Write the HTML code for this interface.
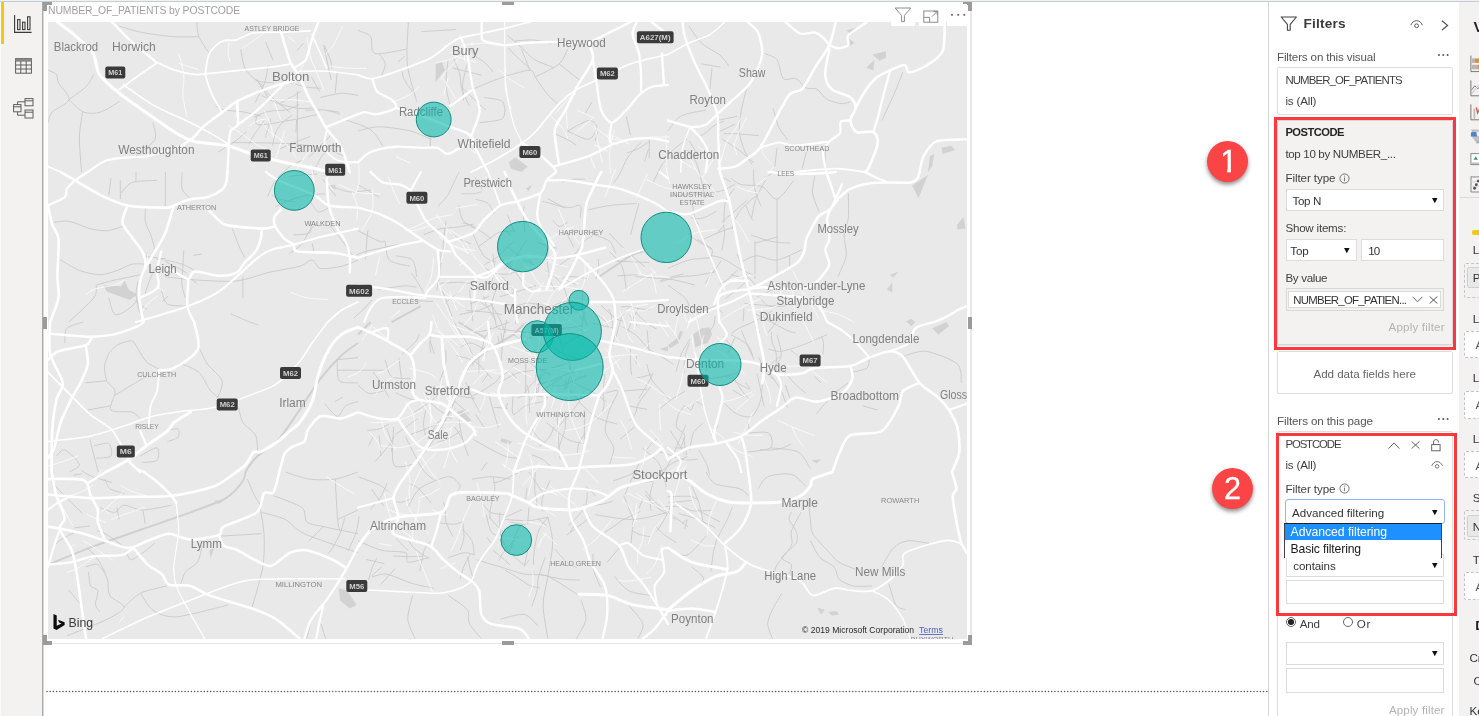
<!DOCTYPE html>
<html lang="en"><head><meta charset="utf-8"><title>Power BI - Filters</title>
<style>
html,body{margin:0;padding:0;background:#fff}
body{width:1479px;height:716px;overflow:hidden;position:relative;font-family:"Liberation Sans",sans-serif}
#app{position:absolute;left:0;top:0;width:1479px;height:716px;will-change:transform}
.b{position:absolute}
.t{position:absolute;white-space:nowrap;line-height:normal}
.ic{position:absolute;overflow:visible}
.map{position:absolute;display:block;font-family:"Liberation Sans",sans-serif}
.lb{fill:#808080;stroke:#ececec;stroke-width:1.4px;stroke-opacity:.4;paint-order:stroke}
.ls{fill:#868686;stroke:#ececec;stroke-width:1.2px;stroke-opacity:.4;paint-order:stroke}
.sh{fill:#d2d2d2;font-weight:700}
.bub{fill:#01b8aa;fill-opacity:.58;stroke:#0f8f84;stroke-width:1}
</style></head>
<body>
<div id="app">
<div class="b" style="left:0.0px;top:0.0px;width:1479.0px;height:1.0px;background:#eff2f4"></div>
<div class="b" style="left:0.0px;top:1.0px;width:1479.0px;height:1.0px;background:#c9cccf"></div>
<div class="b" style="left:0.0px;top:2.0px;width:42.0px;height:714.0px;background:#f3f2f1"></div>
<div class="b" style="left:0.0px;top:2.0px;width:1.2px;height:714.0px;background:#fbfbfb"></div>
<div class="b" style="left:1.0px;top:2.0px;width:3.0px;height:41.5px;background:#f2c811"></div>
<div class="b" style="left:42.0px;top:2.0px;width:1.0px;height:714.0px;background:#a9a9a9"></div>
<div class="b" style="left:43.0px;top:2.0px;width:0.6px;height:714.0px;background:#d9d9d9"></div>
<svg class="ic" style="left:13px;top:14px" width="20" height="20" viewBox="0 0 20 20" fill="none" stroke="#3b3a39" stroke-width="1.1"><path d="M1.6 1 V18.4 H18.6"/><rect x="4.6" y="5.6" width="2.4" height="10"/><rect x="9.6" y="8.2" width="2.4" height="7.4"/><rect x="14.6" y="2.8" width="2.4" height="12.8"/></svg>
<svg class="ic" style="left:14.5px;top:57.5px" width="17" height="16" viewBox="0 0 17 16" fill="none" stroke="#605e5c" stroke-width="1"><rect x="0.6" y="0.6" width="15.8" height="14.6"/><path d="M0.6 3 H16.4 M0.6 7 H16.4 M0.6 11 H16.4 M5.8 3 V15.2 M11.2 3 V15.2" /><rect x="0.6" y="0.6" width="15.8" height="2.4" fill="#8a8886" stroke="none"/></svg>
<svg class="ic" style="left:12.5px;top:97.5px" width="21" height="21" viewBox="0 0 21 21" fill="none" stroke="#605e5c" stroke-width="1"><rect x="12" y="0.6" width="8" height="7.2"/><path d="M12 2.8 H20"/><rect x="0.6" y="6.6" width="7.4" height="7.2"/><path d="M0.6 8.8 H8"/><rect x="12" y="12" width="8" height="8"/><path d="M12 14.2 H20"/><path d="M4.6 6.6 V3.8 H12 M4.6 13.8 V17.2 H12"/></svg>
<div class="b" style="left:970.2px;top:4.0px;width:1.6px;height:640.0px;background:#e7e7e7"></div>
<div class="b" style="left:47.0px;top:643.0px;width:924.8px;height:1.4px;background:#e7e7e7"></div>
<div class="b" style="left:42.6px;top:2.0px;width:9.4px;height:2.8px;background:#9b9b9b"></div>
<div class="b" style="left:42.6px;top:2.0px;width:4.0px;height:8.8px;background:#9b9b9b"></div>
<div class="b" style="left:962.7px;top:2.0px;width:9.4px;height:2.8px;background:#9b9b9b"></div>
<div class="b" style="left:968.1px;top:2.0px;width:4.0px;height:8.8px;background:#9b9b9b"></div>
<div class="b" style="left:43.2px;top:641.0px;width:8.8px;height:4.0px;background:#9b9b9b"></div>
<div class="b" style="left:43.2px;top:635.0px;width:3.8px;height:10.0px;background:#9b9b9b"></div>
<div class="b" style="left:963.0px;top:641.0px;width:9.1px;height:4.0px;background:#9b9b9b"></div>
<div class="b" style="left:968.3px;top:634.7px;width:3.8px;height:10.3px;background:#9b9b9b"></div>
<div class="b" style="left:42.6px;top:317.0px;width:4.0px;height:11.7px;background:#9b9b9b"></div>
<div class="b" style="left:968.3px;top:317.0px;width:3.8px;height:11.7px;background:#9b9b9b"></div>
<div class="b" style="left:501.5px;top:2.0px;width:12.0px;height:2.8px;background:#9b9b9b"></div>
<div class="b" style="left:501.5px;top:641.0px;width:12.0px;height:4.0px;background:#9b9b9b"></div>
<span class="t" style="left:48.1px;top:5.00px;font-size:10.4px;color:#a0a0a0;letter-spacing:-0.114px;">NUMBER_OF_PATIENTS by POSTCODE</span>
<svg class="map" style="left:48px;top:22px" width="919" height="617" viewBox="0 0 919 617">
<rect width="919" height="617" fill="#e9e9e9"/>
<path d="M387.6 41.9 393.8 39.8 397.0 48.2 387.6 59.7ZM460.9 140.4 467.2 135.2 479.8 144.6 473.5 150.1 463.0 146.7ZM798.2 8.4 809.7 5.2 804.4 12.6ZM801.3 16.8 806.5 21.0 801.3 24.1ZM824.4 32.5 838.0 29.3 838.0 35.6 831.7 38.8ZM818.1 46.1 826.5 37.7 825.4 48.2ZM893.5 125.8 903.0 123.7 907.2 127.9 894.6 132.0ZM882.0 134.1 886.2 132.0 884.1 144.6 879.9 150.1ZM55.5 263.2 73.4 264.2 76.5 257.9 80.7 267.4 89.1 272.6 81.7 277.9 58.7 269.5ZM280.9 163.6 287.2 162.6 287.2 167.8ZM477.7 166.8 484.0 162.6 480.8 168.9ZM864.2 163.6 879.9 153.1 870.5 176.2ZM909.2 202.4 915.5 195.1 917.6 206.6 909.2 207.6ZM842.2 252.7 850.6 249.6 845.3 255.8ZM839.0 267.4 844.3 260.0 844.3 270.5ZM856.8 300.1 863.1 296.7 867.3 300.1ZM408.5 390.1 414.8 388.0 423.2 398.5 419.0 400.6ZM453.6 416.3 464.1 419.5 460.9 422.6 452.5 419.5ZM611.8 327.2 620.0 324.1 620.0 329.3ZM645.2 312.6 653.5 306.3 661.9 305.2 664.0 312.6 659.8 321.0 647.2 325.2ZM620.0 323.1 628.4 316.8 632.6 308.4 634.7 310.5 630.5 321.0 622.1 326.2ZM858.9 300.0 867.3 300.0 863.1 304.2ZM884.1 306.3 898.8 300.0 900.9 304.2 890.4 312.6ZM763.6 438.3 773.0 437.3 768.8 441.5ZM161.4 528.3 166.2 526.0 162.6 536.6ZM290.8 566.3 299.1 568.7 308.6 582.9 301.5 586.5 292.0 578.2ZM166.2 478.5 175.7 478.5 170.9 482.0ZM769.5 585.8 776.7 587.7 773.1 592.4ZM780.2 590.0 788.5 588.9 790.9 592.4 783.8 593.6Z" fill="#d2d2d2"/>
<path d="M343.5 300.1 372.9 284.1M551.0 254.8C555.5 251.8 576.2 237.4 582.5 233.8C588.8 230.2 593.3 230.2 595.1 229.6M310.0 321.0C307.6 322.8 298.8 328.4 293.4 333.5C288.1 338.6 278.5 348.8 272.5 356.6C266.5 364.4 257.5 379.3 251.5 388.0C245.5 396.7 236.5 410.8 230.6 417.4C224.6 423.9 214.2 430.0 210.0 433.7C205.8 437.5 203.0 441.5 201.2 443.8C199.4 446.1 198.0 449.2 197.4 450.1M310.0 312.6C311.2 311.4 316.6 306.0 318.4 304.2C320.2 302.4 322.0 300.6 322.6 300.0M410.6 300.0C413.0 301.5 423.8 308.4 427.4 310.5C431.0 312.6 434.6 314.1 435.8 314.7M360.3 450.1C363.9 445.4 379.2 426.8 385.5 417.4C391.7 407.9 400.7 391.6 404.3 383.8C407.9 376.1 407.9 368.9 410.6 362.9C413.3 356.9 418.4 347.3 423.2 341.9C428.0 336.5 438.2 329.3 444.1 325.2C450.1 321.0 460.3 316.2 465.1 312.6C469.9 309.0 475.9 301.8 477.7 300.0M0.0 542.6C6.8 539.9 33.9 528.7 47.5 523.6C61.0 518.5 81.4 511.7 94.9 507.0C108.5 502.2 130.6 494.8 142.4 490.4C154.3 485.9 170.6 480.5 178.0 476.1C185.5 471.7 191.9 463.2 194.6 459.5C197.4 455.8 197.1 451.4 197.5 450.0" fill="none" stroke="#d0d0d0" stroke-width="2"/>
<path d="M0.0 48.2C1.2 48.8 6.9 50.6 8.4 52.4C9.9 54.2 8.7 57.2 10.5 60.8C12.3 64.4 21.9 73.4 21.0 77.6C20.1 81.7 7.2 86.8 4.2 90.1C1.2 93.4 0.6 99.1 0.0 100.6M21.0 77.6C23.1 79.3 31.1 88.3 35.6 90.1C40.1 91.9 47.3 91.6 52.4 90.1C57.5 88.6 68.6 81.1 71.3 79.6M46.1 52.4C44.9 54.2 41.3 61.4 37.7 65.0C34.1 68.6 23.4 75.8 21.0 77.6M34.6 90.1C34.1 93.7 31.6 106.7 31.4 115.3C31.3 123.8 33.2 145.1 33.5 150.1M104.8 100.6C105.1 103.0 109.3 112.6 106.9 117.4C104.5 122.2 90.7 131.7 88.0 134.1M148.8 0.0C149.1 2.1 149.1 10.2 150.9 14.7C152.7 19.2 159.9 29.0 161.4 31.4M71.3 4.2C74.6 5.1 86.5 9.0 94.3 10.5C102.1 12.0 117.7 14.1 125.8 14.7C133.8 15.3 147.3 14.7 150.9 14.7M209.6 92.2C209.6 93.7 205.1 101.8 209.6 102.7C214.1 103.6 232.4 100.0 241.0 98.5C249.7 97.0 266.2 93.1 270.4 92.2M249.4 69.2 249.4 125.8M184.4 120.5C192.5 120.7 227.6 120.8 241.0 121.6C254.5 122.3 273.4 125.2 278.8 125.8M192.8 27.2C193.4 29.9 194.6 41.6 197.0 46.1C199.4 50.6 205.4 56.6 209.6 58.7C213.8 60.8 224.0 60.5 226.4 60.8M272.5 75.5C275.5 74.9 288.1 71.6 293.4 71.3C298.8 71.0 307.6 73.1 310.0 73.4M289.2 50.3 287.2 71.3M360.3 0.0C360.2 6.0 358.1 30.5 359.3 41.9C360.5 53.3 367.3 74.3 368.7 79.6M310.0 8.4C311.8 9.3 320.2 11.4 322.6 14.7C325.0 18.0 321.7 29.6 326.8 31.4C331.9 33.2 353.7 27.8 358.2 27.2M331.0 31.4C331.9 32.9 336.9 38.6 337.2 41.9C337.5 45.2 333.7 52.7 333.1 54.5M400.1 37.7C399.8 41.3 397.7 56.3 398.0 62.9C398.3 69.5 401.6 80.8 402.2 83.8M456.7 54.5C460.3 53.6 477.4 47.9 481.9 48.2C486.4 48.5 485.8 53.3 488.2 56.6C490.6 59.9 495.6 67.7 498.6 71.3C501.6 74.9 507.6 80.2 509.1 81.7M473.5 27.2 481.9 48.2M519.6 27.2C518.4 29.3 515.7 38.0 511.2 41.9C506.7 45.8 491.5 52.7 488.2 54.5M511.2 41.9 532.2 58.7M435.8 75.5C438.5 76.1 451.9 76.7 454.6 79.6C457.3 82.6 457.9 93.4 454.6 96.4C451.3 99.4 434.9 100.0 431.6 100.6M425.3 67.1C427.4 66.2 435.5 62.6 440.0 60.8C444.4 59.0 454.3 55.4 456.7 54.5M310.0 109.0C313.0 108.4 323.5 104.8 331.0 104.8C338.4 104.8 354.9 107.2 362.4 109.0C369.9 110.8 380.4 116.2 383.4 117.4M382.3 113.2 382.3 125.8M519.6 109.0C522.6 107.5 536.4 99.1 540.6 98.5C544.8 97.9 548.9 102.1 548.9 104.8C548.9 107.5 544.8 116.8 540.6 117.4C536.4 118.0 522.6 110.2 519.6 109.0M578.3 94.3 582.5 113.2M601.3 117.4 601.3 136.2M641.0 4.2C642.8 6.6 649.0 16.8 653.5 21.0C658.0 25.2 668.5 30.2 672.4 33.5C676.3 36.8 679.6 42.5 680.8 44.0M653.5 41.9 672.4 45.1M664.0 46.1 661.9 67.1M716.4 31.4C718.2 32.3 726.3 34.1 729.0 37.7C731.7 41.3 732.6 53.9 735.3 56.6C738.0 59.3 744.6 55.2 747.9 56.6C751.2 57.9 755.3 64.5 758.3 66.0C761.3 67.5 765.8 65.4 768.8 67.1C771.8 68.7 775.7 75.5 779.3 77.6C782.9 79.6 790.7 81.4 794.0 81.7C797.3 82.0 801.2 79.9 802.4 79.6M699.6 62.9C698.8 66.5 694.6 81.4 693.4 88.0C692.2 94.6 691.0 103.6 691.3 109.0C691.6 114.4 693.7 121.0 695.5 125.8C697.3 130.6 702.6 140.1 703.8 142.5M669.3 98.5 689.2 94.3M620.0 109.0C621.8 106.9 627.2 97.3 632.6 94.3C638.0 91.3 654.1 88.9 657.7 88.0M854.8 50.3C853.6 53.3 849.4 64.4 846.4 71.3C843.4 78.2 835.6 94.6 833.8 98.5M729.0 125.8 726.9 144.6M758.3 130.0 754.1 146.7M777.2 125.8 777.2 146.7M6.3 200.3C8.4 200.2 15.9 198.4 21.0 199.3C26.1 200.2 36.5 205.2 41.9 206.6C47.3 207.9 54.0 209.0 58.7 208.7C63.3 208.4 72.2 205.1 74.4 204.5M62.9 156.3 60.8 173.1M72.3 158.4 72.3 177.2M73.4 171.0C74.9 169.5 78.8 162.3 83.8 160.5C88.9 158.7 105.4 158.7 109.0 158.4M88.0 150.0 88.0 160.5M117.4 150.0 117.4 185.6M134.1 150.0C134.1 152.4 132.9 162.9 134.1 166.8C135.3 170.7 141.3 175.8 142.5 177.2M97.5 185.6C97.5 187.7 96.7 196.4 97.5 200.3C98.2 204.2 101.4 209.0 102.7 212.9C104.1 216.8 106.3 225.5 106.9 227.6M184.4 206.6C185.3 209.0 188.9 219.2 190.7 223.4C192.5 227.6 196.1 234.1 197.0 235.9M12.6 238.0C15.3 239.5 25.8 246.4 31.4 248.5C37.1 250.6 47.0 252.7 52.4 252.7C57.8 252.7 64.7 250.0 69.2 248.5C73.7 247.0 79.8 243.1 83.8 242.2C87.9 241.3 95.5 242.2 97.5 242.2M48.2 263.2C48.1 264.7 49.0 270.4 47.2 273.7C45.4 277.0 39.4 282.5 35.6 286.2C31.9 290.0 23.1 298.1 21.0 300.1M48.2 263.2C50.3 262.6 56.6 260.5 62.9 259.0C69.2 257.5 88.0 253.6 92.2 252.7M60.8 275.8C61.7 278.2 64.1 291.0 67.1 292.5C70.1 294.0 78.3 288.6 81.7 286.2C85.2 283.8 89.8 277.3 91.2 275.8M117.4 238.0C119.8 238.6 130.0 240.7 134.1 242.2C138.3 243.7 144.9 247.6 146.7 248.5M117.4 254.8C121.6 255.2 136.5 257.3 146.7 257.9C156.9 258.5 178.2 260.0 188.6 259.0C199.1 257.9 211.1 252.7 220.1 250.6C229.1 248.5 245.2 246.1 251.5 244.3C257.8 242.5 261.1 237.7 264.1 238.0C267.1 238.3 268.3 245.5 272.5 246.4C276.7 247.3 288.1 245.5 293.4 244.3C298.8 243.1 307.6 238.9 310.0 238.0M194.9 254.8 194.9 275.8M113.2 267.4C114.1 269.5 115.7 279.7 119.5 282.0C123.2 284.4 136.5 283.8 139.4 284.1M245.2 212.9C247.6 212.6 259.6 212.9 262.0 210.8C264.4 208.7 262.0 200.0 262.0 198.2M262.0 179.3C263.2 180.8 267.7 188.9 270.4 189.8C273.1 190.7 279.4 186.2 280.9 185.6M264.1 221.3 266.2 230.7M410.6 183.5C411.2 185.6 412.4 194.9 414.8 198.2C417.2 201.5 425.6 205.4 427.4 206.6M425.3 212.9C426.8 215.9 432.5 229.9 435.8 233.8C439.1 237.7 446.5 239.2 448.3 240.1M337.2 219.2C337.8 221.9 337.8 234.4 341.4 238.0C345.0 241.6 359.4 243.4 362.4 244.3M494.4 179.3C498.0 180.2 514.2 185.0 519.6 185.6C525.0 186.2 530.4 182.0 532.2 183.5C534.0 185.0 532.2 194.3 532.2 196.1M504.9 198.2C505.8 199.1 509.1 204.2 511.2 204.5C513.3 204.8 518.4 200.9 519.6 200.3M540.6 187.7C543.6 187.1 554.6 184.4 561.5 183.5C568.4 182.6 584.9 181.7 588.8 181.4M561.5 229.6C563.3 231.7 571.7 238.9 574.1 244.3C576.5 249.7 577.7 264.1 578.3 267.4M590.9 181.4 582.5 212.9M310.0 208.7C313.0 210.2 327.1 217.7 331.0 219.2C334.9 220.7 336.3 219.2 337.2 219.2M347.7 233.8C350.1 234.4 361.5 235.0 364.5 238.0C367.5 241.0 368.1 252.4 368.7 254.8M393.8 267.4 404.3 294.6M310.0 162.6 331.0 175.2M427.4 177.2C429.2 177.8 437.3 179.3 440.0 181.4C442.6 183.5 445.3 190.4 446.2 191.9M519.6 212.9 525.9 225.5M546.8 212.9C548.9 213.8 558.5 216.5 561.5 219.2C564.5 221.9 566.9 229.9 567.8 231.7M729.0 177.2 729.0 254.8M707.0 219.2 707.0 256.9M682.9 156.3C684.4 157.2 688.9 161.4 693.4 162.6C697.9 163.8 709.2 162.6 714.3 164.7C719.4 166.8 724.5 178.1 729.0 177.2C733.5 176.3 743.4 161.1 745.8 158.4M766.7 154.2C766.4 156.6 764.0 165.9 764.6 171.0C765.2 176.1 770.0 187.1 770.9 189.8M800.3 171.0C800.3 174.6 800.9 190.1 800.3 196.1C799.7 202.1 796.4 207.5 796.1 212.9C795.8 218.3 799.1 227.9 798.2 233.8C797.3 239.8 791.0 251.8 789.8 254.8M741.6 233.8 741.6 244.3M707.0 221.3 729.0 215.0M693.4 240.1C695.5 239.2 702.9 234.1 708.0 233.8C713.1 233.5 722.4 238.9 729.0 238.0C735.6 237.1 750.6 229.0 754.1 227.6M649.3 217.1C651.4 218.6 662.2 224.9 664.0 227.6C665.8 230.2 662.2 234.7 661.9 235.9M620.0 246.4C623.0 245.2 635.0 239.5 641.0 238.0C646.9 236.5 658.9 236.2 661.9 235.9M620.0 263.2C622.4 265.0 633.8 272.8 636.8 275.8C639.8 278.8 640.4 282.9 641.0 284.1M682.9 252.7 691.3 254.8M712.2 275.8C713.4 277.0 717.0 282.9 720.6 284.1C724.2 285.3 735.0 284.1 737.4 284.1M60.8 331.4C62.0 330.2 65.9 324.9 69.2 323.1C72.5 321.3 80.8 318.3 83.8 318.9C86.8 319.5 88.0 324.3 90.1 327.2C92.2 330.2 95.5 337.0 98.5 339.8C101.5 342.7 109.3 346.1 111.1 347.2M60.8 331.4C60.2 333.2 56.9 340.1 56.6 344.0C56.3 347.9 57.2 355.1 58.7 358.7C60.2 362.3 66.5 365.0 67.1 369.2C67.7 373.4 60.5 385.0 62.9 388.0C65.3 391.0 79.6 388.9 83.8 390.1C88.0 391.3 91.0 395.5 92.2 396.4M67.1 373.4C69.5 371.9 79.3 365.6 83.8 362.9C88.3 360.2 96.4 355.7 98.5 354.5M37.7 360.8 58.7 358.7M39.8 388.0 62.9 383.8M16.8 321.0C17.1 318.9 16.2 309.3 18.9 306.3C21.6 303.3 33.2 300.9 35.6 300.0M134.1 341.9C136.5 343.1 147.0 346.7 150.9 350.3C154.8 353.9 158.7 363.5 161.4 367.1C164.1 370.7 168.6 374.3 169.8 375.5M150.9 325.2C152.1 327.5 156.0 337.1 159.3 341.9C162.6 346.7 172.5 353.9 174.0 358.7C175.5 363.5 170.4 373.1 169.8 375.5M190.7 385.9C191.3 388.0 192.5 396.7 194.9 400.6C197.3 404.5 205.4 409.0 207.5 413.2C209.6 417.4 209.3 427.6 209.6 430.0M289.2 337.7 310.0 335.6M289.2 348.2 310.0 348.2M289.2 337.7C289.5 340.7 288.4 355.4 291.3 358.7C294.3 362.0 307.3 360.5 310.0 360.8M276.7 381.7C278.5 383.5 286.3 394.0 289.2 394.3C292.2 394.6 294.7 385.9 297.6 383.8C300.6 381.7 308.2 380.2 310.0 379.6M41.9 417.4C42.5 419.8 44.9 429.5 46.1 434.1C47.3 438.8 49.7 447.8 50.3 450.1M46.1 423.7C48.2 423.4 58.4 420.1 60.8 421.6C63.2 423.1 64.7 432.0 62.9 434.1C61.1 436.2 50.3 435.9 48.2 436.2M8.4 434.1C9.6 433.2 13.5 426.7 16.8 427.9C20.1 429.1 30.8 439.4 31.4 442.5C32.0 445.7 22.5 449.0 21.0 450.1M92.2 434.1C94.6 432.9 106.6 425.2 109.0 425.8C111.4 426.4 111.1 436.2 109.0 438.3C106.9 440.4 96.4 440.1 94.3 440.4M117.4 409.0C119.2 408.7 128.2 406.0 130.0 406.9C131.7 407.8 131.4 413.5 130.0 415.3C128.5 417.1 121.0 418.9 119.5 419.5M337.2 337.7C338.1 340.1 339.9 351.8 343.5 354.5C347.1 357.2 359.7 356.3 362.4 356.6M310.0 348.2 337.2 348.2M412.7 325.2C414.2 324.6 419.9 320.7 423.2 321.0C426.5 321.3 434.0 326.3 435.8 327.2M408.5 333.5C411.2 334.4 422.3 336.5 427.4 339.8C432.5 343.1 441.7 354.2 444.1 356.6M456.7 352.4C458.5 350.9 466.3 343.7 469.3 341.9C472.3 340.1 476.5 340.1 477.7 339.8M477.7 339.8 477.7 372.3M465.1 373.4C465.1 376.1 463.3 390.7 465.1 392.2C466.9 393.7 473.5 385.6 477.7 383.8C481.9 382.0 492.1 380.2 494.4 379.6M509.1 392.2 511.2 430.0M498.6 400.6C501.6 403.0 514.2 414.4 519.6 417.4C525.0 420.4 534.0 421.0 536.4 421.6M536.4 388.0 536.4 417.4M557.3 371.3C559.1 371.0 569.3 366.8 569.9 369.2C570.5 371.6 563.3 382.3 561.5 388.0C559.7 393.7 556.7 403.6 557.3 409.0C557.9 414.4 565.1 421.0 565.7 425.8C566.3 430.6 562.1 440.1 561.5 442.5M582.5 327.2C582.8 331.1 581.6 350.9 584.6 354.5C587.6 358.1 600.7 352.7 603.4 352.4M599.2 308.4 601.3 331.4M574.1 369.2 599.2 367.1M425.3 417.4C427.4 418.6 435.5 423.4 440.0 425.8C444.4 428.2 452.5 432.6 456.7 434.1C460.9 435.6 467.5 435.9 469.3 436.2M345.6 404.8C345.6 410.2 342.9 437.1 345.6 442.5C348.3 447.9 361.8 442.5 364.5 442.5M331.0 413.2 333.1 434.1M406.4 404.8 414.8 417.4M427.4 392.2 435.8 404.8M310.0 362.9C311.5 364.1 316.9 370.4 320.5 371.3C324.1 372.2 333.1 369.5 335.2 369.2M586.7 404.8 572.0 417.4M693.4 308.4 703.8 333.5M682.9 312.6C685.3 314.1 696.4 319.5 699.6 323.1C702.9 326.6 705.0 335.6 705.9 337.7M729.0 312.6C729.6 315.6 733.8 328.4 733.2 333.5C732.6 338.6 726.0 346.1 724.8 348.2M720.6 327.2C722.4 327.5 728.4 329.9 733.2 329.3C738.0 328.7 747.6 325.5 754.1 323.1C760.7 320.7 775.7 314.1 779.3 312.6M804.4 350.3C806.5 349.7 816.7 347.9 819.1 346.1C821.5 344.3 820.9 338.9 821.2 337.7M854.8 334.6C858.0 333.8 870.0 328.3 877.8 329.3C885.6 330.4 904.2 337.4 909.2 341.9C914.3 346.4 912.8 358.1 913.4 360.8M697.6 360.8C698.2 361.7 702.9 367.1 701.7 367.1C700.5 367.1 692.2 362.6 689.2 360.8C686.2 359.0 682.0 355.4 680.8 354.5M676.6 381.7C678.4 383.2 685.3 390.4 689.2 392.2C693.1 394.0 700.5 396.1 703.8 394.3C707.1 392.5 710.7 384.1 712.2 379.6C713.7 375.2 714.0 365.3 714.3 362.9M699.6 400.6 701.7 409.0M699.6 411.1C702.6 411.1 717.3 409.0 720.6 411.1C723.9 413.2 725.7 423.1 722.7 425.8C719.7 428.5 702.9 429.4 699.6 430.0M722.7 425.8C726.6 426.4 744.3 427.0 750.0 430.0C755.6 432.9 760.7 444.3 762.5 446.7M630.5 392.2C631.4 391.0 635.0 384.4 636.8 383.8C638.6 383.2 641.6 388.6 643.1 388.0C644.6 387.4 645.5 380.2 647.2 379.6C649.0 379.0 654.4 383.2 655.6 383.8M630.5 392.2C630.2 394.0 627.5 401.8 628.4 404.8C629.3 407.8 636.2 410.2 636.8 413.2C637.4 416.2 633.2 424.0 632.6 425.8M737.4 362.9 741.6 375.5M814.9 383.8 829.6 388.0M766.7 354.5 773.0 360.8M850.6 383.8 852.7 369.2M57.0 457.1C57.6 458.5 59.0 464.6 61.7 466.6C64.4 468.7 73.9 470.7 76.0 471.4M52.2 485.6C54.3 486.3 63.1 490.7 66.5 490.4C69.9 490.0 71.9 483.6 76.0 483.2C80.0 482.9 88.2 488.0 94.9 488.0C101.7 488.0 119.4 483.9 123.4 483.2M94.9 488.0 97.3 502.2M68.8 485.6 71.2 497.5M199.4 457.1C200.4 459.5 204.8 470.3 206.5 473.7C208.2 477.1 210.6 479.8 211.3 480.9M211.3 480.9C211.9 485.3 215.5 502.6 216.0 511.7C216.5 520.9 216.5 534.4 214.8 544.9C213.1 555.5 205.7 579.5 204.1 585.3M287.2 457.1C287.6 462.9 288.9 490.0 289.6 497.5C290.3 504.9 291.6 507.6 292.0 509.3M237.4 450.0C240.8 451.0 254.0 456.1 261.1 457.1C268.2 458.1 280.2 458.1 287.2 457.1C294.2 456.1 306.7 451.0 310.0 450.0M225.5 473.7C229.6 475.4 249.2 481.9 254.0 485.6C258.7 489.3 255.7 497.1 258.7 499.8C261.8 502.6 268.0 502.9 275.3 504.6C282.7 506.3 305.0 510.7 310.0 511.7M275.3 504.6 261.1 518.8M310.0 488.0 289.6 497.5M213.6 490.4C217.0 491.4 231.3 494.4 237.4 497.5C243.5 500.5 246.0 507.0 256.4 511.7C266.7 516.5 302.3 528.0 310.0 530.7M154.3 523.6C153.6 526.0 151.9 536.5 149.5 540.2C147.2 543.9 140.0 546.6 137.7 549.7C135.3 552.7 133.6 559.9 132.9 561.6M38.0 544.9C39.7 544.6 46.8 540.9 49.8 542.6C52.9 544.3 57.6 552.4 59.3 556.8C61.0 561.2 59.3 569.4 61.7 573.4C64.1 577.5 76.3 581.9 76.0 585.3C75.6 588.7 67.5 593.1 59.3 597.2C51.2 601.2 24.8 611.4 19.0 613.8M40.4 549.7C40.7 551.7 41.4 561.2 42.7 563.9C44.1 566.6 49.2 566.0 49.8 568.7C50.5 571.4 47.1 579.9 47.5 582.9C47.8 586.0 51.5 589.0 52.2 590.0M92.6 571.1C94.3 573.4 99.4 584.3 104.4 587.7C109.5 591.1 117.3 595.5 128.2 594.8C139.0 594.1 172.9 584.6 180.4 582.9M76.0 585.3C78.3 583.3 86.5 574.1 92.6 571.1C98.7 568.0 115.0 565.0 118.7 563.9M78.3 530.7C79.0 531.7 80.7 537.8 83.1 537.8C85.5 537.8 91.6 533.1 94.9 530.7C98.3 528.3 105.1 522.6 106.8 521.2M263.5 597.2 258.7 616.6M273.0 601.9 277.7 616.6M173.3 514.1 213.6 511.7M310.0 454.7C313.4 456.1 328.7 461.2 333.7 464.2C338.8 467.3 343.9 474.4 345.6 476.1M359.8 485.6C361.5 482.9 366.0 471.0 371.7 466.6C377.5 462.2 394.4 455.1 400.2 454.7C406.0 454.4 411.4 461.5 412.1 464.2C412.7 467.0 406.0 472.4 404.9 473.7M423.9 457.1C426.6 456.8 437.5 454.7 442.9 454.7C448.4 454.7 459.2 456.8 461.9 457.1M480.9 450.0C482.3 452.0 488.4 461.2 490.4 464.2C492.4 467.3 494.5 470.3 495.1 471.4M433.4 480.9C434.8 482.2 439.5 488.7 442.9 490.4C446.3 492.0 455.1 492.4 457.2 492.7M438.2 492.7C438.9 495.1 441.2 506.3 442.9 509.3C444.6 512.4 449.0 513.4 450.0 514.1M480.9 485.6 479.7 502.2M457.2 497.5C460.6 497.6 474.8 499.0 480.9 498.7C487.0 498.3 497.2 495.6 499.9 495.1M499.9 495.1C498.5 497.1 492.4 503.9 490.4 509.3C488.4 514.8 486.3 527.0 485.7 533.1C485.0 539.2 485.7 549.4 485.7 552.1M499.9 495.1C500.6 498.8 504.6 512.7 504.6 521.2C504.6 529.7 501.2 545.6 499.9 554.4C498.5 563.3 495.1 574.0 495.1 582.9C495.1 591.8 499.2 611.8 499.9 616.6M428.7 537.8C432.1 538.8 445.6 542.9 452.4 544.9C459.2 547.0 469.4 550.7 476.2 552.1C482.9 553.4 492.1 551.4 499.9 554.4C507.7 557.5 526.3 570.7 530.8 573.4M445.3 528.3 461.9 542.6M464.3 533.1C466.0 534.4 473.8 541.9 476.2 542.6C478.5 543.3 480.2 538.5 480.9 537.8M400.2 535.5C402.6 534.8 413.1 531.0 416.8 530.7C420.5 530.4 425.0 532.7 426.3 533.1M414.4 507.0C415.8 508.7 422.2 515.1 423.9 518.8C425.6 522.6 426.0 531.0 426.3 533.1M310.0 518.8C313.4 520.2 327.0 526.6 333.7 528.3C340.5 530.0 353.7 529.0 357.5 530.7C361.2 532.4 356.5 539.5 359.8 540.2C363.2 540.9 378.2 536.1 381.2 535.5M333.7 544.9C332.4 546.3 323.6 553.4 324.2 554.4C324.9 555.5 332.7 551.1 338.5 552.1C344.2 553.1 357.8 559.5 364.6 561.6C371.4 563.6 382.9 565.6 386.0 566.3M364.6 573.4C363.9 576.8 359.5 591.0 359.8 597.2C360.2 603.3 366.0 613.9 367.0 616.6M400.2 573.4C402.9 575.5 416.1 583.6 419.2 587.7C422.2 591.7 419.5 597.8 421.6 601.9C423.6 606.1 431.7 614.5 433.4 616.6M452.4 597.2C455.8 596.5 470.7 591.4 476.2 592.4C481.6 593.4 488.4 602.6 490.4 604.3M533.1 578.2C533.8 580.9 538.5 591.7 537.9 597.2C537.2 602.7 529.7 613.9 528.4 616.6M585.3 497.5 583.0 521.2M547.4 492.7C552.8 493.4 575.0 497.8 585.3 497.5C595.7 497.1 615.0 491.4 620.0 490.4M566.4 554.4C568.4 556.5 575.5 566.0 580.6 568.7C585.7 571.4 598.9 572.8 602.0 573.4M559.2 540.2 571.1 526.0M537.9 464.2 547.4 473.7M580.6 582.9C582.6 585.6 593.5 597.1 594.8 601.9C596.2 606.7 590.8 614.5 590.1 616.6M575.8 473.7 585.3 497.5M348.0 516.5 359.8 528.3M658.0 450.0C659.3 451.7 662.7 459.5 667.5 461.9C672.2 464.2 686.5 464.9 691.2 466.6C696.0 468.3 699.3 472.7 700.7 473.7M710.2 466.6C711.6 464.9 714.9 456.8 719.7 454.7C724.4 452.7 738.0 451.0 743.4 452.4C748.9 453.7 755.6 462.5 757.7 464.2M643.7 464.2C644.8 466.6 649.2 475.4 650.9 480.9C652.6 486.3 654.9 499.2 655.6 502.2M620.0 480.9 643.7 478.5M634.2 502.2C634.9 501.5 638.7 496.8 639.0 497.5C639.3 498.2 637.0 505.6 636.6 507.0M684.1 485.6C683.4 487.3 681.7 492.4 679.3 497.5C677.0 502.6 669.8 513.7 667.5 521.2C665.1 528.7 663.4 545.6 662.7 549.7M743.4 490.4C743.1 491.4 740.4 494.8 741.1 497.5C741.7 500.2 747.2 506.0 748.2 509.3C749.2 512.7 750.2 517.5 748.2 521.2C746.1 524.9 734.6 532.4 733.9 535.5C733.3 538.5 742.4 540.2 743.4 542.6C744.4 544.9 741.4 550.7 741.1 552.1M752.9 490.4C751.6 493.1 744.8 504.6 743.4 509.3C742.1 514.1 745.5 518.8 743.4 523.6C741.4 528.3 731.6 538.8 729.2 542.6C726.8 546.3 727.2 548.7 726.8 549.7M760.0 476.1C760.4 479.2 761.7 492.4 762.4 497.5C763.1 502.6 762.1 507.0 764.8 511.7C767.5 516.5 777.7 526.6 781.4 530.7C785.1 534.8 787.2 537.8 790.9 540.2C794.6 542.6 805.1 546.3 807.5 547.3M762.4 518.8C763.8 521.2 768.5 531.7 771.9 535.5C775.3 539.2 783.4 541.9 786.2 544.9C788.9 548.0 788.2 554.1 790.9 556.8C793.6 559.5 800.4 562.9 805.1 563.9C809.9 565.0 821.4 563.9 824.1 563.9M733.9 571.1C732.6 573.4 726.5 583.3 724.4 587.7C722.4 592.1 719.7 597.8 719.7 601.9C719.7 606.1 723.8 614.5 724.4 616.6M833.6 544.9C835.3 542.2 841.8 529.7 845.5 526.0C849.2 522.2 854.7 519.5 859.7 518.8C864.8 518.2 878.1 520.9 881.1 521.2M840.8 561.6C841.8 564.6 845.5 579.2 847.9 582.9C850.2 586.7 856.0 587.0 857.4 587.7M620.0 528.3C622.7 529.0 633.6 535.1 639.0 533.1C644.4 531.0 655.3 516.8 658.0 514.1M643.7 544.9C645.4 546.6 655.6 553.4 655.6 556.8C655.6 560.2 645.4 567.0 643.7 568.7M492.7 351.4 489.8 370.5M572.7 285.0C573.8 284.9 577.7 284.2 580.7 284.5C583.8 284.8 590.7 286.9 593.8 287.2C597.0 287.6 601.4 287.1 602.7 287.1M459.5 381.1 457.1 389.6M580.6 383.9 598.8 387.3M454.2 281.9C456.3 282.1 465.3 283.5 469.1 283.4C472.9 283.3 476.2 281.0 480.6 281.1C485.1 281.2 497.5 283.8 500.3 284.3M496.9 351.7C495.3 352.9 488.5 357.3 485.5 360.1C482.5 362.9 477.3 369.8 476.0 371.4M459.9 386.4 445.7 385.3M637.3 369.0C635.6 370.0 629.0 373.6 625.2 376.3C621.3 379.0 612.5 386.4 610.4 388.1M640.1 211.8C641.2 212.7 644.7 215.8 648.1 218.1C651.5 220.3 661.8 226.0 664.1 227.3M481.7 287.2C484.4 286.8 495.6 285.9 500.4 284.9C505.1 283.9 511.3 280.9 515.0 280.0C518.7 279.1 524.5 279.0 526.1 278.8M368.4 265.1C366.7 264.9 360.6 263.7 356.6 263.8C352.6 264.0 344.5 265.5 340.7 266.0C336.8 266.6 331.2 267.3 329.6 267.5M452.4 353.9C451.7 354.8 450.3 357.9 447.4 360.2C444.4 362.6 435.2 368.5 431.7 370.5C428.2 372.5 424.4 373.7 423.1 374.2M639.5 434.5C637.2 435.6 627.6 439.1 623.0 442.0C618.4 445.0 609.6 453.2 607.4 455.0M545.4 291.0C546.7 291.8 552.2 294.5 554.8 296.8C557.3 299.1 562.0 305.7 563.2 307.2M514.1 355.6C512.0 357.0 502.6 363.4 499.5 365.2C496.3 367.1 494.7 366.7 492.3 368.5C489.9 370.3 484.1 376.5 482.7 377.9M403.5 212.1C404.5 212.7 407.6 214.9 410.4 216.3C413.1 217.7 421.1 221.2 422.9 222.0M584.2 286.7C586.3 288.8 595.7 298.6 599.2 301.5C602.6 304.4 607.3 306.2 608.6 307.0M436.3 246.2C438.2 247.0 446.0 251.0 449.7 251.7C453.3 252.5 458.7 252.4 461.9 251.8C465.0 251.2 470.4 248.3 471.9 247.8M458.6 297.7C458.4 298.9 457.6 303.0 457.1 306.1C456.5 309.2 455.3 314.7 454.8 319.4C454.2 324.1 453.3 336.1 453.1 338.9M512.8 255.5 528.3 262.4M435.7 274.1C436.0 275.2 436.1 278.5 437.9 282.0C439.6 285.6 446.6 296.6 448.0 299.0M544.2 214.2C543.1 215.0 538.9 216.6 536.3 219.2C533.8 221.8 530.1 229.0 526.3 232.5C522.6 236.0 512.6 242.1 510.4 243.7M499.4 176.5 516.4 185.9M457.2 207.8 462.4 213.4M686.8 315.8 679.7 331.1M503.3 308.1C506.4 307.7 520.2 305.9 524.7 305.3C529.2 304.7 533.4 304.1 534.9 303.9M210.2 302.9C208.9 302.4 203.3 300.6 200.6 299.6C197.9 298.5 193.8 296.7 191.3 295.6C188.8 294.5 184.2 292.4 183.0 291.8M635.4 415.8 638.6 433.1M417.8 360.1C418.7 362.5 422.6 372.6 424.7 377.0C426.7 381.4 431.1 388.7 432.2 390.7M294.8 375.1 287.1 379.6M600.4 127.3 596.5 139.6M673.5 154.7 682.6 159.7M654.5 401.6C653.7 402.3 649.7 405.4 648.3 407.0C646.9 408.6 645.6 409.9 644.6 413.0C643.7 416.0 642.2 426.1 641.8 428.3M400.0 370.2C402.0 370.8 409.9 373.8 413.8 374.6C417.6 375.5 425.1 376.0 427.0 376.2M537.0 289.8C536.6 291.5 534.6 298.1 534.2 301.2C533.7 304.3 534.0 310.1 534.0 311.6M451.8 490.5C451.9 493.4 451.1 505.2 452.3 510.9C453.5 516.6 458.9 527.3 460.0 530.1M545.0 301.2C546.9 301.6 554.7 303.6 557.9 304.4C561.1 305.1 566.1 306.0 567.4 306.3M581.2 285.2C580.1 286.6 575.6 290.8 573.7 295.1C571.8 299.5 568.7 312.7 567.8 315.6M590.3 286.2C589.3 288.3 584.7 297.0 583.1 300.6C581.5 304.3 579.6 310.1 579.0 311.7M476.9 328.7 486.9 330.4M574.7 304.9C576.7 306.2 584.8 310.4 588.5 313.6C592.3 316.7 596.9 323.9 600.8 327.1C604.6 330.2 613.3 334.4 615.4 335.7M483.6 406.4C484.4 407.6 487.3 412.5 489.3 414.6C491.2 416.8 496.3 420.5 497.5 421.4M442.6 281.5C443.6 283.3 447.9 289.8 450.1 294.0C452.3 298.3 456.8 309.0 457.9 311.5M603.3 364.0C601.5 366.4 593.3 376.8 591.0 380.7C588.7 384.6 588.7 388.9 587.3 391.5C585.9 394.1 581.8 397.9 580.9 399.0M601.2 328.9C602.2 329.3 604.9 329.4 608.4 331.4C611.9 333.3 623.3 341.0 625.8 342.6M440.0 352.1 434.2 360.3M500.1 375.9C497.5 375.5 486.5 373.0 482.1 373.0C477.7 373.0 471.1 375.5 469.3 376.0M561.0 210.9C562.0 212.0 564.7 215.2 567.8 218.3C570.9 221.4 578.3 228.8 582.5 232.6C586.7 236.4 595.2 243.2 597.3 245.0M463.7 311.8C466.2 313.4 477.3 320.1 481.2 323.2C485.1 326.3 489.6 332.2 491.0 333.7M533.1 349.9C531.4 350.1 525.2 349.9 521.4 351.0C517.6 352.1 510.9 356.1 506.3 357.8C501.7 359.5 491.7 361.9 489.3 362.6M398.0 198.9C397.6 201.7 395.9 214.0 395.5 218.2C395.1 222.4 395.1 227.0 395.0 228.5M480.8 338.7C481.5 339.5 482.8 342.3 485.9 344.3C489.0 346.2 500.1 351.2 502.4 352.4M598.7 341.9C599.3 343.9 601.7 353.0 603.0 355.9C604.2 358.7 604.6 359.1 607.2 362.2C609.8 365.3 619.3 375.3 621.3 377.5M651.0 427.9C652.1 430.1 657.6 439.6 659.1 443.2C660.6 446.8 661.1 451.8 661.4 453.3M539.0 256.8C537.2 256.5 530.5 254.7 526.8 254.6C523.1 254.4 515.1 255.5 513.2 255.6M684.8 354.5C686.2 356.6 692.3 366.3 694.7 369.6C697.1 372.8 700.6 376.1 701.6 377.2M537.2 411.0C536.3 412.5 531.9 418.8 530.8 421.7C529.7 424.5 529.6 429.6 529.4 430.9M539.0 353.6 532.0 355.3M556.7 352.0C556.5 354.7 555.3 366.8 555.2 371.1C555.1 375.5 556.2 380.0 556.1 382.7C556.0 385.5 554.6 389.2 554.3 390.3M684.8 205.2C682.4 206.1 672.6 209.7 668.3 211.5C663.9 213.3 656.3 216.9 654.3 217.7M443.2 304.4C442.7 305.5 441.1 309.8 439.6 311.9C438.1 313.9 433.9 317.7 432.9 318.7M533.4 355.2C530.7 356.4 518.9 361.9 514.8 363.2C510.6 364.4 505.7 363.9 504.2 364.0M467.6 209.1C465.6 209.2 456.5 209.2 453.5 209.7C450.6 210.2 450.4 210.4 447.1 212.6C443.7 214.8 432.3 223.4 429.9 225.2M440.9 274.6 422.1 281.9M463.7 350.6 468.3 356.6M478.8 362.9C479.1 364.0 480.3 366.4 480.8 370.4C481.2 374.4 481.6 388.1 481.7 391.0M439.6 322.2C438.9 323.0 435.9 325.9 434.3 327.5C432.8 329.2 430.1 332.0 428.5 333.7C426.9 335.3 423.7 338.2 422.9 339.0M534.6 267.2C534.6 270.2 534.1 283.3 534.7 288.5C535.3 293.7 538.4 301.4 539.0 303.6M580.8 292.4 589.6 303.8M461.1 300.2C458.3 301.2 446.3 306.0 441.3 307.5C436.2 309.0 427.9 310.3 425.7 310.7M325.0 349.9C325.9 351.2 329.1 355.2 331.4 358.8C333.7 362.5 339.7 373.2 341.1 375.6M667.3 294.0C667.1 295.3 666.6 300.8 665.6 303.3C664.6 305.8 661.1 310.4 660.3 311.6M712.2 427.7C713.5 427.7 718.5 428.2 721.5 428.0C724.4 427.9 729.9 427.5 732.9 426.6C736.0 425.7 741.6 422.6 743.0 421.9M479.0 466.2 477.4 479.0M382.6 312.7C382.5 314.2 381.8 321.0 381.8 323.5C381.8 326.1 382.6 329.5 382.7 330.5M478.8 217.9C477.5 219.9 472.6 227.8 469.4 232.1C466.2 236.3 458.3 245.3 456.5 247.5M525.1 360.0C526.5 360.8 532.8 364.3 535.4 365.6C537.9 366.9 539.8 367.1 543.1 369.1C546.4 371.1 556.3 378.1 558.5 379.7M517.0 391.7C517.0 393.8 518.0 401.6 517.1 406.5C516.3 411.3 511.8 421.2 511.1 425.7C510.4 430.1 512.0 435.9 512.2 437.5M411.2 270.7 397.8 280.4M588.3 333.9 588.2 342.0M460.1 225.0C462.1 226.6 470.1 234.0 474.0 236.6C477.9 239.2 485.4 242.4 487.3 243.4M454.1 292.6C451.7 292.2 442.4 290.6 437.3 290.0C432.2 289.5 421.1 288.7 418.4 288.5M560.6 287.0C561.0 288.0 562.6 290.4 563.4 294.3C564.1 298.3 565.8 310.5 566.0 314.7C566.2 319.0 565.0 322.5 564.8 323.8M531.4 314.1C530.0 314.8 524.2 317.4 521.8 318.9C519.4 320.5 515.7 323.9 514.7 324.7M485.9 348.5C483.6 348.8 474.9 349.1 469.9 350.9C464.9 352.7 453.4 359.5 450.7 360.9M522.2 353.9 517.9 367.5M518.2 358.0 516.6 367.2M437.3 313.9C436.8 315.8 434.8 323.9 433.9 326.8C432.9 329.7 431.3 330.9 430.9 334.4C430.5 337.8 431.0 348.5 431.0 350.9M426.6 154.7 434.2 167.2M664.8 338.2C664.2 339.3 662.4 343.2 660.6 345.5C658.8 347.8 653.6 353.2 652.4 354.5M431.4 279.1 439.1 285.3M425.4 202.2C423.2 202.6 414.2 204.4 409.5 205.1C404.7 205.8 396.9 205.9 392.1 206.9C387.3 208.0 378.2 211.8 375.9 212.6M553.0 283.5C555.1 285.3 564.8 294.4 568.0 296.6C571.1 298.8 574.1 298.7 575.1 299.1M414.7 200.8C416.2 201.3 421.6 202.3 425.7 204.6C429.8 206.8 440.8 214.9 443.4 216.6M391.3 399.7C389.9 400.5 385.7 403.5 381.5 405.4C377.2 407.3 364.1 411.9 361.2 413.0M465.7 219.6C464.5 220.7 459.6 224.9 457.2 227.1C454.9 229.3 452.6 232.6 449.5 234.9C446.5 237.1 437.9 241.7 435.9 242.9M690.5 350.3C689.0 350.8 684.1 352.7 679.9 353.7C675.7 354.6 663.8 356.3 661.1 356.8M536.6 368.4C535.7 370.2 533.1 376.9 530.5 380.8C527.9 384.7 521.2 392.5 518.5 395.7C515.8 399.0 512.4 402.4 511.4 403.5M800.2 360.9C798.4 362.2 791.4 366.9 787.6 370.4C783.8 374.0 776.2 382.7 773.4 385.8C770.6 388.9 768.8 391.3 768.0 392.2M478.0 287.9C476.9 288.9 472.2 292.7 470.6 294.7C469.0 296.7 467.4 301.0 466.9 302.1M589.3 252.7 569.4 253.8M649.6 477.3C648.3 476.9 644.8 474.6 640.5 474.3C636.2 473.9 622.4 474.7 619.4 474.8M726.8 342.2C727.8 342.8 730.9 343.6 733.6 346.2C736.2 348.7 741.8 356.6 745.3 360.2C748.8 363.9 756.4 369.9 758.2 371.5M519.2 277.6C520.3 279.1 524.7 285.0 527.0 287.8C529.3 290.7 534.0 296.2 535.2 297.6M689.1 231.8C690.1 234.3 693.3 244.9 696.1 249.5C698.9 254.1 707.0 262.1 708.8 264.2M489.7 220.2C491.2 220.8 497.2 223.5 499.9 224.4C502.7 225.2 507.8 226.0 509.1 226.2M487.8 352.2C487.9 354.2 488.3 362.7 488.4 366.0C488.6 369.3 488.7 374.0 488.7 375.3M522.0 368.2C523.9 370.4 531.3 379.9 535.1 383.8C539.0 387.7 543.9 392.8 548.8 395.4C553.6 398.1 566.4 401.3 569.3 402.2M488.8 347.7C490.2 347.6 494.3 348.1 498.6 347.2C502.8 346.4 515.6 342.5 518.5 341.7M509.4 308.9C510.3 311.9 513.7 325.1 515.4 329.6C517.1 334.1 519.9 336.2 521.1 340.6C522.4 344.9 523.7 357.0 524.1 359.8M601.1 240.5C598.3 240.4 586.0 239.9 581.1 239.7C576.1 239.5 568.7 239.0 566.7 238.9M498.1 309.4C495.9 310.3 486.7 313.9 482.9 315.3C479.2 316.7 473.4 318.5 471.8 319.0M732.3 333.9C731.6 334.6 729.4 336.6 727.0 338.8C724.5 341.0 716.9 347.7 715.3 349.1M670.1 404.2 663.3 413.0M369.7 396.7C367.5 398.3 357.2 405.6 354.1 407.8C350.9 410.0 348.5 411.6 347.6 412.2M320.0 208.3C319.8 209.5 319.3 212.3 319.0 216.5C318.7 220.7 317.8 234.4 317.6 237.4M675.6 202.9C675.7 204.4 676.8 209.8 676.5 213.5C676.3 217.1 674.1 226.3 673.7 228.4M587.6 254.6C590.4 254.8 601.7 255.6 607.1 256.1C612.5 256.6 619.8 256.9 625.4 257.8C631.1 258.8 643.6 262.2 646.7 263.0M394.7 368.7C396.5 370.2 403.2 376.0 407.0 379.4C410.7 382.8 419.2 390.5 421.3 392.3M503.7 251.4C505.3 253.2 512.4 259.6 514.9 263.8C517.4 268.0 519.3 276.9 521.1 280.9C522.9 285.0 526.4 290.5 527.3 292.0M550.2 237.2C550.2 238.4 550.9 242.6 550.6 245.5C550.3 248.3 548.3 255.4 548.0 257.0M457.9 240.2 461.0 246.9M500.2 226.3 499.2 239.4M450.7 236.7C452.4 237.7 459.8 241.1 462.9 244.1C466.0 247.0 470.2 254.0 472.6 257.3C474.9 260.6 478.5 265.8 479.5 267.3M445.0 282.6C443.0 283.4 436.1 286.6 431.3 288.0C426.6 289.5 414.3 292.0 411.5 292.6M449.2 264.2C448.5 266.4 444.8 276.3 444.2 279.6C443.5 282.9 444.1 283.8 444.8 287.5C445.4 291.2 448.2 303.0 448.7 305.6M449.6 306.8C452.5 307.1 463.8 308.7 469.8 309.3C475.7 310.0 488.0 310.8 491.1 311.0M422.1 261.5C420.4 261.3 414.8 260.3 410.4 260.3C406.0 260.3 393.9 261.2 391.2 261.4M323.9 277.9C322.7 279.2 318.1 284.6 315.6 287.2C313.0 289.8 307.3 294.7 305.9 296.0M403.7 296.9C405.0 299.0 410.2 306.5 413.0 311.3C415.9 316.1 421.8 325.9 423.5 330.6C425.2 335.3 424.8 342.2 425.0 344.1M367.8 278.5 385.0 279.6M413.7 171.7C415.4 171.7 422.6 172.1 425.4 171.8C428.2 171.5 432.3 170.0 433.4 169.7M397.7 328.5C397.7 330.4 398.4 337.1 397.6 341.5C396.7 345.9 392.6 356.7 391.8 359.2M451.9 274.7C454.7 273.9 466.3 270.5 471.5 268.9C476.7 267.3 485.8 264.3 488.2 263.5M453.7 254.7C454.6 255.6 457.8 258.7 460.1 261.4C462.3 264.1 468.1 271.8 469.4 273.6M382.2 318.8 386.0 331.6M392.9 226.9C392.8 230.0 393.0 242.1 392.4 248.1C391.8 254.1 389.2 265.8 388.7 268.7M459.3 192.5 465.7 208.4M476.4 183.8C476.3 184.9 475.4 187.6 475.4 191.4C475.5 195.2 476.5 207.8 476.6 210.5M498.9 235.8C499.3 238.8 500.5 252.4 501.6 257.0C502.8 261.6 506.2 266.4 507.0 268.0M444.8 231.5C445.0 233.8 446.8 243.7 446.5 247.8C446.3 252.0 443.7 259.0 443.3 260.8M449.9 314.2 451.8 323.4M363.4 251.4C364.0 252.2 365.9 254.2 367.7 257.1C369.5 259.9 375.0 269.4 376.2 271.4M351.4 222.2C348.5 222.8 336.1 225.4 331.2 226.5C326.3 227.5 320.4 228.6 317.1 229.5C313.9 230.4 309.7 232.4 308.4 232.9M453.1 310.9 454.0 320.0M470.7 233.1C472.4 233.9 479.7 237.0 482.4 238.7C485.0 240.5 486.4 243.5 489.4 245.4C492.4 247.3 501.2 251.1 503.1 252.0M421.5 268.1C421.8 270.6 423.1 281.1 423.6 285.6C424.1 290.1 424.7 297.4 424.8 299.4M411.1 149.8C410.0 152.0 405.3 161.9 403.6 165.3C402.0 168.7 401.6 170.7 399.7 173.4C397.7 176.1 391.4 182.8 390.0 184.4M501.2 322.1C503.0 323.3 509.4 328.7 513.9 330.9C518.4 333.1 530.1 336.7 532.8 337.7M371.3 312.2C370.7 313.3 369.7 317.2 367.3 320.1C364.8 323.0 355.9 330.6 354.0 332.3M207.2 57.7 215.2 64.0M247.6 62.1C249.2 62.5 254.7 64.5 258.3 65.1C261.9 65.7 270.7 66.2 272.7 66.4M248.6 98.0 247.9 110.5M275.7 23.2C276.2 25.6 278.3 34.9 279.3 39.9C280.4 44.9 282.7 55.6 283.2 58.2M250.9 82.3C249.2 83.1 243.3 86.7 239.0 87.8C234.6 88.8 225.2 88.3 220.5 89.4C215.7 90.5 207.9 94.4 205.8 95.2M213.2 94.3C210.7 93.7 201.2 90.9 195.9 90.0C190.7 89.1 180.5 88.8 176.4 88.0C172.4 87.2 168.9 84.7 167.6 84.1M255.6 21.1 249.1 28.5M244.3 93.3C242.8 94.4 236.3 98.5 233.9 101.1C231.4 103.7 228.7 108.0 227.3 111.3C226.0 114.6 225.0 122.3 224.6 124.2M216.3 98.2C214.6 100.7 206.5 112.2 204.3 115.6C202.1 119.0 201.5 121.3 201.0 122.2M222.9 96.4C222.6 97.7 221.2 102.7 220.4 105.4C219.6 108.1 217.8 113.7 217.4 115.1M209.5 57.8C210.1 58.9 210.9 62.0 213.8 65.2C216.6 68.3 225.4 76.5 229.4 80.1C233.5 83.7 240.4 89.0 242.2 90.5M262.2 114.4C260.2 115.2 252.6 118.0 248.3 119.8C244.0 121.5 234.4 125.8 232.1 126.8M254.7 138.2C252.9 139.0 246.1 141.3 242.2 144.2C238.3 147.1 230.7 154.1 227.4 158.5C224.2 162.8 220.6 172.3 219.5 174.6M213.8 73.3C215.9 74.4 223.4 79.0 228.6 80.9C233.7 82.8 244.5 85.6 249.8 86.3C255.0 87.1 263.1 86.0 265.3 86.0M217.6 19.9 225.1 38.7M198.1 109.8C196.6 111.1 191.9 115.8 187.9 118.7C183.9 121.6 172.7 128.4 170.2 130.1M281.7 126.1C282.8 126.8 287.0 130.2 289.3 131.4C291.5 132.5 296.1 133.8 297.2 134.2M211.6 62.2 221.4 77.2M252.6 69.7C250.7 70.8 242.9 75.4 239.7 77.2C236.6 79.0 231.9 81.5 230.6 82.2M235.2 57.1 244.0 61.8M263.3 54.8 271.6 69.4M276.1 23.4C277.0 25.4 281.0 34.0 282.2 37.3C283.3 40.5 283.7 45.0 284.0 46.3M219.9 43.6C219.4 46.0 218.5 55.4 216.6 60.7C214.8 66.0 208.5 77.6 207.2 80.4M278.7 88.3 291.6 90.3M459.3 13.4C461.5 15.3 470.7 22.9 474.5 26.3C478.3 29.6 481.5 34.3 486.0 37.2C490.5 40.0 503.3 44.7 506.2 45.9M404.5 45.8C406.0 46.2 410.6 47.5 414.7 48.6C418.9 49.6 430.8 52.5 433.5 53.1M422.6 27.5C423.4 28.5 425.9 32.7 428.0 34.6C430.0 36.4 434.4 38.5 436.8 40.7C439.3 42.9 443.9 48.6 445.0 49.9M405.5 36.1C406.4 38.5 410.6 48.1 411.8 52.4C412.9 56.7 412.3 62.0 413.6 66.4C414.9 70.9 419.9 80.9 421.0 83.3M414.7 66.3C416.9 68.4 426.3 77.7 429.7 80.8C433.0 83.9 436.8 87.0 437.9 88.0M460.5 25.9C461.6 27.2 465.4 31.7 468.6 34.7C471.7 37.7 480.3 45.2 482.2 47.0M356.8 34.1 350.2 39.8M407.9 7.5C405.0 7.7 392.5 8.5 387.6 8.8C382.6 9.1 375.3 9.5 373.2 9.6M419.7 40.8C419.0 43.7 415.3 55.8 414.7 61.2C414.1 66.6 415.4 76.3 415.5 78.8M466.7 19.0C469.4 18.9 480.5 17.6 485.6 18.0C490.8 18.3 500.5 20.8 503.0 21.2M354.2 49.4C354.5 50.5 354.4 54.0 356.0 57.1C357.5 60.2 363.8 68.9 365.2 70.9M607.7 504.0C608.9 505.2 612.8 510.0 615.8 512.4C618.8 514.8 626.7 519.5 628.5 520.7M539.0 470.5C539.0 471.8 539.2 476.8 538.7 479.2C538.1 481.6 537.9 483.9 535.4 487.4C532.8 490.9 522.8 501.4 520.7 503.7M592.6 489.3C590.0 490.6 578.1 496.1 574.3 498.2C570.6 500.3 568.8 502.4 566.3 504.1C563.7 505.8 557.9 509.4 556.5 510.3M609.9 429.4C611.1 429.7 614.4 430.3 618.1 431.5C621.8 432.7 631.3 436.9 635.8 437.7C640.4 438.5 647.8 437.3 649.7 437.2M649.3 487.0C650.2 487.6 652.8 489.7 656.0 491.5C659.2 493.4 669.7 498.7 672.0 499.9M605.4 459.9C604.9 461.5 602.9 468.2 602.4 471.0C601.9 473.8 601.8 477.1 601.9 479.6C602.0 482.1 602.9 487.5 603.1 488.8M609.5 416.5C608.6 417.3 604.9 420.0 603.3 421.7C601.7 423.4 598.9 427.5 598.2 428.5M617.5 484.5C619.8 484.5 629.5 484.1 633.4 484.7C637.2 485.3 640.1 488.2 644.4 488.8C648.7 489.3 660.5 488.5 663.2 488.4M630.6 491.6C633.1 492.3 643.2 494.8 648.4 496.9C653.6 498.9 664.6 504.4 667.3 505.7M604.8 459.1 590.5 461.3M594.5 426.2C596.3 427.8 604.9 434.7 607.5 437.3C610.1 440.0 611.0 440.8 612.6 444.8C614.1 448.7 617.5 462.1 618.4 465.0M637.7 403.3C637.0 404.9 634.6 410.6 632.7 415.1C630.8 419.5 626.8 429.3 624.4 434.4C622.0 439.5 617.2 448.3 616.0 450.6M591.9 448.3C589.5 449.3 578.9 453.9 575.1 455.4C571.3 457.0 566.5 458.4 565.1 458.9M639.6 426.1 626.7 425.9M595.1 476.7 590.1 488.0M597.5 472.5C598.7 473.9 603.4 480.2 605.8 482.6C608.2 485.0 611.1 486.9 614.3 489.1C617.5 491.3 626.2 496.5 628.2 497.7M502.1 458.2C501.0 460.8 495.5 472.0 494.4 476.5C493.3 480.9 494.4 487.5 494.4 489.4M625.9 474.0C625.0 476.4 622.2 485.8 619.8 490.9C617.3 496.0 610.3 507.0 608.7 509.7M591.2 441.7C590.1 443.9 585.7 452.6 583.7 457.0C581.7 461.3 578.1 469.8 577.1 472.0M506.0 405.0C505.3 406.5 503.3 412.5 501.2 415.3C499.1 418.1 492.9 423.1 491.5 424.4M622.3 408.5C623.6 410.6 629.5 420.0 631.4 423.3C633.4 426.6 635.3 430.4 635.9 431.6M597.0 468.7C598.8 470.7 605.8 479.0 609.6 482.4C613.5 485.9 619.2 489.6 623.6 492.8C628.0 496.0 637.8 503.0 640.2 504.7M601.4 119.2C599.9 120.2 594.0 124.8 590.8 126.5C587.6 128.2 580.4 130.3 578.7 131.0M593.1 120.4C591.3 122.5 583.3 130.2 580.1 135.0C576.9 139.7 573.0 149.9 570.8 153.7C568.6 157.5 565.9 160.4 565.0 161.5M687.0 162.0C685.4 162.9 678.9 167.0 675.6 168.2C672.3 169.5 665.5 170.3 663.8 170.7M697.5 182.8C698.0 183.9 700.0 188.9 701.0 191.1C702.0 193.3 704.1 197.2 704.6 198.2M674.3 117.1C676.8 118.7 686.8 125.0 691.4 128.4C695.9 131.8 704.0 139.1 706.1 140.9M699.4 178.1C697.5 179.8 689.7 186.5 686.0 189.7C682.3 192.8 675.5 198.6 673.8 200.1M675.7 111.6C677.7 111.7 684.4 111.5 689.4 111.8C694.5 112.1 707.9 113.4 711.0 113.7M705.7 146.8C705.7 148.2 705.4 153.9 705.7 157.1C705.9 160.3 706.3 165.3 707.3 169.1C708.3 172.9 712.0 181.6 712.7 183.7M676.5 202.7 669.8 210.6M652.6 171.7C650.1 171.9 639.2 172.7 634.8 173.0C630.4 173.3 623.7 173.7 621.8 173.9M686.4 166.7C685.5 167.8 681.6 172.2 680.3 174.4C678.9 176.7 677.5 178.7 676.9 182.4C676.3 186.2 675.9 198.2 675.8 200.8M708.8 173.3C706.6 175.2 696.6 183.2 693.4 186.9C690.3 190.5 687.8 195.9 686.5 198.8C685.2 201.7 684.7 206.0 684.4 207.1M536.8 157.2C534.8 157.2 525.9 157.0 522.7 157.5C519.5 157.9 515.4 160.0 514.2 160.4M676.2 99.1C675.0 99.6 670.3 101.0 667.5 102.7C664.8 104.5 659.6 109.4 657.0 111.3C654.4 113.1 650.5 114.8 649.4 115.4M729.2 149.1 716.6 155.1M639.5 128.1C640.8 130.0 646.5 136.7 648.4 140.9C650.4 145.1 651.9 152.6 653.1 157.6C654.4 162.5 656.5 173.0 657.1 175.6M617.8 138.4C617.1 139.2 615.1 140.8 613.3 143.9C611.5 147.0 606.4 157.9 605.3 160.2M639.1 117.1C637.0 118.8 626.9 126.3 624.1 128.8C621.2 131.3 619.8 133.8 619.1 134.6M668.3 189.3C667.0 190.0 661.1 193.5 658.7 194.5C656.3 195.6 654.0 196.4 651.7 196.6C649.5 196.8 644.4 195.9 643.2 195.8M687.3 102.2 671.3 109.5M641.0 118.7 649.5 132.5M643.8 177.2C644.2 179.8 645.7 191.8 646.6 195.5C647.6 199.2 649.7 201.7 650.3 202.8M717.3 158.5C716.0 161.0 710.1 170.7 708.2 176.0C706.2 181.3 704.4 192.9 703.7 195.7M725.1 86.3C725.9 89.1 729.0 101.2 731.1 105.8C733.2 110.3 738.6 116.2 739.8 118.0M675.1 314.2 688.8 330.8M667.7 249.8C664.8 250.4 652.7 252.9 647.1 253.6C641.5 254.3 633.5 254.1 628.5 255.0C623.6 255.9 614.8 259.2 612.6 259.9M673.3 238.4C672.5 239.7 669.0 245.3 667.5 247.4C665.9 249.5 664.0 250.9 662.5 252.9C661.1 255.0 658.0 260.4 657.3 261.6M703.2 280.0C703.8 282.1 706.0 290.4 707.2 294.8C708.3 299.2 710.7 308.7 711.3 311.0M735.4 263.4C733.9 264.0 728.5 266.1 724.7 267.7C721.0 269.4 711.2 273.9 709.0 275.0M773.8 314.5C774.1 315.5 775.4 319.2 775.5 321.7C775.7 324.3 775.1 330.6 775.0 332.1M696.0 286.5 695.2 299.3M703.3 213.2C706.1 214.0 717.1 218.1 722.7 219.3C728.2 220.4 739.5 220.9 742.4 221.2M696.6 281.4C699.4 281.7 712.2 283.1 716.0 283.4C719.9 283.7 721.2 283.7 723.5 283.8C725.8 283.9 731.0 283.9 732.2 284.0M669.2 285.1 674.6 291.2M724.2 289.0C721.9 290.3 712.8 296.0 708.1 298.5C703.3 301.0 694.2 304.6 690.7 306.4C687.2 308.3 684.7 310.6 683.7 311.2M689.8 247.8C688.4 249.2 682.6 255.1 680.0 257.2C677.4 259.3 672.8 261.7 671.6 262.4M642.0 317.1C640.8 319.1 635.7 326.5 633.7 331.1C631.7 335.8 628.8 347.1 628.0 349.8M669.4 283.4C668.4 283.8 665.3 285.4 662.5 286.2C659.6 287.0 651.4 288.6 649.6 289.0M700.7 257.5C699.0 259.0 691.8 265.3 688.4 268.0C685.1 270.6 679.1 275.2 677.5 276.4M723.3 310.3C723.4 311.8 723.6 318.1 724.3 321.0C725.0 323.9 727.5 326.7 728.1 330.7C728.6 334.6 728.1 346.2 728.1 348.8M732.4 294.8 719.8 311.0M706.9 291.6C709.4 292.9 719.8 298.3 724.4 300.7C729.1 303.1 736.0 307.0 739.3 308.5C742.6 310.0 746.5 310.6 747.7 310.9M635.4 252.0C633.5 252.5 625.6 254.3 622.3 255.3C619.0 256.3 613.6 258.4 612.1 258.9M663.3 233.7C665.0 234.1 670.8 234.5 675.0 236.6C679.3 238.6 688.8 245.3 693.2 247.7C697.7 250.1 704.2 252.5 706.1 253.3M605.0 351.2C604.4 352.3 603.2 355.4 601.2 359.0C599.2 362.6 592.3 373.9 590.8 376.4M338.8 406.4C339.3 408.0 342.0 414.6 342.6 417.9C343.3 421.2 343.4 427.9 343.5 429.6M350.9 335.6 353.5 356.9M325.1 414.6 320.8 423.5M484.0 432.8C485.6 433.5 492.6 436.0 495.2 437.6C497.8 439.3 501.3 443.4 502.4 444.3M407.5 386.7C406.3 387.7 402.0 391.3 399.4 393.5C396.7 395.7 391.7 398.4 388.9 401.8C386.1 405.2 381.2 415.0 379.9 417.2M377.7 388.2C377.4 390.1 375.5 397.9 375.5 401.6C375.5 405.3 377.3 412.5 377.6 414.3M413.3 408.4C411.5 409.6 404.1 414.8 400.7 416.5C397.3 418.2 391.1 419.6 389.5 420.1M357.4 414.4C358.5 416.7 362.8 425.4 365.3 430.2C367.8 435.0 372.0 444.0 375.0 448.1C378.0 452.1 384.6 456.9 386.3 458.4M441.3 374.4C442.1 377.4 445.8 390.5 447.1 395.0C448.4 399.5 449.9 404.3 450.4 405.8M379.9 377.0C380.7 378.0 383.3 381.6 385.5 383.5C387.7 385.5 392.5 389.0 395.1 390.9C397.7 392.9 402.6 396.4 403.8 397.3M411.0 398.0C411.4 400.3 412.5 408.7 413.8 413.9C415.1 419.0 419.3 431.3 420.3 434.2M397.8 364.7C395.8 366.8 388.0 375.2 383.4 378.9C378.9 382.6 368.4 388.9 365.9 390.5M339.1 461.2C338.1 463.2 334.9 471.6 332.5 475.4C330.1 479.1 323.7 485.7 322.3 487.5M340.7 402.2C339.4 402.8 334.8 406.0 331.7 406.9C328.7 407.8 321.2 408.1 319.4 408.4M444.8 460.6C445.8 460.5 448.1 460.8 452.0 459.3C455.9 457.8 467.6 452.0 471.9 450.0C476.2 447.9 480.8 445.9 482.2 445.3M439.1 440.3 433.0 448.6M346.2 413.9C345.5 415.2 343.2 420.1 341.4 422.7C339.6 425.3 335.9 429.6 333.8 431.9C331.8 434.3 328.3 438.2 327.4 439.3M371.1 378.6C369.7 378.3 364.9 377.9 361.5 376.8C358.1 375.6 349.5 371.7 347.5 370.8M323.4 467.3 335.6 483.8M360.9 461.5C362.2 462.2 367.0 463.4 370.3 466.2C373.5 469.0 381.6 479.1 383.5 481.3M382.1 519.3C381.2 520.6 377.6 524.4 376.1 528.6C374.7 532.9 372.4 546.1 371.8 549.1M358.6 514.9C359.4 516.3 362.6 522.4 364.6 524.7C366.6 527.0 370.2 529.6 372.6 531.2C374.9 532.9 379.9 535.6 381.1 536.3M296.8 495.4C296.2 497.6 294.0 506.6 292.3 511.0C290.5 515.3 286.2 522.9 284.5 525.9C282.7 528.8 280.9 530.7 280.3 531.5M345.4 534.0C347.8 534.1 357.9 534.7 362.0 534.7C366.1 534.7 372.3 534.2 374.0 534.2M347.1 546.6 332.9 562.4M419.4 534.4C419.6 535.5 420.1 538.3 421.0 541.9C421.9 545.4 425.1 556.7 425.8 559.2M346.4 479.8C347.5 479.8 351.7 480.4 353.9 480.1C356.2 479.7 361.1 477.5 362.3 477.1M318.1 537.5 336.4 541.6M389.5 500.8C391.9 501.0 402.7 502.3 406.3 502.2C410.0 502.0 413.9 500.0 415.2 499.6M311.2 494.4C310.7 496.8 309.4 506.5 307.8 511.4C306.2 516.3 301.1 526.2 300.0 528.7M414.6 499.9C414.8 502.1 416.2 511.4 415.9 515.4C415.6 519.4 412.8 526.2 412.3 528.0M395.6 480.1C395.9 481.5 397.1 487.0 397.4 489.8C397.7 492.6 396.9 496.4 397.9 499.9C399.0 503.5 403.9 512.5 404.9 514.6M328.8 536.2C328.2 537.4 325.8 541.4 324.6 544.5C323.4 547.7 321.0 556.3 320.4 558.2M422.0 532.5C421.2 534.2 417.4 540.9 415.9 544.4C414.5 547.9 412.5 555.2 411.9 557.0M278.6 129.0C277.8 129.9 275.0 132.2 273.0 135.3C271.0 138.5 265.8 148.8 264.6 151.1M277.0 171.7C274.3 171.9 263.5 172.6 258.5 173.5C253.6 174.4 246.9 176.4 242.4 178.0C238.0 179.7 229.4 183.9 227.2 184.8M257.4 88.4C260.2 88.3 271.7 87.5 276.6 88.0C281.6 88.6 289.8 91.8 292.0 92.4M297.9 97.9C300.6 98.8 312.8 102.7 316.9 104.6C320.9 106.5 323.5 108.3 326.2 111.2C328.8 114.0 333.9 122.6 335.2 124.5M284.1 112.1C282.9 113.3 278.8 117.2 275.5 120.5C272.2 123.9 263.0 133.4 260.9 135.5M281.9 203.2C283.8 205.6 291.9 215.9 295.1 220.2C298.4 224.6 303.5 231.6 304.9 233.5M269.2 152.0C266.7 152.1 256.0 152.9 252.0 153.2C248.1 153.6 243.1 154.2 241.6 154.3M274.6 157.3 288.0 174.4M246.5 179.7C244.5 179.4 235.7 178.6 232.4 177.6C229.2 176.6 225.0 173.4 223.8 172.7M269.9 200.1C268.6 201.4 263.6 205.8 261.3 208.9C259.0 212.0 256.7 218.7 253.9 221.9C251.0 225.1 243.3 230.1 241.5 231.5M285.3 165.0C287.7 165.7 296.3 169.4 301.7 169.9C307.2 170.3 320.4 168.2 323.5 167.9M549.8 109.9 547.2 119.0M543.7 80.4 536.6 92.2M508.1 112.1C510.1 113.1 519.2 117.4 522.1 119.0C525.0 120.7 527.4 122.9 528.3 123.6M742.6 327.8 749.2 333.6M719.4 348.2C721.1 350.7 729.0 360.9 731.8 366.2C734.7 371.5 738.3 382.7 739.4 385.4M641.5 320.5C640.8 322.5 637.8 330.0 637.0 334.4C636.2 338.8 636.2 348.9 636.0 351.3M708.9 351.4C709.3 353.1 710.7 358.8 711.7 363.5C712.7 368.3 715.4 381.5 716.0 384.5M685.1 368.2 696.1 374.9M710.9 335.7C712.0 337.9 716.4 348.0 718.6 351.1C720.7 354.3 724.9 356.7 725.9 357.6M541.6 495.8C540.2 496.8 535.3 500.7 532.1 503.1C528.8 505.6 520.7 511.6 518.8 513.0M497.1 535.2C496.1 538.1 491.4 551.1 490.3 555.9C489.2 560.7 490.0 564.5 489.1 568.5C488.1 572.6 484.6 581.9 483.9 584.1M474.2 487.6 454.4 496.5M456.9 548.2C458.5 549.0 464.1 552.2 467.6 554.4C471.1 556.5 477.7 561.6 481.2 563.2C484.7 564.9 490.6 565.6 492.1 566.0M534.8 483.2C537.2 483.1 547.5 483.2 551.7 482.7C556.0 482.1 562.6 479.9 564.4 479.5M439.2 515.5 443.5 521.6M487.2 450.2C487.2 452.9 486.6 465.3 486.8 469.2C487.0 473.0 488.4 474.4 488.7 476.9C488.9 479.5 488.6 485.3 488.5 486.7M507.0 527.3C508.6 529.1 515.4 537.2 518.5 539.9C521.7 542.5 527.3 544.9 528.7 545.8M461.5 499.8 478.0 503.1M603.2 514.9C601.7 514.6 595.2 513.7 592.4 512.8C589.6 511.9 585.0 509.2 583.7 508.6M526.2 503.5 522.1 510.1M491.6 552.1C494.6 552.8 507.1 556.2 512.9 557.0C518.6 557.9 529.1 557.9 531.8 558.0M445.1 455.1C445.3 456.9 447.1 463.2 446.7 467.7C446.3 472.2 443.0 482.4 442.4 486.6C441.7 490.8 442.0 495.4 441.9 496.9M490.7 496.8 498.4 503.7M479.7 528.8 476.2 544.8M441.7 495.4C442.9 496.7 447.6 502.7 449.6 504.8C451.7 506.9 455.2 509.4 456.1 510.2M473.3 501.8C472.5 503.2 469.5 507.9 467.8 512.1C466.0 516.3 462.1 528.4 461.2 531.1M544.9 531.8C545.0 534.3 544.9 544.5 546.0 549.3C547.1 554.0 551.6 562.8 552.5 565.1M470.8 513.5C469.8 514.6 466.4 518.4 464.2 520.8C462.0 523.3 457.2 528.0 455.3 530.6C453.4 533.1 451.4 537.5 450.8 538.6M99.4 230.2C99.0 231.9 97.5 239.6 96.7 242.5C96.0 245.3 94.5 249.0 94.2 250.0M120.0 274.0 114.4 279.5M117.5 239.2C118.5 239.9 122.9 242.7 124.9 243.7C126.9 244.8 129.5 245.5 131.5 246.5C133.5 247.6 137.7 250.5 138.8 251.1M119.1 247.5C120.8 248.4 127.5 252.0 130.9 253.4C134.4 254.8 140.5 256.1 143.2 257.3C145.9 258.6 148.6 261.6 149.5 262.3M153.6 232.2 145.4 233.2M106.1 247.4C105.0 250.1 100.2 261.9 98.9 265.7C97.6 269.6 97.2 273.2 96.9 274.5M86.7 278.0C87.5 278.8 90.7 281.8 92.5 283.1C94.3 284.4 98.1 286.6 99.0 287.2M96.4 234.2 118.1 237.0M135.8 228.5C135.6 231.4 134.9 243.9 134.6 248.9C134.3 253.8 133.5 258.9 133.9 262.8C134.3 266.7 137.0 274.1 137.5 276.0M89.8 259.4C89.6 261.2 88.0 268.8 88.0 272.2C88.0 275.6 89.4 280.6 89.9 283.2C90.4 285.9 91.3 289.6 91.5 290.7M108.7 237.1 116.2 237.2M41.7 504.0 26.4 505.9M25.4 453.2 33.8 451.8M63.9 460.5C60.9 459.6 47.3 455.9 43.0 454.1C38.6 452.4 35.0 449.3 33.7 448.5M39.2 526.4C40.3 527.3 44.4 530.5 46.4 532.8C48.3 535.0 51.3 539.7 52.9 542.3C54.5 544.9 56.8 549.7 57.5 550.9M3.8 460.2C5.9 462.4 14.3 471.3 18.6 475.8C22.9 480.2 31.9 489.0 34.1 491.2M29.2 509.0C26.7 510.3 15.3 516.1 11.9 518.4C8.4 520.7 6.0 524.1 5.0 525.0M49.5 508.8C50.7 509.3 54.3 509.8 58.1 512.1C61.8 514.3 73.3 522.7 75.8 524.5M20.8 568.3 33.9 583.8" fill="none" stroke="#c9c9c9" stroke-width="0.9"/>
<path d="M635.0 281.2C635.0 282.3 634.7 286.3 635.3 288.9C635.8 291.6 638.3 298.2 638.9 299.7M454.2 441.8C455.7 442.8 462.0 447.7 464.5 449.0C467.1 450.3 471.1 450.7 472.2 451.0M474.5 241.2C475.8 242.5 481.3 247.6 483.3 250.0C485.3 252.4 486.9 256.2 488.4 258.2C490.0 260.3 493.1 263.5 493.9 264.4M459.9 419.5C459.9 420.6 460.3 424.8 460.1 427.5C460.0 430.2 459.3 435.8 458.7 438.5C458.1 441.1 456.6 445.0 456.2 446.0M390.2 259.7C391.1 262.4 394.1 273.5 396.1 279.1C398.1 284.6 402.4 293.6 404.5 298.5C406.6 303.3 410.1 311.1 411.0 313.3M480.7 432.4C481.2 433.5 483.1 436.8 483.7 440.1C484.2 443.4 485.0 450.5 484.5 455.3C484.0 460.2 480.6 471.4 480.0 474.1M439.8 348.9C438.8 349.7 434.4 352.4 432.3 354.3C430.2 356.2 426.3 360.9 425.3 362.1M510.3 230.3C508.6 231.2 502.2 234.5 498.8 236.4C495.5 238.4 489.9 242.8 486.8 244.1C483.8 245.5 478.5 245.6 477.2 245.9M616.2 377.7C617.9 379.1 624.1 385.1 627.9 387.2C631.8 389.3 641.0 391.8 643.2 392.6M421.0 387.7C419.2 388.5 412.1 392.8 408.2 393.8C404.4 394.8 396.0 394.6 394.0 394.7M423.1 400.6C420.0 400.6 407.0 399.8 401.4 400.2C395.9 400.5 386.7 402.7 384.2 403.1M598.3 424.8C597.9 427.1 596.7 436.3 595.2 441.1C593.7 445.9 588.9 455.9 587.8 458.4M523.4 388.7C521.8 390.1 514.5 396.2 512.4 398.6C510.4 401.0 509.6 404.3 509.1 405.3M508.6 428.0C505.9 427.9 493.8 428.0 489.5 427.2C485.2 426.4 481.1 423.0 478.3 422.2C475.5 421.3 471.3 421.5 470.1 421.3M610.9 299.7 620.6 314.7M636.9 445.3C634.9 446.5 626.9 452.0 623.0 453.5C619.0 455.0 611.1 455.7 609.1 456.0M498.1 308.3 483.8 312.5M534.0 290.0C532.0 291.3 523.7 297.2 519.7 299.1C515.6 301.0 510.0 301.3 505.6 303.5C501.2 305.8 491.3 313.3 489.0 314.9M324.5 302.9 314.2 318.4M445.4 310.2C444.3 313.0 439.2 325.4 437.5 329.5C435.9 333.7 434.6 337.6 434.2 339.0M541.5 428.8C539.8 429.3 533.1 431.4 529.8 431.9C526.4 432.5 520.8 432.7 518.0 432.9C515.3 433.1 511.8 433.2 510.8 433.2M601.7 320.6 595.9 327.1M414.0 115.9C415.1 117.4 419.6 124.3 421.6 126.5C423.5 128.7 426.9 130.6 427.7 131.3M643.3 294.6 638.7 307.7M496.8 504.0C495.4 503.5 489.7 501.7 486.6 501.0C483.5 500.2 476.8 499.3 475.1 499.0M437.7 370.6C437.3 372.1 436.1 378.5 435.2 381.1C434.3 383.6 431.9 387.4 431.3 388.5M442.6 370.5 458.3 375.4M516.5 342.5C517.3 343.7 521.0 347.9 522.5 351.0C524.1 354.1 526.5 362.3 527.2 364.1M583.1 280.1C584.3 279.9 588.5 279.0 591.2 279.0C593.9 278.9 600.5 279.5 602.0 279.6M493.4 394.9C492.6 396.4 489.2 401.8 487.8 405.1C486.3 408.5 483.7 416.5 483.1 418.4M495.8 314.5C498.2 314.3 508.0 313.8 513.0 313.4C518.0 312.9 526.5 312.1 530.7 311.0C534.9 309.9 540.5 306.4 542.2 305.7M478.0 373.8C478.0 376.3 477.8 387.4 478.0 391.5C478.2 395.7 479.0 401.2 479.1 402.8M643.7 312.2C644.1 314.8 645.3 326.4 646.5 330.4C647.7 334.3 650.3 336.5 652.0 340.1C653.8 343.7 657.7 353.5 658.7 355.7M617.0 298.5C618.6 300.6 626.2 310.4 628.2 313.6C630.2 316.7 630.8 319.4 631.3 320.3M602.8 245.9 608.0 251.6M519.3 205.2 531.5 221.8M450.5 344.1C452.1 345.2 458.3 349.0 461.4 351.4C464.4 353.8 470.5 359.6 472.0 360.9M493.6 289.8C493.7 292.0 494.4 301.2 494.2 305.0C494.0 308.9 492.8 313.3 492.1 316.8C491.5 320.4 489.7 328.1 489.3 330.0M572.2 398.1C572.9 399.4 575.8 403.4 577.5 407.5C579.1 411.7 582.8 424.1 583.7 426.9M351.9 288.8 343.3 295.7M646.6 288.4C647.2 290.8 649.7 301.9 650.5 305.4C651.2 309.0 651.2 310.0 652.1 313.3C653.0 316.6 656.0 326.3 656.6 328.4M505.9 306.5C507.0 307.7 510.3 311.9 513.7 314.6C517.1 317.3 525.9 322.7 529.9 325.5C534.0 328.4 540.2 333.1 541.9 334.3M577.7 288.6C580.3 288.6 591.3 289.3 595.5 288.6C599.8 287.9 605.7 284.3 607.5 283.6M498.7 346.8C500.4 346.8 506.0 346.2 510.7 346.8C515.3 347.4 528.4 350.3 531.3 350.9M469.5 250.2C470.8 251.6 476.1 258.4 478.4 260.5C480.7 262.6 484.5 264.0 485.5 264.6M608.5 249.4C607.0 250.3 601.6 253.0 597.7 255.3C593.8 257.7 584.5 263.5 581.3 265.5C578.0 267.6 575.7 269.1 574.8 269.7M571.4 289.2C571.9 290.1 573.7 292.2 575.0 295.8C576.3 299.3 578.9 310.7 580.4 314.2C581.8 317.6 584.4 319.3 585.0 320.2M437.0 154.8 442.6 159.6M744.0 263.1C744.3 266.0 745.8 279.5 746.2 283.7C746.6 287.9 747.0 291.3 747.2 292.6M572.4 336.7C570.9 337.8 565.1 342.4 562.0 344.7C558.9 347.0 552.1 351.8 550.4 353.0M600.0 282.3C597.7 282.7 588.5 283.6 584.3 285.5C580.0 287.3 574.4 292.6 570.2 295.0C566.1 297.3 557.3 300.9 555.1 301.8M557.5 326.4C558.9 328.3 565.5 336.5 567.6 339.6C569.7 342.6 571.5 346.7 572.2 347.9M462.1 323.9C464.3 324.7 474.3 328.5 477.6 329.9C480.8 331.3 483.9 333.2 485.0 333.7M611.9 381.4C611.9 383.8 611.7 394.2 611.9 398.1C612.0 402.0 612.6 407.3 612.8 408.8M457.4 311.9C459.4 311.9 467.1 311.0 471.4 311.5C475.6 312.0 482.5 313.3 487.2 315.1C492.0 316.9 502.2 322.7 504.6 324.0M656.0 373.3C655.2 374.0 653.1 376.1 650.3 377.9C647.5 379.8 638.3 384.9 636.2 386.0M515.8 379.3C515.4 380.6 513.4 383.7 512.6 387.9C511.8 392.1 510.6 404.1 510.0 408.6C509.4 413.1 508.8 417.9 508.6 419.4M575.6 323.9C577.3 325.7 585.0 333.5 587.3 336.5C589.7 339.5 591.4 343.6 592.1 344.8M384.4 292.5C385.2 294.6 387.4 302.5 390.0 306.8C392.7 311.1 399.4 317.5 403.0 322.4C406.5 327.2 413.4 338.0 415.1 340.6M438.4 348.3C439.9 348.7 446.0 350.8 448.5 351.1C450.9 351.4 453.1 351.1 455.7 350.2C458.4 349.3 465.3 345.7 466.9 344.9M489.5 233.8C492.1 235.0 503.4 240.5 507.8 242.1C512.2 243.7 518.7 244.7 520.5 245.1M442.1 236.8C443.1 238.9 446.8 247.6 449.2 251.2C451.5 254.8 456.5 260.0 458.7 262.0C461.0 264.0 464.0 264.9 464.9 265.3M514.7 304.7C513.6 305.2 509.5 307.3 507.0 307.7C504.5 308.0 500.3 307.6 497.4 307.3C494.5 307.1 488.1 306.0 486.6 305.7M540.1 240.5C540.2 241.8 541.2 247.1 541.1 249.6C541.0 252.1 539.4 256.8 539.1 258.0M531.4 327.1 548.0 332.6M399.0 208.4C398.8 210.4 398.2 217.9 397.3 222.5C396.4 227.1 393.5 238.2 392.9 240.8M575.3 226.4C576.1 227.1 578.8 227.9 580.9 230.8C583.0 233.7 588.3 243.6 590.1 246.7C591.9 249.9 593.2 251.9 593.7 252.8M583.9 353.7C586.5 355.1 597.7 360.9 601.8 363.4C606.0 365.9 609.6 369.2 612.7 371.1C615.9 373.0 622.4 375.8 624.1 376.6M639.6 333.9C638.9 336.3 636.1 346.6 635.2 350.3C634.3 353.9 634.2 355.7 633.2 359.6C632.2 363.5 628.8 374.9 628.1 377.5M554.8 293.6C555.5 294.7 557.5 297.9 559.7 301.6C562.0 305.3 569.0 317.1 570.6 319.7M321.7 410.4C322.9 411.8 328.4 417.6 330.0 420.2C331.6 422.8 332.3 427.4 332.7 428.6M466.0 345.5 482.6 354.9M525.5 204.6C523.9 205.3 517.2 208.0 514.2 209.5C511.3 211.0 507.3 213.3 504.6 214.9C502.0 216.5 496.8 219.9 495.5 220.7M668.9 315.0C670.7 316.7 678.2 323.2 681.4 326.4C684.5 329.5 689.5 335.5 690.9 337.0M388.1 281.0C389.5 283.0 395.0 291.1 398.1 295.2C401.1 299.3 405.9 305.1 409.2 309.5C412.5 313.9 419.3 323.6 420.9 326.0M583.2 280.9C583.7 283.0 586.3 292.0 586.8 295.8C587.2 299.5 586.5 305.6 586.4 307.2M441.4 311.6C440.8 313.9 437.9 323.8 437.2 327.9C436.4 331.9 436.1 338.1 435.9 339.8M401.6 258.0 391.1 265.7M361.5 346.3C364.3 347.0 377.1 349.9 380.9 351.3C384.6 352.8 386.9 355.5 387.9 356.1M331.6 234.6 327.5 253.5M484.6 241.0C486.5 242.3 493.6 248.0 497.7 250.1C501.9 252.2 508.9 253.8 513.7 255.5C518.4 257.3 528.5 261.3 531.0 262.2M318.1 340.7C317.5 341.6 315.9 345.1 314.4 346.8C312.9 348.4 309.5 350.9 307.4 352.1C305.2 353.3 300.7 354.6 299.6 355.0M667.5 326.3C669.9 328.1 679.9 335.3 684.0 339.0C688.2 342.7 694.8 350.3 696.6 352.2M521.6 250.6C520.6 252.4 516.9 260.0 514.7 262.7C512.5 265.3 508.6 266.2 506.2 269.4C503.8 272.6 498.8 282.7 497.6 284.9M423.3 480.2C422.3 482.4 418.0 491.0 416.1 495.8C414.3 500.6 412.0 509.0 410.1 513.8C408.3 518.5 404.2 526.8 403.3 529.0M453.1 402.0C450.9 402.5 441.6 405.3 437.5 405.6C433.3 405.9 426.0 404.6 424.1 404.4M494.1 338.9C493.6 340.3 491.5 344.0 490.5 348.3C489.5 352.6 488.4 363.8 487.2 369.0C486.1 374.2 483.2 382.2 482.5 384.4M603.6 252.8C604.1 254.1 606.0 259.4 606.7 262.1C607.4 264.8 608.0 270.3 608.2 271.7M428.4 283.0C427.8 284.4 426.2 289.9 424.3 292.9C422.4 295.9 416.5 302.5 415.2 304.1M478.8 320.1 485.3 330.3M505.8 281.7C506.3 284.0 508.0 293.3 509.2 297.9C510.4 302.6 513.4 311.9 514.1 314.2M406.6 402.2 391.9 417.1M743.6 404.4C744.5 406.2 748.1 414.3 749.8 417.1C751.5 419.9 754.7 423.2 755.6 424.2M567.6 146.9C567.2 148.1 565.8 151.0 564.3 155.1C562.8 159.1 558.2 172.5 557.1 175.4M555.7 349.1C555.0 350.3 552.2 355.5 550.8 357.7C549.5 359.9 546.8 363.6 546.1 364.6M507.4 363.4C507.1 365.6 506.1 375.7 505.5 379.0C504.9 382.3 503.5 385.5 503.2 386.6M511.3 288.1C509.9 288.8 504.9 290.4 501.4 293.3C497.9 296.2 488.9 306.5 486.8 308.7M521.1 273.0C520.2 274.0 516.1 277.4 514.2 279.9C512.3 282.5 508.9 289.3 508.0 290.8M520.3 276.9C522.4 277.2 531.7 278.6 535.2 279.3C538.8 280.1 543.8 282.0 545.2 282.4M332.9 423.4C335.4 423.7 345.5 425.9 350.2 425.7C354.9 425.5 361.0 424.3 365.8 422.0C370.6 419.7 381.1 411.7 383.6 409.9M582.9 290.2 585.6 302.4M414.2 349.3C416.1 349.3 422.5 349.3 427.5 349.1C432.5 348.9 446.3 348.1 449.4 347.9M770.7 287.9C773.6 288.6 786.0 290.8 791.0 292.6C796.0 294.3 803.5 299.0 805.6 300.0M556.1 335.6C559.1 335.2 572.5 333.3 577.2 332.9C581.8 332.5 587.1 332.8 588.7 332.8M392.5 266.6C394.0 267.8 399.9 272.6 403.4 275.2C406.8 277.9 414.4 283.6 416.3 285.0M520.3 366.0C520.4 369.1 520.2 381.6 521.2 387.5C522.3 393.5 525.4 401.8 527.7 407.4C529.9 413.0 535.7 423.8 537.0 426.5M492.6 465.7 509.7 473.1M510.2 186.5C511.0 188.2 513.9 195.1 515.3 198.6C516.7 202.1 519.2 209.2 519.9 211.0M277.9 454.7C280.4 456.2 291.0 462.9 295.0 465.3C299.0 467.7 304.5 470.7 306.0 471.6M401.0 301.1C402.1 302.9 406.4 309.8 409.0 313.5C411.7 317.2 417.2 323.7 419.7 327.1C422.2 330.5 425.6 335.9 426.5 337.4M536.9 242.2C536.9 244.4 537.3 253.6 536.8 257.1C536.4 260.6 534.1 265.3 533.7 266.7M487.9 269.4 505.3 268.4M404.9 192.6C402.2 193.2 390.6 194.8 385.6 196.4C380.7 197.9 374.3 201.7 370.2 203.5C366.1 205.4 358.7 208.3 356.8 209.1M381.1 203.8C379.3 204.4 371.7 207.2 368.6 207.9C365.5 208.6 360.6 208.7 359.3 208.8M401.7 269.8 408.9 288.3M484.3 234.9C481.9 235.0 471.9 235.0 467.2 235.2C462.5 235.5 453.7 236.4 451.5 236.6M419.2 238.7 410.9 243.5M466.9 241.4 461.2 252.0M340.5 154.6C341.2 156.7 343.9 165.2 345.5 169.1C347.1 173.0 350.8 179.9 351.7 181.7M419.7 258.0C418.3 260.0 412.1 269.2 409.3 272.2C406.6 275.2 401.9 278.1 400.7 279.1M387.0 307.8C389.3 309.3 399.9 315.4 403.3 317.8C406.7 320.2 409.6 323.4 410.7 324.4M325.0 305.3C326.0 306.0 329.2 307.9 332.0 310.5C334.8 313.1 342.7 321.6 344.5 323.5M385.7 235.2C385.3 238.2 384.4 251.0 383.0 255.9C381.6 260.9 376.8 267.8 375.8 269.8M428.9 182.6 407.6 186.1M476.5 300.0C476.9 301.5 478.1 306.8 479.1 310.3C480.1 313.7 481.6 319.6 483.4 324.4C485.2 329.1 490.6 340.9 491.8 343.6M508.3 351.6C506.4 353.6 497.8 362.4 494.9 365.7C492.0 369.0 489.4 372.1 488.0 374.7C486.7 377.4 485.5 383.0 485.1 384.4M404.7 303.7C407.7 304.8 421.4 309.4 425.3 311.1C429.3 312.7 428.9 312.9 432.5 315.2C436.2 317.4 448.2 325.2 450.8 326.8M398.0 220.0C400.4 221.0 410.5 225.7 414.8 226.9C419.0 228.1 425.8 228.2 427.6 228.4M487.2 235.0C486.0 235.2 481.7 236.0 478.8 236.3C475.9 236.6 468.8 236.9 467.2 237.0M391.0 214.3C392.7 215.5 399.1 220.7 403.4 223.1C407.7 225.5 418.7 229.8 421.2 230.9M495.5 281.2C497.6 282.2 506.0 285.1 510.5 288.2C515.0 291.2 522.7 299.4 526.9 302.4C531.0 305.4 537.6 308.1 539.4 309.1M496.0 260.4C495.2 261.3 491.8 265.6 490.1 267.3C488.4 269.0 486.4 269.1 484.1 272.3C481.8 275.6 475.4 287.4 473.9 290.0M455.0 240.4C454.0 241.6 450.1 246.2 447.9 249.4C445.8 252.6 441.4 259.4 440.0 262.6C438.6 265.9 438.3 271.0 438.0 272.4M279.9 277.5C276.9 277.2 263.7 276.7 258.4 275.7C253.1 274.7 245.2 271.1 243.0 270.4M388.4 192.8C390.2 195.2 397.7 205.6 401.3 209.7C404.9 213.8 410.9 218.0 413.5 221.2C416.0 224.3 418.5 230.3 419.4 231.8M324.2 166.3C324.3 169.1 325.3 181.7 324.9 185.8C324.6 189.8 323.4 191.7 321.8 194.8C320.2 198.0 314.9 206.1 313.8 208.0M425.1 232.7C425.8 233.6 427.2 235.5 429.8 238.7C432.4 241.9 441.5 252.7 443.5 255.1M494.1 264.5C496.8 264.5 507.4 264.2 513.1 264.6C518.8 265.0 530.8 267.2 533.8 267.6M442.9 293.9C442.1 294.8 439.2 298.9 437.5 300.6C435.7 302.4 432.7 304.3 430.6 305.9C428.4 307.4 423.7 310.7 422.5 311.5M401.3 207.3C403.1 208.6 410.4 212.4 413.7 215.9C417.0 219.4 423.0 229.4 424.6 231.6M226.0 79.7 232.8 97.5M259.0 15.0C259.5 18.0 261.6 31.3 262.9 36.1C264.2 41.0 266.3 44.2 268.2 48.8C270.1 53.4 275.1 65.8 276.3 68.6M217.7 97.3C216.7 97.4 213.2 97.3 210.7 98.3C208.2 99.2 201.8 103.3 200.3 104.2M150.6 47.6 130.8 41.5M294.7 3.7C293.4 6.5 288.0 19.0 285.5 23.1C283.0 27.2 278.4 31.1 277.2 32.4M236.4 108.6C236.1 109.7 235.6 112.5 234.4 116.4C233.2 120.4 228.8 133.4 227.8 136.3M239.6 14.0 247.7 20.3M181.2 20.9C181.0 22.4 179.9 28.7 180.0 31.4C180.2 34.2 181.9 38.9 182.2 40.1M216.2 88.8C217.2 91.0 221.6 100.4 222.9 104.3C224.2 108.2 225.1 114.3 225.5 116.0M222.7 5.3C220.9 6.8 213.5 12.7 209.5 15.7C205.6 18.6 197.2 24.4 195.2 25.8M282.2 44.1C284.4 44.4 292.2 45.7 297.4 46.1C302.6 46.4 315.5 46.5 318.5 46.5M180.0 103.4C181.6 104.4 187.3 107.3 191.3 110.0C195.4 112.7 204.7 120.0 208.5 122.4C212.3 124.8 216.6 126.1 217.9 126.7M255.8 42.8C254.8 44.1 251.6 49.3 249.0 51.7C246.3 54.1 238.9 58.6 237.2 59.8M263.9 80.1C261.0 79.8 247.8 77.8 243.8 77.5C239.9 77.3 240.1 78.3 236.4 78.2C232.6 78.1 220.2 77.1 217.5 76.9M130.6 31.7C131.4 34.7 135.2 46.4 135.8 52.4C136.4 58.5 134.5 67.9 134.9 74.0C135.4 80.1 138.3 92.2 138.9 95.2M188.4 81.4 188.7 95.5M212.9 99.8C214.0 101.1 217.4 105.8 221.1 109.0C224.7 112.2 234.3 118.4 238.2 122.2C242.1 126.1 247.0 133.8 248.4 135.7M394.2 55.5C395.4 57.3 400.5 64.8 402.4 67.9C404.4 71.0 407.2 75.8 407.9 77.2M404.9 33.4C407.2 34.1 417.2 37.3 420.5 38.3C423.8 39.2 426.8 39.9 427.9 40.2M411.5 12.7C412.2 14.3 415.4 20.2 416.1 24.1C416.8 27.9 416.7 37.5 416.7 39.7M410.4 37.2C408.6 39.0 399.9 47.4 397.4 50.3C394.9 53.3 393.4 56.7 392.7 57.8M422.3 22.4C424.5 22.3 433.1 21.2 437.8 21.2C442.4 21.3 452.4 22.6 454.9 22.8M457.4 45.9C457.4 49.1 456.7 62.0 457.5 67.9C458.3 73.8 462.4 84.4 463.2 87.2M413.9 32.7C412.0 33.4 403.9 36.8 400.1 38.0C396.4 39.2 389.5 40.5 387.7 41.0M371.0 65.0C369.7 66.1 365.9 70.3 362.2 72.5C358.4 74.7 347.3 79.2 344.8 80.3M400.1 56.1 395.6 73.5M450.9 47.7C452.5 49.0 458.3 54.5 461.9 57.1C465.6 59.7 474.5 64.6 476.6 65.9M425.3 21.1C423.3 21.7 414.3 23.8 411.1 25.2C407.9 26.6 404.1 30.2 402.9 31.0M614.4 523.4C613.5 525.7 609.6 536.2 608.1 539.5C606.7 542.8 605.5 544.5 604.2 546.3C602.8 548.0 599.5 550.8 598.7 551.6M587.3 436.1C585.5 436.1 577.9 435.9 574.6 435.7C571.3 435.6 565.8 435.1 564.3 435.0M615.6 495.6C614.2 497.4 607.9 504.0 605.7 507.8C603.5 511.7 600.9 520.4 600.2 522.5M609.9 476.9C610.9 478.2 615.5 483.6 617.3 486.3C619.1 489.0 621.5 494.5 622.2 495.8M588.5 481.5 586.9 496.0M579.8 471.4C582.1 472.5 592.3 477.6 596.1 478.8C599.9 480.1 605.1 479.8 606.6 479.9M668.9 478.5C667.9 480.8 663.2 489.5 661.9 494.4C660.5 499.2 659.7 509.9 659.3 512.4M641.2 464.8C641.8 466.9 643.4 475.5 645.0 479.8C646.7 484.1 651.6 492.8 652.7 494.9M602.5 408.2 615.4 423.1M562.9 381.9C560.8 384.0 551.9 393.2 547.6 396.6C543.3 399.9 537.4 403.5 532.9 405.2C528.4 406.9 518.7 408.2 516.3 408.7M590.6 485.9 584.5 505.1M574.3 478.1C575.4 479.2 579.6 482.3 581.7 485.4C583.7 488.6 587.9 497.8 589.0 499.9M564.0 497.3C562.1 499.7 553.7 510.7 551.0 513.9C548.4 517.1 547.9 517.5 545.5 519.5C543.0 521.5 535.5 526.8 533.8 528.0M661.3 406.3C662.9 407.3 669.0 410.7 672.8 413.7C676.5 416.8 683.0 424.8 687.6 427.7C692.1 430.7 702.1 433.6 704.5 434.6M666.5 523.6C665.1 523.6 660.0 524.5 656.7 523.7C653.3 522.9 645.1 518.9 643.1 518.1M612.0 426.9 619.6 432.4M638.6 442.5C637.7 444.1 634.3 449.4 632.6 453.9C630.9 458.5 627.3 471.5 626.4 474.5M638.8 437.2C636.7 438.9 627.3 446.5 624.0 448.7C620.7 450.9 616.9 452.2 615.7 452.8M688.7 164.4C690.3 165.0 696.9 168.1 700.0 169.0C703.2 170.0 709.3 170.8 710.8 171.0M692.5 96.3C691.9 97.7 690.3 102.0 688.3 105.6C686.2 109.2 680.3 116.4 678.1 121.4C675.9 126.4 673.5 137.7 672.7 140.5M685.3 120.9 688.8 132.8M668.9 207.6C665.9 208.1 653.5 208.9 647.8 210.8C642.0 212.7 631.3 219.6 628.6 221.1M726.0 144.3C724.3 146.4 718.2 155.2 714.4 158.8C710.6 162.5 701.7 168.1 699.5 169.6M658.9 130.7 655.0 137.6M698.9 95.7C697.8 97.6 693.2 105.1 691.4 109.1C689.5 113.0 686.7 121.5 685.9 123.5M629.6 136.8 647.6 147.7M642.0 135.1C642.9 137.0 646.4 145.0 648.1 148.0C649.9 151.0 651.4 152.7 654.2 156.1C657.1 159.4 666.1 169.1 668.1 171.2M672.7 121.7C671.6 124.0 667.5 132.9 664.9 137.7C662.4 142.5 656.1 152.6 654.6 155.1M685.0 196.6C685.9 197.4 689.1 199.0 691.3 202.4C693.6 205.8 699.6 217.7 701.0 220.3M599.5 151.9C599.1 152.8 597.9 155.1 596.3 158.5C594.7 162.0 589.6 173.5 588.5 176.0M649.5 124.5 656.5 129.0M617.6 113.3C617.8 116.3 619.2 129.7 619.2 134.1C619.3 138.5 617.6 140.2 617.9 144.2C618.3 148.2 621.2 159.5 621.7 162.1M598.5 157.6C601.1 158.8 612.2 164.2 616.5 165.6C620.9 167.0 627.3 167.2 629.1 167.4M712.2 121.2C712.6 122.7 713.7 128.9 715.3 131.9C716.9 134.9 722.3 140.7 723.5 142.2M744.7 248.8 754.7 268.3M663.8 248.7 658.1 265.1M681.6 258.2C682.7 257.8 685.6 256.6 689.3 255.8C693.1 255.0 705.2 253.1 707.8 252.7M699.4 288.1C702.4 287.9 715.4 287.6 720.4 286.7C725.5 285.7 732.7 282.5 734.8 281.8M693.9 251.1 707.2 266.2M713.7 285.8C714.0 288.7 715.4 302.3 716.2 306.3C717.0 310.3 718.7 312.6 719.1 313.6M622.4 256.2C621.2 255.9 617.3 254.5 614.0 254.2C610.7 253.8 602.5 254.3 599.1 253.8C595.7 253.3 591.3 251.2 590.0 250.8M753.7 296.1C754.4 297.4 756.4 301.4 758.1 304.8C759.8 308.2 764.5 317.7 765.6 319.8M632.4 286.5C631.8 289.1 628.7 300.7 627.9 304.6C627.0 308.4 626.8 312.3 626.6 313.6M723.7 261.9C726.1 262.5 735.2 265.8 740.1 266.1C744.9 266.4 754.9 264.1 757.4 263.7M734.7 267.5 728.2 278.0M716.2 293.8C717.6 293.9 722.0 294.2 725.4 294.6C728.8 295.1 735.2 297.1 740.1 296.9C745.0 296.6 757.1 293.4 760.0 292.8M752.3 267.2C753.7 269.2 759.6 276.9 762.3 281.2C765.0 285.4 770.0 294.6 771.2 296.9M714.1 276.4C712.4 277.0 706.1 279.3 702.0 281.2C698.0 283.1 690.3 287.2 685.9 289.8C681.5 292.4 673.3 298.1 671.2 299.5M346.4 353.8C345.0 354.9 339.3 358.4 336.4 361.4C333.5 364.3 327.7 372.7 326.2 374.6M377.1 366.5 396.6 364.3M393.4 420.0C392.6 420.6 391.3 422.9 387.5 424.2C383.8 425.5 370.0 428.6 367.1 429.3M357.2 439.8C357.8 442.3 361.4 453.2 361.9 457.4C362.5 461.6 361.0 466.1 361.0 469.3C361.1 472.6 362.1 478.7 362.2 480.2M403.9 405.3C403.6 406.9 401.6 413.2 401.5 416.5C401.3 419.7 401.8 424.6 402.9 428.1C404.0 431.5 408.4 438.8 409.3 440.6M394.0 355.8C393.6 358.1 391.9 367.6 391.3 371.9C390.7 376.2 390.0 383.9 389.8 385.9M388.0 430.6C386.4 432.3 379.3 439.5 376.8 442.4C374.4 445.2 372.9 447.2 371.1 450.6C369.3 454.0 365.2 463.9 364.2 466.1M392.2 466.0C390.6 466.9 384.2 471.0 381.0 472.4C377.8 473.9 371.5 475.4 369.9 475.9M372.4 432.2C373.9 434.7 380.1 446.3 383.0 450.3C385.9 454.3 391.3 458.9 392.7 460.3M333.5 395.9C333.9 398.0 335.5 407.4 336.6 410.5C337.7 413.7 339.5 415.3 341.1 417.8C342.8 420.4 347.0 427.1 348.0 428.6M368.1 373.3C369.9 375.7 377.4 385.8 380.6 390.2C383.9 394.7 388.1 400.2 390.7 404.7C393.2 409.2 397.3 419.2 398.5 421.7M447.0 419.6C448.1 420.3 451.0 422.0 454.6 424.4C458.2 426.8 469.5 434.8 472.0 436.5M428.8 461.1C429.5 463.6 432.7 473.4 433.8 478.3C434.9 483.2 436.0 492.9 436.4 495.4M395.2 369.4C396.3 371.5 401.7 380.1 403.1 383.7C404.5 387.3 404.5 393.2 404.8 394.8M351.8 338.0C349.5 339.5 339.3 347.1 336.0 349.0C332.7 350.9 329.6 350.9 328.5 351.2M402.0 425.8C401.5 427.5 399.4 435.0 398.4 438.0C397.5 440.9 396.0 445.3 395.6 446.5M374.8 387.7C372.0 389.0 360.2 394.9 355.5 396.6C350.8 398.3 346.7 399.2 342.0 399.8C337.3 400.4 325.2 400.6 322.4 400.8M400.5 405.9 392.5 412.6M380.5 371.4C380.7 373.1 381.8 379.5 382.1 383.0C382.4 386.5 382.5 391.0 382.5 395.7C382.4 400.4 381.9 413.1 381.8 416.0M375.5 370.9C376.4 373.0 380.3 380.7 381.5 385.1C382.8 389.4 383.8 399.0 384.2 401.3M357.2 379.5C358.0 380.7 361.7 385.7 363.0 387.9C364.2 390.2 365.3 391.4 365.9 395.2C366.5 398.9 366.9 411.5 367.0 414.2M338.1 502.5C339.4 502.7 343.8 502.6 347.1 504.2C350.3 505.7 357.7 510.8 360.9 513.3C364.1 515.9 368.1 520.7 369.3 522.0M368.2 529.4C368.9 531.2 371.7 538.7 373.3 542.5C374.8 546.3 377.3 552.3 378.9 556.2C380.5 560.1 383.7 567.8 384.5 569.7M331.5 521.7 343.6 523.6M339.3 470.1 345.1 475.1M336.5 470.8C336.9 472.5 337.9 478.9 338.8 482.7C339.7 486.5 342.3 495.3 342.8 497.4M407.9 540.5 392.8 546.5M358.1 475.3C358.3 476.4 358.0 480.1 359.4 483.2C360.8 486.3 364.8 493.0 367.9 497.2C371.1 501.4 379.4 510.3 381.3 512.5M383.6 487.1C384.6 487.7 388.3 489.9 390.6 490.8C392.9 491.7 398.2 492.9 399.5 493.2M340.3 487.3C341.6 487.9 345.2 490.1 349.5 491.2C353.8 492.2 367.4 493.9 370.4 494.4M371.3 477.2C371.2 478.7 371.3 483.1 370.4 487.6C369.4 492.1 365.6 504.4 364.7 508.8C363.9 513.2 364.7 517.1 364.7 518.4M281.2 145.8C281.1 147.0 281.0 151.9 280.4 154.3C279.8 156.6 277.5 161.1 277.0 162.3M307.8 139.1C306.4 139.8 300.7 141.8 298.1 144.0C295.4 146.1 290.2 152.7 288.9 154.2M348.0 134.6 362.0 141.0M304.0 169.4C304.8 171.5 308.6 179.8 309.2 183.9C309.9 188.1 308.8 196.3 308.7 198.4M310.9 142.9C310.9 145.5 311.6 157.0 310.9 161.5C310.2 166.0 306.6 172.5 305.9 174.4M290.8 162.4C293.7 163.6 304.8 169.3 310.7 170.6C316.6 172.0 329.2 171.5 332.3 171.6M262.8 142.4 266.2 160.4M278.8 159.2 284.9 168.4M271.8 123.1C270.1 124.3 263.0 127.8 259.6 131.4C256.3 134.9 250.0 145.6 248.4 148.0M566.9 106.9C566.5 108.2 565.0 112.5 564.3 115.9C563.5 119.4 562.0 125.9 561.7 131.0C561.5 136.0 562.3 148.5 562.4 151.5M518.0 88.4 519.4 106.3M544.4 96.8C543.2 97.7 538.7 101.0 536.0 103.3C533.3 105.6 527.0 111.5 525.6 112.9M529.5 88.4 546.4 96.0M578.9 117.9C580.4 117.9 586.4 117.8 589.5 117.5C592.7 117.1 596.3 115.7 600.9 115.3C605.5 115.0 618.6 115.0 621.5 115.0M545.8 104.6C548.1 106.2 557.8 113.7 561.6 115.7C565.4 117.7 570.9 118.1 572.5 118.5M500.8 92.6C501.9 93.5 505.6 96.6 507.9 99.0C510.2 101.3 515.0 106.7 516.6 109.2C518.3 111.8 519.3 115.9 519.8 117.0M546.3 122.8 559.8 129.4M542.4 134.8 547.3 146.9M547.3 105.9C547.9 108.8 550.2 121.4 551.2 126.4C552.1 131.3 553.6 138.6 554.0 140.6M527.9 72.4C526.9 73.0 524.0 73.7 521.0 76.4C518.1 79.1 509.2 89.3 507.2 91.4M558.7 112.4C560.4 112.9 567.1 114.9 570.3 116.3C573.5 117.7 579.7 121.4 581.3 122.2M738.6 344.3 753.7 343.7M655.9 313.3C655.5 314.9 653.5 320.5 653.4 324.7C653.2 328.8 654.7 340.0 654.9 342.5M705.1 390.3C704.2 392.2 701.0 399.1 698.8 403.7C696.6 408.3 691.1 419.8 689.8 422.5M705.6 372.5C704.1 373.9 697.6 379.7 695.0 382.0C692.5 384.4 688.7 388.1 687.7 389.1M703.8 370.1C701.2 371.2 690.3 376.0 685.8 377.4C681.4 378.8 674.5 379.6 672.6 380.0M756.2 338.6C757.4 340.1 761.6 346.4 765.0 349.6C768.3 352.7 777.3 358.9 779.4 360.4M729.4 398.3C732.1 399.5 742.7 404.3 748.1 406.5C753.4 408.7 764.1 412.7 766.8 413.7M685.5 410.2C687.2 410.6 693.3 412.5 697.5 412.9C701.7 413.4 712.2 413.3 714.6 413.3M715.9 355.4C716.8 357.9 721.1 369.1 722.0 372.9C723.0 376.7 722.2 380.4 722.2 381.7M486.4 479.3C487.6 480.2 491.4 483.9 494.5 486.0C497.5 488.1 505.8 493.1 507.7 494.2M485.8 542.8C485.7 544.1 485.1 548.7 485.0 551.6C484.8 554.5 485.3 559.9 484.7 563.3C484.1 566.6 481.1 573.3 480.5 575.0M588.1 471.1C590.1 472.6 597.4 478.8 602.1 481.3C606.9 483.9 618.5 487.8 621.2 488.9M474.7 518.6C472.6 518.3 463.5 517.1 460.1 516.7C456.7 516.2 452.0 515.5 450.6 515.4M498.6 510.6C497.8 511.7 494.4 515.7 493.2 517.9C492.0 520.2 490.6 524.9 490.1 526.1M491.7 440.7C490.9 442.1 488.4 447.2 486.0 450.5C483.5 453.8 476.0 462.0 474.4 463.9M595.7 505.3C595.5 507.4 595.0 516.7 594.2 520.2C593.4 523.6 590.7 526.3 590.1 529.4C589.4 532.4 589.6 539.7 589.6 541.4M536.2 445.3 550.3 461.1M501.4 463.8C503.5 465.3 512.4 471.7 516.0 474.4C519.5 477.0 524.2 480.0 526.4 482.3C528.6 484.5 530.8 488.9 531.5 490.0M494.7 510.9C495.8 511.7 500.1 514.7 502.2 516.5C504.3 518.3 508.4 522.4 509.4 523.3M603.1 555.2C602.0 555.4 598.9 556.1 595.6 556.7C592.4 557.2 583.9 558.9 580.3 559.1C576.6 559.4 571.5 558.6 570.0 558.5M107.5 264.1 116.8 269.8M77.0 257.8C75.6 258.5 71.4 261.4 67.1 262.7C62.8 264.1 51.1 265.6 47.0 267.0C42.9 268.4 39.6 271.7 38.4 272.5M99.7 231.2 98.6 248.1M109.8 273.8C108.4 274.9 102.2 279.2 100.0 281.4C97.8 283.6 95.2 288.1 94.4 289.2M26.9 522.0 20.2 527.3M54.4 447.1 50.0 452.8M55.3 485.5 61.1 492.4M34.9 518.4C35.8 518.9 38.8 520.7 41.1 522.2C43.4 523.7 47.6 526.6 51.0 528.9C54.3 531.1 62.7 536.9 64.7 538.2M10.2 474.7C11.1 476.6 14.0 484.0 16.1 488.1C18.1 492.3 23.5 501.5 24.7 503.7M76.6 594.2 70.9 600.2M75.7 468.9C74.5 470.2 70.4 475.2 67.2 478.2C64.0 481.3 55.5 488.4 53.5 490.1M45.4 535.6C43.1 537.1 33.0 544.3 29.2 546.5C25.4 548.6 20.4 549.8 18.9 550.4M38.5 492.1 57.9 500.8M45.5 462.9C44.2 463.7 38.8 467.3 36.3 468.5C33.9 469.8 31.7 470.4 28.5 471.7C25.2 473.0 15.9 476.7 13.9 477.6M96.7 485.3C94.6 486.0 85.6 489.3 82.3 490.5C79.0 491.6 76.2 492.3 73.5 493.4C70.8 494.4 64.8 497.0 63.3 497.6M30.2 433.9C28.0 434.7 19.9 437.9 15.2 439.5C10.4 441.1 -0.5 444.4 -3.1 445.2M72.3 463.2C73.6 464.0 77.5 466.8 81.7 468.6C85.9 470.3 98.9 474.3 101.8 475.3" fill="none" stroke="#fff" stroke-width="1" stroke-opacity=".75"/>
<path d="M456.7 0.0C456.7 3.3 456.6 14.1 456.7 23.1C456.9 32.0 456.6 51.8 457.8 62.9C459.0 74.0 462.9 92.5 465.1 100.6C467.4 108.7 472.3 116.8 473.5 119.5M128.2 480.9C128.5 484.9 130.9 500.2 130.6 509.3C130.2 518.5 126.1 537.1 125.8 544.9C125.5 552.7 126.5 558.5 128.2 563.9C129.9 569.4 133.6 575.4 137.7 582.9C141.7 590.5 153.9 611.8 156.7 616.6" fill="none" stroke="#fff" stroke-width="1.18" stroke-linejoin="round" stroke-linecap="round"/>
<path d="M620.0 32.5C623.0 30.8 635.0 23.8 641.0 21.0C646.9 18.1 656.8 15.6 661.9 12.6C667.0 9.6 674.5 1.8 676.6 0.0M642.0 104.8C641.0 107.8 636.0 119.3 634.7 125.8C633.3 132.2 632.9 146.6 632.6 150.1M645.2 194.0C647.5 199.7 657.4 223.4 661.9 233.8C666.4 244.3 674.5 262.6 676.6 267.4M647.2 331.4C648.4 338.9 653.2 372.5 655.6 383.8C658.0 395.2 662.5 406.3 664.0 411.1C665.5 415.9 665.8 416.5 666.1 417.4M824.1 568.7C826.5 570.0 836.3 574.1 840.8 578.2C845.2 582.2 851.9 591.7 855.0 597.2C858.0 602.7 861.1 613.9 862.1 616.6" fill="none" stroke="#fff" stroke-width="1.42" stroke-linejoin="round" stroke-linecap="round"/>
<path d="M75.5 62.9C79.6 65.7 94.6 77.1 104.8 82.8C115.0 88.5 137.7 98.2 146.7 102.7C155.7 107.2 162.6 111.2 167.7 114.2C172.8 117.2 180.3 122.3 182.4 123.7M264.1 12.6 278.8 46.1M251.5 49.3C255.4 49.3 270.4 48.7 278.8 49.3C287.1 49.8 305.5 52.4 310.0 52.9M0.0 419.5C6.0 418.7 31.4 416.3 41.9 414.2C52.4 412.1 64.4 407.6 73.4 404.8C82.3 402.0 95.8 396.6 104.8 394.3C113.8 392.1 127.3 390.4 136.2 389.1C145.2 387.7 156.0 388.0 167.7 384.9C179.4 381.7 208.7 370.8 218.0 367.1C227.3 363.3 227.9 362.6 232.7 358.7C237.4 354.8 247.0 345.2 251.5 339.8C256.0 334.4 260.1 326.6 264.1 321.0C268.1 315.3 277.6 303.0 279.8 300.0M54.6 616.6C60.4 613.9 82.4 602.7 94.9 597.2C107.5 591.7 128.2 583.6 142.4 578.2C156.7 572.8 181.1 562.2 194.6 559.2C208.2 556.1 222.8 557.2 237.4 556.8C251.9 556.5 288.2 556.8 296.7 556.8M310.0 567.5C316.8 567.8 345.6 569.4 357.5 569.9C369.3 570.4 385.3 571.6 393.1 571.1C400.9 570.5 407.7 568.0 412.1 566.3C416.5 564.6 422.2 560.2 423.9 559.2" fill="none" stroke="#fff" stroke-width="1.53" stroke-linejoin="round" stroke-linecap="round"/>
<path d="M107.9 39.8C110.5 41.0 120.2 46.0 125.8 47.8C131.3 49.6 141.9 51.9 146.7 52.4C151.5 52.9 153.3 52.1 159.3 51.6C165.3 51.0 179.4 49.6 188.6 48.6C197.9 47.7 216.5 45.8 224.3 44.9C232.1 43.9 240.4 42.3 243.1 41.9M107.9 41.5C105.7 43.1 97.5 48.7 92.2 52.4C87.0 56.1 74.3 65.3 71.3 67.5M157.2 52.4C157.8 49.4 159.0 36.2 161.4 31.4C163.8 26.7 170.1 21.2 174.0 19.3C177.9 17.3 184.1 19.0 188.6 17.8C193.1 16.6 198.8 12.0 205.4 10.9C212.0 9.8 226.7 10.4 234.8 10.1C242.8 9.8 258.1 9.0 262.0 8.8M157.2 52.4C158.1 55.1 161.0 65.8 163.5 71.3C165.9 76.7 172.8 87.8 174.4 90.5M278.8 106.9C278.5 109.6 275.2 121.3 276.7 125.8C278.2 130.3 284.5 136.2 289.2 138.3C294.0 140.4 307.0 140.1 310.0 140.4M0.0 144.6 12.6 150.0M310.0 52.9C312.1 53.4 318.7 57.3 324.7 56.6C330.7 55.9 343.5 51.2 351.9 48.2C360.3 45.2 376.5 39.2 383.4 35.6C390.2 32.0 395.9 25.9 400.1 23.1C404.3 20.2 407.9 17.4 412.7 15.7C417.5 14.1 427.4 12.9 433.7 11.5C440.0 10.2 449.8 7.9 456.7 6.3C463.6 4.6 478.3 0.9 481.9 0.0M423.2 150.1C426.5 148.4 439.1 142.4 446.2 138.3C453.4 134.3 467.5 125.8 473.5 121.6C479.5 117.4 483.1 114.4 488.2 109.0C493.3 103.6 503.7 89.5 509.1 83.8C514.5 78.2 520.5 72.8 525.9 69.2C531.3 65.6 538.8 62.6 546.8 58.7C554.9 54.8 572.0 45.7 582.5 41.9C592.9 38.2 614.6 33.8 620.0 32.5M817.0 150.1C812.8 149.6 797.9 146.7 787.7 146.7C777.5 146.7 751.7 149.6 745.8 150.1M310.0 280.0C307.6 281.2 297.8 285.5 293.4 288.3C289.1 291.2 281.8 298.4 279.8 300.0M511.2 267.4C515.4 265.0 531.9 255.1 540.6 250.6C549.2 246.1 564.2 239.2 572.0 235.9C579.8 232.6 591.8 228.8 595.1 227.6M440.0 150.0 452.5 183.5M444.1 248.5C445.9 251.2 453.4 263.5 456.7 267.4C460.0 271.3 465.7 274.6 467.2 275.8M111.1 348.2C110.8 351.2 110.2 364.1 109.0 369.2C107.8 374.3 103.9 378.8 102.7 383.8C101.5 388.9 100.9 401.8 100.6 404.8M0.0 350.3C2.1 352.4 8.7 359.0 14.7 365.0C20.7 371.0 35.0 386.2 41.9 392.2C48.8 398.2 58.7 403.0 62.9 406.9C67.1 410.8 68.3 414.4 71.3 419.5C74.3 424.6 80.3 438.2 83.8 442.5C87.4 446.9 94.2 449.0 96.0 450.0M465.7 450.0C465.5 453.4 465.5 467.6 464.3 473.7C463.1 479.8 459.5 486.6 457.2 492.7C454.8 498.8 450.7 510.7 447.7 516.5C444.6 522.2 438.5 529.0 435.8 533.1C433.1 537.1 430.4 541.2 428.7 544.9C427.0 548.7 424.6 557.2 423.9 559.2M627.1 480.9C631.2 483.9 648.5 496.1 655.6 502.2C662.7 508.3 670.9 518.2 677.0 523.6C683.1 529.0 692.9 536.8 698.3 540.2C703.8 543.6 709.9 545.6 714.9 547.3C720.0 549.0 728.5 550.4 733.9 552.1C739.4 553.8 748.5 556.1 752.9 559.2C757.3 562.2 760.0 572.4 764.8 573.4C769.5 574.4 780.4 567.0 786.2 566.3C791.9 565.6 799.7 568.3 805.1 568.7C810.6 569.0 818.7 570.4 824.1 568.7C829.6 567.0 838.7 560.5 843.1 556.8C847.5 553.1 853.0 546.3 855.0 542.6C857.0 538.8 851.6 534.1 857.4 530.7C863.1 527.3 887.5 520.2 895.3 518.8C903.1 517.5 908.6 519.5 912.0 521.2C915.3 522.9 917.7 529.3 918.6 530.7M677.0 523.6C677.3 527.0 680.4 538.8 679.3 547.3C678.3 555.8 672.9 573.0 669.8 582.9C666.8 592.8 659.7 611.8 658.0 616.6" fill="none" stroke="#fff" stroke-width="1.77" stroke-linejoin="round" stroke-linecap="round"/>
<path d="M134.1 123.7C129.4 125.2 107.8 132.5 100.6 134.1C93.4 135.8 89.8 134.6 83.8 135.2C77.9 135.8 65.0 136.2 58.7 138.3C52.4 140.5 42.5 148.4 39.8 150.0M712.2 125.8C714.9 125.0 726.3 120.8 731.1 120.5C735.9 120.2 738.6 123.8 745.8 123.7C752.9 123.5 776.3 120.1 781.4 119.5M88.0 300.1C94.6 298.1 122.8 290.3 134.1 286.2C145.5 282.2 159.9 276.1 167.7 271.6C175.5 267.1 182.7 259.9 188.6 254.8C194.6 249.7 204.5 239.8 209.6 235.9C214.7 232.0 218.9 229.5 224.3 227.6C229.7 225.6 240.4 224.1 247.3 222.3C254.2 220.5 263.5 217.2 272.5 215.0C281.4 212.7 304.6 207.8 310.0 206.6M390.7 254.8C395.9 254.8 420.3 254.8 427.4 254.8C434.4 254.8 435.8 256.9 440.0 254.8C444.1 252.7 454.3 242.2 456.7 240.1M316.3 300.1C317.2 298.1 319.9 289.7 322.6 286.2C325.3 282.8 327.4 277.3 335.2 275.8C342.9 274.3 371.1 275.8 377.1 275.8M475.6 250.6C475.6 252.4 474.4 260.5 475.6 263.2C476.8 265.9 481.6 268.9 484.0 269.5C486.4 270.1 491.2 267.7 492.4 267.4M372.9 150.0 362.4 168.9M611.8 150.0 620.0 156.3M339.3 318.9C339.3 317.1 341.7 307.5 339.3 306.3C336.9 305.1 325.0 309.9 322.6 310.5M620.0 304.2 582.5 300.0M678.7 421.6C680.2 423.7 687.1 432.2 689.2 436.2C691.3 440.3 692.8 448.1 693.4 450.1M620.0 425.8C621.8 427.6 631.4 434.9 632.6 438.3C633.8 441.8 629.0 448.4 628.4 450.1M275.3 582.9C274.7 586.0 271.6 599.5 270.6 604.3C269.6 609.1 268.6 614.9 268.2 616.6M0.0 488.0C1.4 487.0 6.1 482.9 9.5 480.9C12.9 478.8 21.7 474.8 23.7 473.7M11.9 507.0C10.9 510.0 6.4 522.9 4.7 528.3C3.1 533.8 0.7 542.6 0.0 544.9M571.1 523.6C572.5 523.2 577.2 519.9 580.6 521.2C584.0 522.6 590.1 530.7 594.8 533.1C599.6 535.5 611.1 537.1 613.8 537.8M620.0 526.0C619.1 526.3 614.4 524.9 613.8 528.3C613.3 531.7 617.2 544.6 616.2 549.7C615.2 554.8 607.7 559.2 606.7 563.9C605.7 568.7 608.7 580.2 609.1 582.9M480.9 480.9C482.9 479.5 489.0 473.4 495.1 471.4C501.2 469.3 516.2 467.0 523.6 466.6C531.1 466.3 542.3 468.0 547.4 469.0C552.5 470.0 557.5 473.1 559.2 473.7M310.0 485.6 345.6 476.1" fill="none" stroke="#fff" stroke-width="2.12" stroke-linejoin="round" stroke-linecap="round"/>
<path d="M63.9 0.0C66.8 2.8 77.6 14.2 83.8 19.9C90.1 25.6 104.5 37.0 107.9 39.8M189.3 79.6C189.3 82.9 190.7 98.5 189.7 102.7C188.7 107.0 183.7 104.9 182.4 109.4C181.0 113.9 180.7 128.3 180.3 134.1C179.8 139.9 179.5 147.8 179.4 150.0M189.7 102.7C192.5 100.6 203.8 93.1 209.6 88.0C215.4 82.9 225.6 72.0 230.6 67.1C235.5 62.1 242.2 55.4 244.2 53.4M270.4 0.0C269.5 2.4 265.9 11.4 264.1 16.8C262.3 22.2 260.2 33.7 257.8 37.7C255.4 41.8 248.8 44.0 247.3 45.1M278.8 104.8 310.0 92.2M433.7 0.0C433.7 1.6 433.4 8.8 433.7 11.5C434.0 14.2 432.5 17.2 435.8 18.9C439.1 20.5 450.7 22.8 456.7 23.1C462.7 23.4 470.2 21.4 477.7 21.0C485.2 20.5 503.1 19.9 509.1 19.9C515.1 19.9 515.1 20.8 519.6 21.0C524.1 21.1 537.6 21.0 540.6 21.0M412.7 15.7C413.6 18.0 417.3 24.7 419.0 31.4C420.6 38.2 422.4 54.8 424.2 62.9C426.0 71.0 431.4 81.4 431.6 88.0C431.7 94.6 426.5 104.8 425.3 109.0C424.1 113.2 422.3 113.8 423.2 117.4C424.1 121.0 429.2 129.5 431.6 134.1C434.0 138.8 438.8 147.8 440.0 150.0M324.7 56.6C325.3 58.4 326.2 66.2 328.9 69.2C331.6 72.2 340.8 75.2 343.5 77.6C346.2 79.9 349.8 83.8 347.7 85.9C345.6 88.0 333.4 91.6 328.9 92.2C324.4 92.8 319.0 90.1 316.3 90.1C313.6 90.1 310.9 91.9 310.0 92.2M347.7 85.9C350.7 86.8 360.9 89.5 368.7 92.2C376.5 94.9 395.0 102.1 402.2 104.8C409.4 107.5 415.7 109.3 419.0 111.1C422.3 112.9 424.4 116.5 425.3 117.4M402.2 83.8C403.1 83.2 405.2 82.0 408.5 79.6C411.8 77.3 422.9 68.9 425.3 67.1M310.0 140.4C311.8 138.9 317.2 132.2 322.6 130.0C328.0 127.7 340.5 125.3 347.7 124.7C354.9 124.1 366.9 125.6 372.9 125.8C378.9 125.9 385.8 124.9 389.6 125.8C393.5 126.7 395.9 132.6 400.1 132.0C404.3 131.4 415.4 123.7 419.0 121.6C422.6 119.5 424.4 118.0 425.3 117.4M473.5 120.5C475.6 121.9 483.7 126.5 488.2 130.0C492.7 133.4 502.1 141.8 504.9 144.6C507.8 147.5 507.6 149.3 508.1 150.0M540.6 21.0C543.6 19.5 555.5 13.5 561.5 10.5C567.5 7.5 579.5 1.5 582.5 0.0M544.8 37.7C545.4 41.3 547.7 55.7 548.9 62.9C550.1 70.1 551.0 82.6 553.1 88.0C555.2 93.4 560.0 100.6 563.6 100.6C567.2 100.6 574.4 91.9 578.3 88.0C582.2 84.1 587.3 76.7 590.9 73.4C594.5 70.1 599.3 66.5 603.4 65.0C607.6 63.5 617.6 63.2 620.0 62.9M563.6 100.6C563.3 103.0 561.2 114.4 561.5 117.4C561.8 120.4 562.7 121.6 565.7 121.6C568.7 121.6 577.1 118.1 582.5 117.4C587.9 116.6 598.1 116.0 603.4 116.3C608.8 116.6 617.6 119.0 620.0 119.5M504.9 144.6C510.0 143.1 531.9 137.4 540.6 134.1C549.2 130.9 562.1 123.4 565.7 121.6M588.8 0.0C588.2 1.8 584.3 8.1 584.6 12.6C584.9 17.1 589.7 25.8 590.9 31.4C592.1 37.1 592.7 46.7 593.0 52.4C593.3 58.1 593.0 68.6 593.0 71.3M603.4 0.0 620.0 12.6M613.9 31.4 616.0 62.9M634.7 0.0C635.0 2.1 635.0 8.7 636.8 14.7C638.6 20.7 644.0 34.4 647.2 41.9C650.5 49.4 656.7 59.9 659.8 67.1C663.0 74.3 667.8 85.0 669.3 92.2C670.8 99.4 669.9 109.1 670.3 117.4C670.7 125.6 671.7 145.4 671.9 150.0M699.6 0.0C701.1 1.5 708.0 6.0 710.1 10.5C712.2 15.0 714.6 25.8 714.3 31.4C714.0 37.1 710.0 45.8 708.0 50.3C706.1 54.8 704.3 58.7 700.7 62.9C697.1 67.1 687.4 75.5 682.9 79.6C678.4 83.8 672.8 88.9 669.3 92.2C665.7 95.5 661.6 100.9 657.7 102.7C653.8 104.5 647.4 105.4 642.0 104.8C636.6 104.2 623.1 99.4 620.0 98.5M642.0 104.8C643.7 106.6 651.0 113.8 653.5 117.4C656.1 121.0 659.2 125.3 659.8 130.0C660.4 134.6 658.0 147.2 657.7 150.1M737.4 0.0C739.5 1.6 747.9 10.0 752.0 11.5C756.2 13.0 763.4 9.9 766.7 10.5C770.0 11.1 773.0 13.9 775.1 15.7C777.2 17.5 780.5 22.0 781.4 23.1M781.4 23.1C782.6 23.5 787.1 26.2 789.8 26.2C792.5 26.2 798.8 24.9 800.3 23.1C801.8 21.3 797.6 16.9 800.3 13.6C803.0 10.3 816.4 1.9 819.1 0.0M842.2 48.2C841.3 51.5 837.7 64.4 835.9 71.3C834.1 78.2 831.1 90.9 829.6 96.4C828.1 102.0 826.0 108.1 825.4 110.0M802.4 98.5C801.0 98.7 794.4 97.8 792.9 99.6C791.4 101.4 793.5 108.2 791.9 111.1C790.2 113.9 783.8 116.8 781.4 119.5C779.0 122.2 775.6 125.6 775.1 130.0C774.7 134.3 777.8 147.2 778.2 150.0M918.7 117.4C914.3 117.7 894.4 117.1 888.3 119.5C882.2 121.9 878.1 129.8 875.7 134.1C873.3 138.5 872.1 147.8 871.5 150.0M39.8 150.0C38.0 151.2 30.2 156.0 27.2 158.4C24.3 160.8 20.4 164.4 18.9 166.8C17.4 169.2 19.5 172.8 16.8 175.2C14.1 177.5 2.4 182.3 0.0 183.5M113.2 229.6C112.6 232.3 109.4 243.4 109.0 248.5C108.5 253.6 112.4 261.4 110.0 265.3C107.6 269.2 94.8 274.3 92.2 275.8M140.4 256.9C140.3 260.8 138.6 278.0 139.4 284.1C140.2 290.3 145.2 297.8 146.2 300.0M218.0 150.0C219.8 151.2 223.7 155.1 230.6 158.4C237.4 161.7 259.0 169.5 266.2 173.1C273.4 176.6 274.6 181.7 280.9 183.5C287.1 185.3 305.8 185.3 310.0 185.6M278.8 156.3C279.1 160.2 279.4 176.3 280.9 183.5C282.4 190.7 286.9 201.5 289.2 206.6C291.6 211.7 295.8 215.3 297.6 219.2C299.4 223.1 301.2 229.3 301.8 233.8C302.4 238.3 301.8 248.2 301.8 250.6M322.6 150.0C324.4 151.5 331.0 158.7 335.2 160.5C339.3 162.3 348.0 161.4 351.9 162.6C355.8 163.8 359.7 165.6 362.4 168.9C365.1 172.2 368.4 181.1 370.8 185.6C373.2 190.1 375.0 195.5 379.2 200.3C383.4 205.1 395.9 214.4 400.1 219.2C404.3 224.0 405.2 229.6 408.5 233.8C411.8 238.0 420.5 245.5 423.2 248.5C425.9 251.5 426.9 250.9 427.4 254.8C427.8 258.7 426.5 272.8 426.3 275.8M310.0 185.6C313.0 186.5 325.0 189.5 331.0 191.9C336.9 194.3 345.9 198.8 351.9 202.4C357.9 206.0 367.5 213.5 372.9 217.1C378.3 220.7 385.5 225.8 389.6 227.6C393.8 229.3 400.4 229.3 402.2 229.6M310.0 235.9C311.8 235.3 316.6 233.5 322.6 231.7C328.6 229.9 344.7 225.2 351.9 223.4C359.1 221.6 369.9 219.8 372.9 219.2M402.2 219.2C405.5 218.0 420.5 213.8 425.3 210.8C430.1 207.8 431.9 202.1 435.8 198.2C439.7 194.3 447.7 186.2 452.5 183.5C457.3 180.8 463.6 181.1 469.3 179.3C475.0 177.5 488.2 174.0 492.4 171.0C496.5 168.0 496.4 161.4 498.6 158.4C500.9 155.4 506.7 151.2 508.1 150.0M389.6 227.6C389.8 231.4 392.2 248.8 390.7 254.8C389.2 260.8 381.1 266.5 379.2 269.5C377.2 272.5 377.4 274.9 377.1 275.8M310.0 263.2C314.5 263.8 331.9 265.9 341.4 267.4C351.0 268.9 364.8 272.2 377.1 273.7C389.3 275.2 416.0 276.7 427.4 277.9C438.8 279.1 452.5 281.4 456.7 282.0M427.4 254.8C429.8 253.9 440.0 250.6 444.1 248.5C448.3 246.4 451.9 242.2 456.7 240.1C461.5 238.0 471.7 234.4 477.7 233.8C483.7 233.2 493.9 235.6 498.6 235.9C503.4 236.2 506.7 236.4 511.2 235.9C515.7 235.5 523.5 234.3 530.1 232.8C536.7 231.3 553.4 226.5 557.3 225.5M492.4 171.0C491.9 174.0 489.2 187.1 489.2 191.9C489.2 196.7 491.0 201.5 492.4 204.5C493.7 207.5 496.7 210.2 498.6 212.9C500.6 215.6 504.9 221.9 506.0 223.4M498.6 158.4C501.6 158.4 512.7 157.8 519.6 158.4C526.5 159.0 539.4 161.4 546.8 162.6C554.3 163.8 563.9 164.4 572.0 166.8C580.1 169.2 596.6 176.1 603.4 179.3C610.3 182.6 617.6 188.3 620.0 189.8M530.1 233.8C532.2 235.9 540.9 244.3 544.8 248.5C548.6 252.7 554.3 259.0 557.3 263.2C560.3 267.4 564.2 272.6 565.7 277.9C567.2 283.1 567.5 296.9 567.8 300.0M540.6 280.0C546.5 280.0 571.1 280.3 582.5 280.0C593.8 279.7 614.6 278.2 620.0 277.9M467.2 267.4C467.2 269.8 466.9 279.5 467.2 284.1C467.5 288.8 469.0 297.8 469.3 300.1M620.0 189.8C623.0 190.1 633.8 193.4 641.0 191.9C648.1 190.4 664.6 181.1 670.3 179.3C676.0 177.5 679.3 179.3 680.8 179.3M720.6 150.0C724.2 150.3 737.7 151.9 745.8 152.1C753.8 152.2 771.2 151.3 777.2 151.0C783.2 150.7 786.2 150.1 787.7 150.0M778.2 150.0C779.3 153.0 784.2 166.8 785.6 171.0C786.9 175.1 787.4 178.1 787.7 179.3M817.0 150.0C818.8 150.9 826.3 154.8 829.6 156.3C832.9 157.8 838.6 159.9 840.1 160.5M794.0 162.6C792.8 165.3 787.7 176.6 785.6 181.4C783.5 186.2 779.9 191.0 779.3 196.1C778.7 201.2 781.7 212.6 781.4 217.1C781.1 221.6 777.2 224.0 777.2 227.6C777.2 231.1 781.7 238.6 781.4 242.2C781.1 245.8 777.5 249.7 775.1 252.7C772.7 255.7 768.8 261.1 764.6 263.2C760.4 265.3 752.9 267.1 745.8 267.4C738.6 267.7 720.9 265.3 714.3 265.3C707.7 265.3 701.7 267.1 699.6 267.4M699.6 259.0C697.3 259.0 686.8 257.8 682.9 259.0C679.0 260.2 674.8 264.1 672.4 267.4C670.0 270.7 667.0 280.0 666.1 282.0M699.6 271.6C697.3 272.8 688.3 277.6 682.9 280.0C677.5 282.3 667.9 285.5 661.9 288.3C655.9 291.2 644.0 298.4 641.0 300.1M703.8 271.6C708.3 271.9 728.1 273.1 735.3 273.7C742.5 274.3 749.1 274.3 754.1 275.8C759.2 277.3 767.3 280.7 770.9 284.1C774.5 287.6 778.1 297.8 779.3 300.0M918.7 284.1C917.3 284.7 912.1 286.8 909.2 288.3C906.4 289.8 902.1 293.0 898.8 294.6C895.5 296.3 888.0 299.3 886.2 300.0M0.0 311.5C6.0 312.0 32.6 314.5 41.9 314.7C51.2 314.8 58.1 314.1 65.0 312.6C71.9 311.1 85.8 306.0 90.1 304.2C94.5 302.4 94.6 300.6 95.4 300.0M79.6 438.3 92.2 450.1M98.5 423.7 92.2 409.0M310.0 390.1C313.0 391.0 325.3 395.5 331.0 396.4C336.6 397.3 345.6 398.5 349.8 396.4C354.0 394.3 357.3 384.4 360.3 381.7C363.3 379.0 369.3 378.2 370.8 377.6M349.8 396.4C351.0 398.2 355.2 405.1 358.2 409.0C361.2 412.9 367.2 421.0 370.8 423.7C374.4 426.4 378.6 427.6 383.4 427.9C388.2 428.2 399.2 427.0 404.3 425.8C409.4 424.6 415.7 421.9 419.0 419.5C422.3 417.1 426.2 410.5 427.4 409.0M412.7 358.7C412.1 360.5 410.0 367.7 408.5 371.3C407.0 374.9 403.1 382.0 402.2 383.8M423.2 367.1C426.2 368.0 433.4 372.6 444.1 373.4C454.9 374.1 483.4 372.3 498.6 372.3C513.9 372.3 543.6 373.2 551.0 373.4M440.0 300.0 442.0 318.9M496.5 372.3C496.5 374.0 497.7 380.1 496.5 383.8C495.3 387.6 490.9 393.7 488.2 398.5C485.5 403.3 480.9 410.0 477.7 417.4C474.5 424.7 467.4 445.4 465.7 450.0M551.0 373.4C549.8 377.3 544.8 393.1 542.7 400.6C540.6 408.1 538.1 418.7 536.4 425.8C534.6 432.8 531.1 446.6 530.3 450.0M564.7 348.2C566.0 350.9 571.0 359.6 574.1 367.1C577.2 374.6 582.5 393.4 586.7 400.6C590.9 407.8 599.5 413.8 603.4 417.4C607.3 421.0 611.6 422.9 613.9 425.8C616.3 428.6 619.1 435.6 620.0 437.3M553.1 318.9C557.3 319.8 572.9 322.8 582.5 325.2C592.0 327.5 614.6 333.7 620.0 335.1M528.0 348.2 553.1 341.9M671.4 300.0C672.4 301.8 678.8 309.3 678.7 312.6C678.5 315.9 671.5 321.6 670.3 323.1M779.3 300.0C781.4 301.2 789.8 305.4 794.0 308.4C798.2 311.4 804.7 317.1 808.6 321.0C812.5 324.9 819.4 333.5 821.2 335.6M842.2 329.3C844.9 328.1 857.4 324.3 861.0 321.0C864.6 317.7 863.7 309.3 867.3 306.3C870.9 303.3 883.5 300.9 886.2 300.0M729.0 352.4C729.6 353.9 733.2 358.4 733.2 362.9C733.2 367.4 729.6 380.8 729.0 383.8M670.3 362.9C670.9 364.7 674.5 371.0 674.5 375.5C674.5 379.9 671.5 389.2 670.3 394.3C669.1 399.4 666.4 407.2 666.1 411.1C665.8 415.0 667.9 420.1 668.2 421.6M693.4 414.2C694.0 416.5 696.6 424.8 697.6 430.0C698.5 435.1 699.8 447.2 700.2 450.0M900.9 388.0 918.7 381.7M57.8 450.0 40.4 460.7M0.0 542.6C3.4 542.2 17.3 541.4 23.7 540.2C30.2 539.0 38.0 535.3 45.1 534.3C52.2 533.2 67.8 534.3 73.6 533.1C79.3 531.9 83.8 527.0 85.5 526.0M310.0 524.8C308.1 528.3 301.0 542.4 296.7 549.7C292.4 557.0 284.8 569.0 280.1 575.8C275.3 582.6 266.9 591.3 263.5 597.2C260.1 603.0 257.4 613.9 256.4 616.6M393.1 490.4C392.4 493.1 389.7 504.6 388.3 509.3C387.0 514.1 384.3 521.5 383.6 523.6M530.3 450.0C529.0 453.4 522.2 467.0 521.3 473.7C520.3 480.5 521.6 491.0 523.6 497.5C525.7 503.9 532.8 512.7 535.5 518.8C538.2 524.9 539.6 533.8 542.6 540.2C545.7 546.6 554.5 556.5 556.9 563.9C559.2 571.4 559.6 584.9 559.2 592.4C558.9 599.9 555.2 613.2 554.5 616.6M535.5 485.6C536.9 488.3 539.9 499.2 545.0 504.6C550.1 510.0 566.0 517.8 571.1 523.6C576.2 529.3 577.2 539.5 580.6 544.9C584.0 550.4 590.8 556.1 594.8 561.6C598.9 567.0 605.5 577.2 609.1 582.9C612.7 588.7 618.4 599.2 620.0 601.9M620.0 588.9C618.1 591.4 610.3 602.7 606.7 606.7C603.1 610.6 596.5 615.2 594.8 616.6M620.0 588.9C623.4 588.5 637.0 586.3 643.7 586.5C650.5 586.7 664.1 589.5 667.5 590.0" fill="none" stroke="#fff" stroke-width="2.36" stroke-linejoin="round" stroke-linecap="round"/>
<path d="M134.1 123.7C135.9 122.3 143.7 116.9 146.7 114.2C149.7 111.5 151.2 108.2 155.1 104.8C159.0 101.4 169.2 94.1 174.0 90.5C178.8 87.0 183.6 82.6 188.6 79.6C193.7 76.7 203.6 72.6 209.6 70.2C215.6 67.8 224.3 64.8 230.6 62.9C236.8 60.9 250.3 57.5 253.6 56.6M232.7 8.4C233.3 10.5 235.4 18.3 236.8 23.1C238.3 27.8 241.0 37.4 243.1 41.9C245.2 46.4 249.1 50.0 251.5 54.5C253.9 59.0 257.2 68.0 259.9 73.4C262.6 78.8 267.7 87.4 270.4 92.2C273.1 97.0 275.5 102.1 278.8 106.9C282.1 111.7 290.1 119.6 293.4 125.8C296.7 131.9 300.6 146.6 301.8 150.1M540.6 21.0C541.2 23.4 546.3 31.7 544.8 37.7C543.3 43.7 534.0 55.7 530.1 62.9C526.2 70.1 520.8 81.7 517.5 88.0C514.2 94.3 508.2 100.9 507.0 106.9C505.8 112.9 508.5 124.9 509.1 130.0C509.7 135.0 510.9 140.7 511.2 142.5M787.7 0.0C786.8 3.3 784.4 16.5 781.4 23.1C778.4 29.6 770.6 39.8 766.7 46.1C762.8 52.4 757.7 63.3 754.1 67.1C750.6 70.8 745.2 68.4 741.6 72.3C738.0 76.2 733.2 86.7 729.0 94.3C724.8 102.0 716.4 119.8 712.2 125.8C708.0 131.7 703.2 133.5 699.6 136.2C696.1 138.9 691.3 143.1 687.1 144.6C682.9 146.1 672.7 146.4 670.3 146.7M781.4 27.2C780.8 30.8 776.9 46.7 777.2 52.4C777.5 58.1 779.9 63.8 783.5 67.1C787.1 70.4 798.9 72.8 802.4 75.5C805.8 78.2 807.6 82.6 807.6 85.9C807.6 89.2 802.2 95.1 802.4 98.5C802.5 102.0 805.3 108.4 808.6 110.0C811.9 111.7 822.4 108.4 825.4 110.0C828.4 111.7 830.2 116.6 829.6 121.6C829.0 126.5 823.0 140.6 821.2 144.6C819.4 148.7 817.6 149.3 817.0 150.0M807.6 85.9C808.9 83.5 814.2 73.4 817.0 69.2C819.9 65.0 823.9 59.6 827.5 56.6C831.1 53.6 838.0 50.2 842.2 48.2C846.4 46.3 854.2 42.7 856.8 43.0C859.5 43.3 858.0 50.2 861.0 50.3C864.0 50.5 873.0 47.0 877.8 44.0C882.6 41.0 891.9 35.6 894.6 29.3C897.3 23.1 896.4 4.2 896.7 0.0M12.6 150.0C14.7 151.2 21.6 155.1 27.2 158.4C32.9 161.7 44.9 169.5 52.4 173.1C59.9 176.6 70.4 181.7 79.6 183.5C88.9 185.3 110.8 185.6 117.4 185.6C124.0 185.6 122.2 184.7 125.8 183.5C129.4 182.3 137.7 178.4 142.5 177.2C147.3 176.1 154.8 176.5 159.3 175.2C163.8 173.8 171.3 169.9 174.0 167.8C176.7 165.7 177.4 163.0 178.2 160.5C178.9 157.9 179.2 151.5 179.4 150.0M0.0 183.5C0.6 186.2 2.7 197.6 4.2 202.4C5.7 207.2 9.7 209.6 10.5 217.1C11.2 224.6 9.4 246.4 9.4 254.8C9.4 263.2 11.5 269.3 10.5 275.8C9.4 282.2 3.3 296.6 2.1 300.0M79.6 183.5C78.9 185.9 73.8 195.8 74.4 200.3C75.0 204.8 81.0 210.8 83.8 215.0C86.7 219.2 92.4 225.8 94.3 229.6C96.3 233.5 97.8 238.0 97.5 242.2C97.2 246.4 93.1 254.2 92.2 259.0C91.3 263.8 90.7 269.9 91.2 275.8C91.6 281.6 94.8 296.6 95.4 300.0M125.8 183.5C124.6 187.4 120.1 204.2 117.4 210.8C114.7 217.4 109.4 225.2 106.9 229.6C104.4 234.1 100.6 240.4 99.6 242.2M159.3 186.7C161.1 188.5 168.9 196.9 171.9 199.3C174.9 201.7 174.3 202.4 180.3 203.4C186.2 204.5 207.2 206.4 213.8 206.6C220.4 206.7 224.6 204.8 226.4 204.5M213.8 206.6C213.6 208.1 213.6 213.8 212.7 217.1C211.8 220.4 209.8 226.4 207.5 229.6C205.3 232.9 199.7 237.1 197.0 240.1C194.3 243.1 192.2 248.7 188.6 250.6C185.0 252.6 177.9 253.9 171.9 253.8C165.9 253.6 151.2 249.1 146.7 249.6C142.2 250.0 143.1 256.7 140.4 256.9C137.7 257.0 131.2 252.1 127.9 250.6C124.6 249.1 118.9 247.0 117.4 246.4M232.7 187.7C231.8 188.8 227.1 192.7 226.4 195.1C225.6 197.5 225.9 201.4 227.4 204.5C228.9 207.6 234.3 214.5 236.8 217.1C239.4 219.6 243.4 220.5 245.2 222.3C247.0 224.1 244.0 228.5 249.4 229.6C254.8 230.8 275.5 230.1 283.0 230.7C290.4 231.3 298.0 233.1 301.8 233.8C305.7 234.6 308.8 235.6 310.0 235.9M456.7 150.0C457.9 153.0 462.4 165.0 465.1 171.0C467.8 176.9 472.9 187.1 475.6 191.9C478.3 196.7 479.8 199.4 484.0 204.5C488.2 209.6 501.6 222.8 504.9 227.6C508.2 232.3 507.3 234.1 507.0 238.0C506.7 241.9 504.0 250.6 502.8 254.8C501.6 259.0 499.2 265.6 498.6 267.4M553.1 150.0C552.2 151.8 548.9 158.1 546.8 162.6C544.8 167.1 540.0 175.8 538.5 181.4C537.0 187.1 537.0 196.4 536.4 202.4C535.8 208.4 535.2 218.9 534.3 223.4C533.4 227.9 531.9 229.9 530.1 233.8C528.3 237.7 524.4 245.8 521.7 250.6C519.0 255.4 512.7 265.0 511.2 267.4M671.9 150.0C673.1 153.9 678.6 168.9 680.8 177.2C683.0 185.6 685.3 199.7 687.1 208.7C688.9 217.7 691.6 232.3 693.4 240.1C695.2 247.9 698.2 257.5 699.6 263.2C701.1 268.9 702.6 274.7 703.8 280.0C705.0 285.2 707.4 297.2 708.0 300.0M871.5 150.0C871.2 150.9 870.6 154.8 869.4 156.3C868.2 157.8 867.3 159.9 863.1 160.5C858.9 161.1 846.1 160.3 840.1 160.5C834.1 160.6 826.6 160.6 821.2 161.5C815.8 162.4 806.5 164.8 802.4 166.8C798.2 168.7 794.9 172.2 791.9 175.2C788.9 178.1 784.4 185.0 781.4 187.7C778.4 190.4 773.3 191.6 770.9 194.0C768.5 196.4 766.4 201.2 764.6 204.5C762.8 207.8 759.5 213.5 758.3 217.1C757.1 220.7 757.4 226.4 756.2 229.6C755.0 232.9 753.2 237.1 750.0 240.1C746.7 243.1 738.9 247.3 733.2 250.6C727.5 253.9 714.9 260.8 710.1 263.2C705.3 265.6 701.1 266.8 699.6 267.4M699.6 267.4C697.3 267.7 687.1 268.3 682.9 269.5C678.7 270.7 672.0 271.4 670.3 275.8C668.7 280.1 671.2 296.6 671.4 300.0M0.0 337.7C1.5 336.5 5.1 331.4 10.5 329.3C15.9 327.2 32.9 325.2 37.7 323.1C42.5 321.0 43.1 315.9 44.0 314.7M37.7 323.1C38.0 325.8 40.4 336.8 39.8 341.9C39.2 347.0 35.9 353.6 33.5 358.7C31.1 363.8 26.1 371.6 23.1 377.6C20.1 383.5 15.0 393.7 12.6 400.6C10.2 407.5 8.1 420.7 6.3 425.8C4.5 430.9 0.9 434.7 0.0 436.2M2.1 300.0C2.1 304.5 0.3 322.8 2.1 331.4C3.9 340.1 13.8 354.2 14.7 360.8C15.6 367.4 9.9 370.7 8.4 377.6C6.9 384.4 4.9 398.6 4.2 409.0C3.5 419.3 3.7 444.2 3.6 450.0M146.2 300.0C146.7 303.9 152.8 320.7 149.9 327.2C146.9 333.8 131.3 343.1 125.8 346.1C120.2 349.1 113.2 347.9 111.1 348.2M231.3 450.0C232.1 447.4 235.0 435.0 236.8 431.4C238.7 427.8 241.8 426.4 244.6 424.7C247.4 423.0 254.4 421.7 256.6 419.3C258.7 416.9 257.6 411.5 259.9 407.9C262.2 404.4 267.7 396.0 272.5 394.3C277.3 392.7 288.1 397.0 293.4 396.4C298.8 395.8 307.6 391.0 310.0 390.1M310.0 305.2C311.8 306.0 318.4 308.5 322.6 310.5C326.8 312.4 333.7 315.6 339.3 318.9C345.0 322.2 358.5 328.7 362.4 333.5C366.3 338.3 366.3 347.3 366.6 352.4C366.9 357.5 363.9 365.6 364.5 369.2C365.1 372.8 366.6 375.8 370.8 377.6C375.0 379.3 388.2 379.3 393.8 381.7C399.5 384.1 406.1 390.7 410.6 394.3C415.1 397.9 422.9 404.2 425.3 406.9C427.7 409.6 427.1 412.3 427.4 413.2M383.4 300.0C383.1 301.8 383.1 309.3 381.3 312.6C379.5 315.9 373.5 320.1 370.8 323.1C368.1 326.1 363.6 332.0 362.4 333.5M381.3 312.6C383.1 312.9 388.2 314.4 393.8 314.7C399.5 315.0 414.5 313.9 421.1 314.7C427.7 315.4 436.4 318.4 440.0 319.9C443.5 321.4 445.3 324.4 446.2 325.2M446.2 325.2C447.1 327.5 451.3 337.4 452.5 341.9C453.7 346.4 454.9 352.7 454.6 356.6C454.3 360.5 450.4 365.3 450.4 369.2C450.4 373.1 452.5 379.3 454.6 383.8C456.7 388.3 461.5 396.4 465.1 400.6C468.7 404.8 475.0 409.9 479.8 413.2C484.6 416.5 494.1 421.3 498.6 423.7C503.1 426.1 508.2 426.7 511.2 430.0C514.2 433.2 518.4 444.3 519.6 446.7M567.8 300.0C566.9 304.5 562.0 324.6 561.5 331.4C561.1 338.3 565.0 343.7 564.7 348.2C564.4 352.7 561.4 359.3 559.4 362.9C557.5 366.5 552.2 371.9 551.0 373.4M465.1 450.1C468.4 449.3 480.4 445.1 488.2 444.6C495.9 444.1 512.1 446.7 519.6 446.7C527.1 446.7 531.6 445.2 540.6 444.6C549.5 444.0 573.5 444.0 582.5 442.5C591.5 441.0 599.0 436.5 603.4 434.1C607.9 431.7 612.4 427.0 613.9 425.8M708.0 300.0C708.6 303.0 711.0 315.0 712.2 321.0C713.4 326.9 716.1 336.2 716.4 341.9C716.7 347.6 714.6 358.1 714.3 360.8M620.0 335.1C624.5 335.5 641.0 337.2 651.4 337.7C661.9 338.3 684.1 337.9 693.4 338.8C702.6 339.7 711.3 342.1 716.4 344.0C721.5 346.0 723.6 351.4 729.0 352.4C734.4 353.4 748.8 352.3 754.1 351.4C759.5 350.5 759.8 347.2 766.7 346.1C773.6 345.1 794.6 345.5 802.4 344.0C810.1 342.5 815.5 337.7 821.2 335.6C826.9 333.5 837.4 329.5 842.2 329.3C847.0 329.2 850.6 330.1 854.8 334.6C858.9 339.1 866.4 354.9 871.5 360.8C876.6 366.6 886.2 371.6 890.4 375.5C894.6 379.3 898.2 383.8 900.9 388.0C903.6 392.2 907.8 398.8 909.2 404.8C910.7 410.8 912.1 423.5 911.3 430.0C910.6 436.4 905.0 447.2 903.9 450.0M802.4 344.0C802.7 345.8 805.6 352.7 804.4 356.6C803.3 360.5 799.1 368.0 794.0 371.3C788.9 374.6 775.4 379.0 768.8 379.6C762.2 380.2 752.9 374.6 747.9 375.5C742.8 376.4 738.0 382.6 733.2 385.9C728.4 389.2 720.0 394.5 714.3 398.5C708.6 402.6 699.9 410.9 693.4 414.2C686.8 417.5 675.7 419.9 668.2 421.6C660.7 423.2 647.8 423.5 641.0 425.8C634.1 428.0 623.0 435.6 620.0 437.3M871.5 360.8C869.1 362.0 857.7 365.9 854.8 369.2C851.8 372.5 853.6 378.2 850.6 383.8C847.6 389.5 840.7 404.8 833.8 409.0C826.9 413.2 808.3 410.2 802.4 413.2C796.4 416.2 794.4 424.7 791.9 430.0C789.3 435.2 785.6 447.2 784.5 450.0M3.6 450.0C4.2 453.4 6.8 468.3 8.3 473.7C9.8 479.2 13.1 484.6 14.2 488.0C15.4 491.4 17.0 494.8 16.6 497.5C16.3 500.2 10.9 502.6 11.9 507.0C12.9 511.4 21.4 522.2 23.7 528.3C26.1 534.4 27.1 541.9 28.5 549.7C29.8 557.5 31.9 573.4 33.2 582.9C34.6 592.5 37.3 611.8 38.0 616.6M0.0 472.5C6.1 473.1 31.9 475.8 42.7 476.1C53.6 476.4 64.4 475.3 76.0 474.9C87.5 474.6 110.5 475.3 123.4 473.7C136.3 472.2 156.9 467.6 166.2 464.2C175.4 460.9 185.1 452.1 188.3 450.0M0.0 457.1C5.1 457.3 29.5 455.9 35.6 458.3C41.7 460.7 40.7 469.5 42.7 473.7C44.8 478.0 48.8 484.2 49.8 488.0C50.9 491.7 48.8 495.4 49.8 499.8C50.9 504.3 56.0 516.1 57.0 518.8M0.0 504.6C2.0 504.9 9.2 506.0 14.2 507.0C19.3 508.0 29.5 510.0 35.6 511.7C41.7 513.4 50.5 516.8 57.0 518.8C63.4 520.9 74.6 526.0 80.7 526.0C86.8 526.0 93.9 520.9 99.7 518.8C105.5 516.8 115.0 511.9 121.1 511.7C127.2 511.5 135.3 517.5 142.4 517.6C149.5 517.8 166.2 514.8 170.9 512.9C175.7 511.0 170.2 507.8 175.7 504.6C181.1 501.4 203.1 495.1 208.9 490.4C214.6 485.6 213.6 474.2 216.0 471.4C218.4 468.5 223.3 473.2 225.5 470.2C227.7 467.1 230.5 452.9 231.3 450.0M96.0 450.0C98.2 451.7 107.6 458.5 111.6 461.9C115.5 465.3 121.1 471.0 123.4 473.7C125.8 476.4 127.5 479.8 128.2 480.9M85.5 526.0C87.5 528.3 95.6 538.8 99.7 542.6C103.8 546.3 110.9 549.2 113.9 552.1C117.0 554.9 117.0 561.1 121.1 562.7C125.1 564.4 136.7 562.4 142.4 563.9C148.2 565.5 152.6 570.2 161.4 573.4C170.2 576.7 194.6 583.1 204.1 586.5C213.6 589.9 221.1 592.9 227.9 597.2C234.7 601.5 248.2 613.9 251.6 616.6M170.9 512.9C171.6 514.4 172.9 521.4 175.7 523.6C178.4 525.8 185.5 526.3 189.9 528.3C194.3 530.4 201.8 535.6 206.5 537.8C211.3 540.0 218.0 544.8 223.1 543.8C228.2 542.7 237.0 532.9 242.1 530.7C247.2 528.5 252.6 527.3 258.7 528.3C264.8 529.3 279.3 535.4 284.8 537.8C290.3 540.3 295.4 544.3 297.2 545.4M360.1 450.0C358.7 452.1 352.4 460.5 350.4 464.2C348.3 468.0 345.6 471.7 345.6 476.1C345.6 480.5 350.4 490.0 350.4 495.1C350.4 500.2 341.2 507.6 345.6 511.7C350.0 515.8 374.1 519.9 381.2 523.6C388.3 527.3 391.4 534.1 395.5 537.8C399.5 541.6 405.6 546.6 409.7 549.7C413.8 552.7 421.9 557.8 423.9 559.2M423.9 559.2C425.0 560.5 429.7 563.9 431.1 568.7C432.4 573.4 431.7 587.7 433.4 592.4C435.1 597.2 437.5 599.9 442.9 601.9C448.4 603.9 466.0 604.6 471.4 606.7C476.8 608.8 479.5 615.2 480.9 616.6M700.2 450.0C700.6 454.4 704.0 473.1 703.1 480.9C702.1 488.7 697.3 498.8 693.6 504.6C689.9 510.4 679.3 518.8 677.0 521.2M620.0 469.0C620.5 469.7 623.2 468.0 623.6 473.7C623.9 479.5 622.5 504.3 622.4 509.3M903.9 450.0C904.5 452.4 908.3 462.9 908.4 466.6C908.5 470.3 904.3 469.0 904.8 476.1C905.3 483.2 910.0 508.7 912.0 516.5C913.9 524.3 917.7 528.7 918.6 530.7" fill="none" stroke="#fff" stroke-width="2.60" stroke-linejoin="round" stroke-linecap="round"/>
<path d="M57.8 450.0C60.9 448.4 73.8 442.1 79.6 438.3C85.5 434.6 92.8 427.9 98.5 423.7C104.2 419.5 115.6 412.3 119.5 409.0C123.4 405.7 122.5 403.3 125.8 400.6C129.1 397.9 140.1 391.6 142.5 390.1M188.3 450.0C189.7 449.0 195.4 445.3 197.9 442.5C200.3 439.7 203.4 432.2 205.6 430.4C207.8 428.5 209.9 431.1 213.4 429.5C216.9 427.9 226.3 422.0 230.1 419.3C234.0 416.5 237.1 412.9 240.2 410.3C243.3 407.6 248.1 405.0 251.5 400.6C254.9 396.2 261.4 386.5 264.1 379.6C266.8 372.8 268.0 359.9 270.4 352.4C272.8 344.9 277.6 332.9 280.9 327.2C284.2 321.6 289.3 315.7 293.4 312.6C297.6 309.4 307.6 306.3 310.0 305.2M393.8 314.7C394.1 318.6 395.0 335.0 395.9 341.9C396.8 348.8 399.2 357.5 400.1 362.9C401.0 368.3 403.1 374.3 402.2 379.6C401.3 385.0 396.5 395.2 393.8 400.6C391.1 406.0 386.7 412.3 383.4 417.4C380.1 422.5 374.1 431.6 370.8 436.2C367.5 440.9 361.6 448.1 360.1 450.0M412.7 358.7C413.9 356.3 417.8 346.1 421.1 341.9C424.4 337.7 432.2 331.7 435.8 329.3C439.4 326.9 442.0 326.5 446.2 325.2C450.4 323.8 460.6 321.1 465.1 319.9C469.6 318.7 475.9 317.2 477.7 316.8M310.0 524.8C312.0 522.2 318.5 511.2 324.2 507.0C330.0 502.7 340.5 497.5 350.4 495.1C360.2 492.7 385.6 493.4 393.1 490.4C400.5 487.3 399.2 476.6 402.6 473.7C406.0 470.9 409.0 470.5 416.8 470.2C424.6 469.8 450.4 470.9 457.2 471.4C463.9 471.9 460.9 472.4 464.3 473.7C467.7 475.1 477.2 479.2 480.9 480.9C484.6 482.6 484.3 484.6 490.4 485.6C496.5 486.6 517.2 488.0 523.6 488.0C530.1 488.0 531.1 487.0 535.5 485.6C539.9 484.2 549.4 481.2 554.5 478.5C559.6 475.8 566.7 469.0 571.1 466.6C575.5 464.2 578.4 463.7 585.3 461.9C592.3 460.0 615.0 454.7 620.0 453.6M530.8 572.2C534.8 572.4 551.4 571.9 559.2 573.4C567.0 575.0 576.7 580.9 585.3 582.9C594.0 585.0 615.0 587.0 620.0 587.7M620.0 453.6C622.7 454.1 633.6 454.6 639.0 457.1C644.4 459.7 652.2 468.1 658.0 471.4C663.7 474.6 672.9 478.3 679.3 479.7C685.8 481.0 695.3 480.9 703.1 480.9C710.9 480.9 726.8 480.7 733.9 479.7C741.1 478.7 748.9 475.9 752.9 473.7C757.0 471.5 760.7 466.6 762.4 464.2C764.1 461.9 761.6 459.2 764.8 457.1C768.0 455.1 781.7 451.0 784.5 450.0M698.3 540.2C697.0 541.6 693.2 547.7 688.8 549.7C684.4 551.7 673.9 551.7 667.5 554.4C661.0 557.2 650.5 563.9 643.7 568.7C637.0 573.4 623.4 585.0 620.0 587.7M620.0 526.0C623.4 528.0 635.3 537.1 643.7 540.2C652.2 543.3 674.3 546.3 679.3 547.3" fill="none" stroke="#fff" stroke-width="2.95" stroke-linejoin="round" stroke-linecap="round"/>
<path d="M9.4 0.0C12.0 1.9 22.2 9.1 27.2 13.6C32.3 18.1 41.6 25.9 45.1 31.4C48.5 37.0 47.6 46.7 51.4 52.4C55.1 58.1 64.2 65.6 71.3 71.3C78.3 77.0 92.2 86.4 100.6 92.2C109.0 98.1 123.4 108.2 130.0 112.1C136.5 116.0 139.5 117.8 146.7 119.5C153.9 121.2 171.3 122.0 180.3 124.1C189.2 126.2 201.5 131.8 209.6 134.1C217.7 136.5 228.5 138.6 236.8 140.4C245.2 142.2 262.0 145.3 268.3 146.7C274.6 148.1 279.1 149.6 280.9 150.1" fill="none" stroke="#fff" stroke-width="3.07" stroke-linejoin="round" stroke-linecap="round"/>
<rect x="57.3" y="44.5" width="20.0" height="12" rx="2" fill="#3a3a3a"/>
<text x="67.3" y="53.3" text-anchor="middle" font-size="7.6" class="sh" textLength="14.0" lengthAdjust="spacingAndGlyphs">M61</text>
<rect x="202.7" y="127.5" width="20.0" height="12" rx="2" fill="#3a3a3a"/>
<text x="212.7" y="136.3" text-anchor="middle" font-size="7.6" class="sh" textLength="14.0" lengthAdjust="spacingAndGlyphs">M61</text>
<rect x="277.2" y="141.8" width="20.0" height="12" rx="2" fill="#3a3a3a"/>
<text x="287.2" y="150.6" text-anchor="middle" font-size="7.6" class="sh" textLength="14.0" lengthAdjust="spacingAndGlyphs">M61</text>
<rect x="588.9" y="9.2" width="36.7" height="12" rx="2" fill="#3a3a3a"/>
<text x="607.2" y="18.0" text-anchor="middle" font-size="7.6" class="sh" textLength="30.7" lengthAdjust="spacingAndGlyphs">A627(M)</text>
<rect x="548.9" y="45.4" width="21.0" height="12" rx="2" fill="#3a3a3a"/>
<text x="559.4" y="54.2" text-anchor="middle" font-size="7.6" class="sh" textLength="15.0" lengthAdjust="spacingAndGlyphs">M62</text>
<rect x="471.4" y="124.0" width="21.0" height="12" rx="2" fill="#3a3a3a"/>
<text x="481.9" y="132.8" text-anchor="middle" font-size="7.6" class="sh" textLength="15.0" lengthAdjust="spacingAndGlyphs">M60</text>
<rect x="298.1" y="262.7" width="26.0" height="12" rx="2" fill="#3a3a3a"/>
<text x="311.1" y="271.5" text-anchor="middle" font-size="7.6" class="sh" textLength="20.0" lengthAdjust="spacingAndGlyphs">M602</text>
<rect x="358.4" y="169.8" width="21.0" height="12" rx="2" fill="#3a3a3a"/>
<text x="368.9" y="178.6" text-anchor="middle" font-size="7.6" class="sh" textLength="15.0" lengthAdjust="spacingAndGlyphs">M60</text>
<rect x="232.0" y="344.9" width="21.0" height="12" rx="2" fill="#3a3a3a"/>
<text x="242.5" y="353.7" text-anchor="middle" font-size="7.6" class="sh" textLength="15.0" lengthAdjust="spacingAndGlyphs">M62</text>
<rect x="168.7" y="376.4" width="21.0" height="12" rx="2" fill="#3a3a3a"/>
<text x="179.2" y="385.2" text-anchor="middle" font-size="7.6" class="sh" textLength="15.0" lengthAdjust="spacingAndGlyphs">M62</text>
<rect x="68.8" y="423.5" width="18.0" height="12" rx="2" fill="#3a3a3a"/>
<text x="77.8" y="432.3" text-anchor="middle" font-size="7.6" class="sh" textLength="12.0" lengthAdjust="spacingAndGlyphs">M6</text>
<rect x="483.4" y="302.0" width="30.4" height="12" rx="2" fill="#3a3a3a"/>
<text x="498.6" y="310.8" text-anchor="middle" font-size="7.6" class="sh" textLength="24.4" lengthAdjust="spacingAndGlyphs">A57(M)</text>
<rect x="751.6" y="332.4" width="21.0" height="12" rx="2" fill="#3a3a3a"/>
<text x="762.1" y="341.2" text-anchor="middle" font-size="7.6" class="sh" textLength="15.0" lengthAdjust="spacingAndGlyphs">M67</text>
<rect x="639.5" y="352.7" width="21.0" height="12" rx="2" fill="#3a3a3a"/>
<text x="650.0" y="361.5" text-anchor="middle" font-size="7.6" class="sh" textLength="15.0" lengthAdjust="spacingAndGlyphs">M60</text>
<rect x="298.3" y="558.0" width="21.0" height="12" rx="2" fill="#3a3a3a"/>
<text x="308.8" y="566.8" text-anchor="middle" font-size="7.6" class="sh" textLength="15.0" lengthAdjust="spacingAndGlyphs">M56</text>
<text x="5.8" y="29" textLength="44.3" lengthAdjust="spacingAndGlyphs" font-size="12" class="lb">Blackrod</text>
<text x="64.1" y="29" textLength="43.6" lengthAdjust="spacingAndGlyphs" font-size="12" class="lb">Horwich</text>
<text x="223.9" y="59" textLength="37.6" lengthAdjust="spacingAndGlyphs" font-size="13" class="lb">Bolton</text>
<text x="70.3" y="132" textLength="76.2" lengthAdjust="spacingAndGlyphs" font-size="12" class="lb">Westhoughton</text>
<text x="241.2" y="130" textLength="52.2" lengthAdjust="spacingAndGlyphs" font-size="12" class="lb">Farnworth</text>
<text x="403.9" y="33" textLength="26.5" lengthAdjust="spacingAndGlyphs" font-size="12" class="lb">Bury</text>
<text x="509.0" y="25" textLength="48.7" lengthAdjust="spacingAndGlyphs" font-size="12" class="lb">Heywood</text>
<text x="350.9" y="94" textLength="44.1" lengthAdjust="spacingAndGlyphs" font-size="12" class="lb">Radcliffe</text>
<text x="409.6" y="126" textLength="52.9" lengthAdjust="spacingAndGlyphs" font-size="12" class="lb">Whitefield</text>
<text x="690.8" y="55" textLength="26.6" lengthAdjust="spacingAndGlyphs" font-size="12" class="lb">Shaw</text>
<text x="641.5" y="82" textLength="36.5" lengthAdjust="spacingAndGlyphs" font-size="12" class="lb">Royton</text>
<text x="610.3" y="137" textLength="61.0" lengthAdjust="spacingAndGlyphs" font-size="12" class="lb">Chadderton</text>
<text x="100.6" y="251" textLength="28.2" lengthAdjust="spacingAndGlyphs" font-size="12" class="lb">Leigh</text>
<text x="415.4" y="165" textLength="48.5" lengthAdjust="spacingAndGlyphs" font-size="12" class="lb">Prestwich</text>
<text x="421.7" y="268" textLength="39.3" lengthAdjust="spacingAndGlyphs" font-size="12" class="lb">Salford</text>
<text x="455.7" y="292" textLength="70.7" lengthAdjust="spacingAndGlyphs" font-size="14.5" class="lb">Manchester</text>
<text x="609.2" y="291" textLength="51.4" lengthAdjust="spacingAndGlyphs" font-size="12" class="lb">Droylsden</text>
<text x="769.4" y="211" textLength="41.3" lengthAdjust="spacingAndGlyphs" font-size="12" class="lb">Mossley</text>
<text x="719.5" y="268" textLength="97.9" lengthAdjust="spacingAndGlyphs" font-size="12" class="lb">Ashton-under-Lyne</text>
<text x="728.5" y="283" textLength="57.9" lengthAdjust="spacingAndGlyphs" font-size="12" class="lb">Stalybridge</text>
<text x="711.8" y="299" textLength="52.9" lengthAdjust="spacingAndGlyphs" font-size="12" class="lb">Dukinfield</text>
<text x="231.2" y="385" textLength="26.5" lengthAdjust="spacingAndGlyphs" font-size="12" class="lb">Irlam</text>
<text x="323.9" y="367" textLength="44.2" lengthAdjust="spacingAndGlyphs" font-size="12" class="lb">Urmston</text>
<text x="376.7" y="373" textLength="45.3" lengthAdjust="spacingAndGlyphs" font-size="12" class="lb">Stretford</text>
<text x="379.8" y="417" textLength="20.4" lengthAdjust="spacingAndGlyphs" font-size="12" class="lb">Sale</text>
<text x="637.9" y="346" textLength="38.3" lengthAdjust="spacingAndGlyphs" font-size="12" class="lb">Denton</text>
<text x="711.8" y="350" textLength="26.7" lengthAdjust="spacingAndGlyphs" font-size="12" class="lb">Hyde</text>
<text x="804.6" y="321" textLength="66.7" lengthAdjust="spacingAndGlyphs" font-size="12" class="lb">Longdendale</text>
<text x="782.6" y="378" textLength="68.4" lengthAdjust="spacingAndGlyphs" font-size="12" class="lb">Broadbottom</text>
<text x="892.0" y="377" textLength="27.1" lengthAdjust="spacingAndGlyphs" font-size="12" class="lb">Gloss</text>
<text x="142.7" y="526" textLength="31.1" lengthAdjust="spacingAndGlyphs" font-size="12" class="lb">Lymm</text>
<text x="321.9" y="508" textLength="56.2" lengthAdjust="spacingAndGlyphs" font-size="12" class="lb">Altrincham</text>
<text x="584.4" y="457" textLength="55.0" lengthAdjust="spacingAndGlyphs" font-size="13" class="lb">Stockport</text>
<text x="733.4" y="485" textLength="36.5" lengthAdjust="spacingAndGlyphs" font-size="12" class="lb">Marple</text>
<text x="716.3" y="558" textLength="51.7" lengthAdjust="spacingAndGlyphs" font-size="12" class="lb">High Lane</text>
<text x="807.0" y="554" textLength="50.3" lengthAdjust="spacingAndGlyphs" font-size="12" class="lb">New Mills</text>
<text x="623.1" y="601" textLength="42.4" lengthAdjust="spacingAndGlyphs" font-size="12" class="lb">Poynton</text>
<text x="196.6" y="9" textLength="54.8" lengthAdjust="spacingAndGlyphs" font-size="7.8" class="ls">ASTLEY BRIDGE</text>
<text x="736.5" y="129" textLength="44.9" lengthAdjust="spacingAndGlyphs" font-size="7.8" class="ls">SCOUTHEAD</text>
<text x="129.1" y="188" textLength="39.1" lengthAdjust="spacingAndGlyphs" font-size="7.8" class="ls">ATHERTON</text>
<text x="256.4" y="204" textLength="36.1" lengthAdjust="spacingAndGlyphs" font-size="7.8" class="ls">WALKDEN</text>
<text x="510.8" y="213" textLength="44.5" lengthAdjust="spacingAndGlyphs" font-size="7.8" class="ls">HARPURHEY</text>
<text x="344.2" y="282" textLength="26.5" lengthAdjust="spacingAndGlyphs" font-size="7.8" class="ls">ECCLES</text>
<text x="624.3" y="167" textLength="39.5" lengthAdjust="spacingAndGlyphs" font-size="7.8" class="ls">HAWKSLEY</text>
<text x="622.1" y="175" textLength="43.9" lengthAdjust="spacingAndGlyphs" font-size="7.8" class="ls">INDUSTRIAL</text>
<text x="631.6" y="183" textLength="24.9" lengthAdjust="spacingAndGlyphs" font-size="7.8" class="ls">ESTATE</text>
<text x="729.5" y="154" textLength="16.7" lengthAdjust="spacingAndGlyphs" font-size="7.8" class="ls">LEES</text>
<text x="89.2" y="355" textLength="39.1" lengthAdjust="spacingAndGlyphs" font-size="7.8" class="ls">CULCHETH</text>
<text x="87.2" y="407" textLength="23.5" lengthAdjust="spacingAndGlyphs" font-size="7.8" class="ls">RISLEY</text>
<text x="460.1" y="341" textLength="39.0" lengthAdjust="spacingAndGlyphs" font-size="7.8" class="ls">MOSS SIDE</text>
<text x="488.3" y="395" textLength="49.1" lengthAdjust="spacingAndGlyphs" font-size="7.8" class="ls">WITHINGTON</text>
<text x="227.4" y="565" textLength="46.7" lengthAdjust="spacingAndGlyphs" font-size="7.8" class="ls">MILLINGTON</text>
<text x="418.2" y="479" textLength="33.4" lengthAdjust="spacingAndGlyphs" font-size="7.8" class="ls">BAGULEY</text>
<text x="502.2" y="544" textLength="50.8" lengthAdjust="spacingAndGlyphs" font-size="7.8" class="ls">HEALD GREEN</text>
<text x="833.1" y="481" textLength="38.2" lengthAdjust="spacingAndGlyphs" font-size="7.8" class="ls">ROWARTH</text>
<text x="862.5" y="620" textLength="42.9" lengthAdjust="spacingAndGlyphs" font-size="7.8" class="ls">BUXWORTH</text>
<circle cx="385.7" cy="97.5" r="17.4" class="bub"/>
<circle cx="246.3" cy="168.4" r="19.9" class="bub"/>
<circle cx="474.7" cy="224.6" r="25.2" class="bub"/>
<circle cx="618.2" cy="215.4" r="25.2" class="bub"/>
<circle cx="530.9" cy="278.3" r="9.9" class="bub"/>
<circle cx="489.2" cy="314.7" r="16.0" class="bub"/>
<circle cx="524.4" cy="309.4" r="29.0" class="bub"/>
<circle cx="521.7" cy="345.1" r="33.5" class="bub"/>
<circle cx="672.0" cy="342.5" r="21.0" class="bub"/>
<circle cx="468.3" cy="518.1" r="15.4" class="bub"/>
<path d="M5.48 592.09 L8.72 593.50 L8.72 603.85 L13.59 601.62 L11.16 600.60 L9.94 597.76 L16.63 600.20 L16.63 603.04 L8.52 607.90 L5.48 606.49 Z" fill="#0c0c0c"/>
<text x="20.5" y="605.0" textLength="24.6" lengthAdjust="spacingAndGlyphs" font-size="13.3" fill="#3a3a3a">Bing</text>
<text x="754.1" y="611.0" textLength="112" lengthAdjust="spacingAndGlyphs" font-size="8.4" fill="#2a2a2a">© 2019 Microsoft Corporation</text>
<text x="871.1" y="611.0" textLength="23.8" lengthAdjust="spacingAndGlyphs" font-size="8.4" fill="#4a5fc1" text-decoration="underline">Terms</text>
</svg>
<div class="b" style="left:890.5px;top:4.0px;width:24.5px;height:22.0px;background:#fff"></div>
<div class="b" style="left:918.5px;top:4.0px;width:25.5px;height:22.0px;background:#fff"></div>
<div class="b" style="left:947.0px;top:4.0px;width:20.2px;height:22.0px;background:#fff"></div>
<svg class="ic" style="left:893.5px;top:7px" width="18" height="16" viewBox="0 0 18 16" fill="none" stroke="#8c8c8c" stroke-width="1"><path d="M1.2 1 H16.8 L10.4 8.6 V14.6 H7.6 V8.6 Z" stroke-linejoin="round"/></svg>
<svg class="ic" style="left:922.5px;top:9.5px" width="16" height="13" viewBox="0 0 16 13" fill="none" stroke="#8c8c8c" stroke-width="1"><rect x="0.8" y="1" width="14" height="11.2"/><path d="M0.8 7.4 H6.6 V12.2"/><path d="M9 6.6 L14 1.6 M10.6 1.4 H14.2 V5"/></svg>
<svg class="ic" style="left:948px;top:10px" width="20" height="10" viewBox="0 0 20 10" fill="#777"><circle cx="4" cy="4.8" r="1.15"/><circle cx="10.2" cy="4.8" r="1.15"/><circle cx="16.3" cy="4.8" r="1.15"/></svg>
<svg class="ic" style="left:0;top:686px" width="1268" height="10" viewBox="0 0 1268 10"><path d="M47 5.5 H1267" fill="none" stroke="#4f4f4f" stroke-width="1.5" stroke-linecap="round" stroke-dasharray="0.01 3.2"/></svg>
<div class="b" style="left:1268.0px;top:2.0px;width:1.0px;height:714.0px;background:#d6d6d6"></div>
<div class="b" style="left:1459.0px;top:2.0px;width:20.0px;height:714.0px;background:#f3f2f1"></div>
<svg class="ic" style="left:1279.5px;top:15.5px" width="18" height="16" viewBox="0 0 18 16" fill="none" stroke="#444" stroke-width="1.1"><path d="M1.2 1 H16.4 L10.2 8.4 V14.2 H7.4 V8.4 Z" stroke-linejoin="round"/></svg>
<span class="t" style="left:1303.6px;top:16.00px;font-size:13.6px;color:#3a3a3a;letter-spacing:0.198px;font-weight:700;">Filters</span>
<svg class="ic" style="left:1410.2px;top:19.6px" width="13" height="9" viewBox="0 0 12.2 8.4" fill="none" stroke="#555" stroke-width="0.9"><path d="M0.8 4.9 C2.6 -0.8 9.8 -0.8 11.6 4.9" /><circle cx="6.2" cy="5.4" r="1.8"/></svg>
<svg class="ic" style="left:1440.9px;top:19.8px" width="8" height="11" viewBox="0 0 8 11" fill="none" stroke="#444" stroke-width="1.1"><path d="M0.9 0.8 L6.6 5.4 L0.9 10.2"/></svg>
<span class="t" style="left:1277.0px;top:50.00px;font-size:11.6px;color:#555;letter-spacing:-0.150px;">Filters on this visual</span>
<svg class="ic" style="left:1430px;top:51.3px" width="24" height="8" viewBox="0 0 24 8" fill="#5a5a5a"><circle cx="8.9" cy="4" r="1.05"/><circle cx="13.3" cy="4" r="1.05"/><circle cx="17.6" cy="4" r="1.05"/></svg>
<div class="b" style="left:1277.0px;top:67.0px;width:176.0px;height:48.0px;border:1px solid #dedede;border-radius:2px;background:#fff;box-sizing:border-box"></div>
<span class="t" style="left:1285.4px;top:74.00px;font-size:11.4px;color:#3f3f3f;letter-spacing:-0.863px;">NUMBER_OF_PATIENTS</span>
<span class="t" style="left:1285.4px;top:94.00px;font-size:11.6px;color:#3f3f3f;letter-spacing:-0.160px;">is (All)</span>
<div class="b" style="left:1277.0px;top:119.5px;width:176.0px;height:225.1px;border:1px solid #d6d6d6;border-radius:2px;background:#f3f2f1;box-sizing:border-box;box-shadow:0 1px 1px rgba(0,0,0,.12)"></div>
<span class="t" style="left:1285.4px;top:126.00px;font-size:11.2px;color:#252525;letter-spacing:-0.522px;font-weight:700;">POSTCODE</span>
<span class="t" style="left:1285.4px;top:147.00px;font-size:11.6px;color:#3f3f3f;letter-spacing:-0.355px;">top 10 by NUMBER_...</span>
<span class="t" style="left:1285.4px;top:171.00px;font-size:11.6px;color:#3f3f3f;letter-spacing:-0.073px;">Filter type</span>
<svg class="ic" style="left:1339.2px;top:172.5px" width="11" height="11" viewBox="0 0 11 11" fill="none" stroke="#555" stroke-width="0.8"><circle cx="5.5" cy="5.5" r="4.6"/><path d="M5.5 4.6 V8.2 M5.5 2.7 V3.6"/></svg>
<div class="b" style="left:1286.2px;top:188.6px;width:157.6px;height:22.6px;border:1px solid #dcdcdc;background:#fff;box-sizing:border-box"></div>
<span class="t" style="left:1292.4px;top:194.00px;font-size:11.6px;color:#333;letter-spacing:-0.301px;">Top N</span>
<svg class="ic" style="left:1431.8px;top:197.7px" width="5.6" height="5.2" viewBox="0 0 5.6 5.2"><path d="M0 0 H5.6 L2.8 5.2 Z" fill="#111"/></svg>
<span class="t" style="left:1285.4px;top:221.00px;font-size:11.6px;color:#3f3f3f;letter-spacing:-0.218px;">Show items:</span>
<div class="b" style="left:1286.2px;top:238.7px;width:70.7px;height:22.2px;border:1px solid #dcdcdc;background:#fff;box-sizing:border-box"></div>
<span class="t" style="left:1290.3px;top:244.00px;font-size:11.6px;color:#333;letter-spacing:-0.202px;">Top</span>
<svg class="ic" style="left:1344.4px;top:247.6px" width="5.6" height="5.2" viewBox="0 0 5.6 5.2"><path d="M0 0 H5.6 L2.8 5.2 Z" fill="#111"/></svg>
<div class="b" style="left:1360.9px;top:238.7px;width:82.9px;height:22.2px;border:1px solid #dcdcdc;background:#fff;box-sizing:border-box"></div>
<span class="t" style="left:1368.3px;top:244.00px;font-size:11.6px;color:#333;letter-spacing:-1.003px;">10</span>
<span class="t" style="left:1285.4px;top:271.00px;font-size:11.6px;color:#3f3f3f;letter-spacing:-0.327px;">By value</span>
<div class="b" style="left:1286.2px;top:288.4px;width:157.6px;height:22.5px;border:1px solid #d8d8d8;background:#f3f2f1;box-sizing:border-box"></div>
<div class="b" style="left:1288.3px;top:291.2px;width:152.9px;height:17.1px;border:1px solid #dcdcdc;background:#fff;box-sizing:border-box"></div>
<span class="t" style="left:1293.3px;top:294.00px;font-size:11.4px;color:#333;letter-spacing:-0.728px;">NUMBER_OF_PATIEN...</span>
<svg class="ic" style="left:1412px;top:296.4px" width="11" height="7" viewBox="0 0 11 7" fill="none" stroke="#555" stroke-width="0.9"><path d="M0.6 0.8 L5.5 5.8 L10.4 0.8"/></svg>
<svg class="ic" style="left:1428.6px;top:295.8px" width="9" height="8" viewBox="0 0 9 8" fill="none" stroke="#444" stroke-width="0.9"><path d="M0.6 0.5 L8.4 7.5 M8.4 0.5 L0.6 7.5"/></svg>
<span class="t" style="left:1388.6px;top:320.00px;font-size:11.6px;color:#b3b3b3;letter-spacing:0.168px;">Apply filter</span>
<div class="b" style="left:1277.0px;top:351.3px;width:176.0px;height:42.9px;border:1px solid #dedede;border-radius:2px;background:#fff;box-sizing:border-box"></div>
<span class="t" style="left:1313.5px;top:367.00px;font-size:11.6px;color:#666;letter-spacing:-0.036px;">Add data fields here</span>
<span class="t" style="left:1277.0px;top:414.00px;font-size:11.6px;color:#555;letter-spacing:-0.106px;">Filters on this page</span>
<svg class="ic" style="left:1430px;top:415.4px" width="24" height="8" viewBox="0 0 24 8" fill="#5a5a5a"><circle cx="8.9" cy="4" r="1.05"/><circle cx="13.3" cy="4" r="1.05"/><circle cx="17.6" cy="4" r="1.05"/></svg>
<div class="b" style="left:1277.0px;top:431.0px;width:176.0px;height:289.0px;border:1px solid #dedede;border-radius:2px;background:#fff;box-sizing:border-box"></div>
<span class="t" style="left:1285.4px;top:438.00px;font-size:11.4px;color:#3f3f3f;letter-spacing:-1.111px;">POSTCODE</span>
<svg class="ic" style="left:1388.3px;top:441.6px" width="12" height="7.4" viewBox="0 0 12 7.4" fill="none" stroke="#555" stroke-width="0.9"><path d="M0.6 6.6 L6 0.9 L11.4 6.6"/></svg>
<svg class="ic" style="left:1411.4px;top:441.2px" width="9" height="8" viewBox="0 0 9 8" fill="none" stroke="#555" stroke-width="0.9"><path d="M0.6 0.5 L8.4 7.5 M8.4 0.5 L0.6 7.5"/></svg>
<svg class="ic" style="left:1431.3px;top:438.8px" width="10" height="12.4" viewBox="0 0 10 12.4" fill="none" stroke="#555" stroke-width="0.9"><rect x="0.7" y="5.6" width="8.4" height="6.2"/><path d="M2.6 5.6 V3 C2.6 -0.2 7.4 -0.2 7.4 3 V3.6"/></svg>
<span class="t" style="left:1285.4px;top:458.00px;font-size:11.6px;color:#3f3f3f;letter-spacing:-0.160px;">is (All)</span>
<svg class="ic" style="left:1430.6px;top:460.6px" width="12" height="8.3" viewBox="0 0 12.2 8.4" fill="none" stroke="#666" stroke-width="0.9"><path d="M0.8 4.9 C2.6 -0.8 9.8 -0.8 11.6 4.9" /><circle cx="6.2" cy="5.4" r="1.8"/></svg>
<span class="t" style="left:1285.4px;top:482.00px;font-size:11.6px;color:#3f3f3f;letter-spacing:-0.073px;">Filter type</span>
<svg class="ic" style="left:1339.2px;top:482.6px" width="11" height="11" viewBox="0 0 11 11" fill="none" stroke="#555" stroke-width="0.8"><circle cx="5.5" cy="5.5" r="4.6"/><path d="M5.5 4.6 V8.2 M5.5 2.7 V3.6"/></svg>
<div class="b" style="left:1286.2px;top:553.6px;width:157.6px;height:23.3px;border:1px solid #dcdcdc;background:#fff;box-sizing:border-box"></div>
<span class="t" style="left:1293.3px;top:559.00px;font-size:11.6px;color:#333;letter-spacing:-0.115px;">contains</span>
<svg class="ic" style="left:1431.8px;top:562.6px" width="5.6" height="5.2" viewBox="0 0 5.6 5.2"><path d="M0 0 H5.6 L2.8 5.2 Z" fill="#111"/></svg>
<div class="b" style="left:1286.2px;top:580.2px;width:157.6px;height:24.0px;border:1px solid #dcdcdc;background:#fff;box-sizing:border-box"></div>
<div class="b" style="left:1285.0px;top:499.2px;width:160.2px;height:24.6px;border:1.6px solid #8db4f4;border-radius:3px;background:#fff;box-sizing:border-box"></div>
<span class="t" style="left:1292.1px;top:506.00px;font-size:11.6px;color:#333;letter-spacing:-0.007px;">Advanced filtering</span>
<svg class="ic" style="left:1431.8px;top:509.6px" width="5.6" height="5.2" viewBox="0 0 5.6 5.2"><path d="M0 0 H5.6 L2.8 5.2 Z" fill="#111"/></svg>
<div class="b" style="left:1284.2px;top:522.6px;width:157.8px;height:35.0px;background:#fff;border-left:1px solid #444;border-right:1px solid #444;border-top:1px solid #222;box-sizing:border-box"></div>
<div class="b" style="left:1285.0px;top:523.5px;width:156.2px;height:16.5px;background:#1e90ff"></div>
<span class="t" style="left:1290.6px;top:525.00px;font-size:12.2px;color:#fff;letter-spacing:-0.028px;">Advanced filtering</span>
<span class="t" style="left:1290.6px;top:542.00px;font-size:12.2px;color:#1a1a1a;letter-spacing:-0.139px;">Basic filtering</span>
<div class="b" style="left:1285.6px;top:616.6px;width:10.8px;height:10.8px;border:1px solid #666;border-radius:50%;background:#fff;box-sizing:border-box"></div>
<div class="b" style="left:1288.2px;top:619.2px;width:5.6px;height:5.6px;border-radius:50%;background:#222"></div>
<span class="t" style="left:1299.7px;top:617.00px;font-size:11.6px;color:#3f3f3f;letter-spacing:-0.170px;">And</span>
<div class="b" style="left:1342.6px;top:616.6px;width:10.8px;height:10.8px;border:1px solid #666;border-radius:50%;background:#fff;box-sizing:border-box"></div>
<span class="t" style="left:1356.7px;top:617.00px;font-size:11.6px;color:#3f3f3f;letter-spacing:0.714px;">Or</span>
<div class="b" style="left:1286.2px;top:642.0px;width:157.6px;height:22.6px;border:1px solid #dcdcdc;background:#fff;box-sizing:border-box"></div>
<svg class="ic" style="left:1431.8px;top:651.0px" width="5.6" height="5.2" viewBox="0 0 5.6 5.2"><path d="M0 0 H5.6 L2.8 5.2 Z" fill="#111"/></svg>
<div class="b" style="left:1286.2px;top:668.3px;width:157.6px;height:24.5px;border:1px solid #dcdcdc;background:#fff;box-sizing:border-box"></div>
<span class="t" style="left:1388.9px;top:703.00px;font-size:11.6px;color:#b3b3b3;letter-spacing:0.131px;">Apply filter</span>
<div class="b" style="left:1274.0px;top:117.0px;width:182.0px;height:233.0px;border:3px solid #fb383b;box-sizing:border-box"></div>
<div class="b" style="left:1276.0px;top:433.0px;width:181.0px;height:183.0px;border:3px solid #fb383b;box-sizing:border-box"></div>
<div class="b" style="left:1206.9px;top:140.7px;width:41.0px;height:41.0px;background:#fb4446;border-radius:50%;box-shadow:0 2.5px 4px rgba(0,0,0,.45)"></div>
<span class="t" style="left:1220.3px;top:144px;font-size:30.6px;color:#fff;-webkit-text-stroke:0.4px #fff">1</span>
<div class="b" style="left:1221.0px;top:169.0px;width:6.3px;height:4.0px;background:#fb4446"></div>
<div class="b" style="left:1230.8px;top:169.0px;width:7.7px;height:4.0px;background:#fb4446"></div>
<div class="b" style="left:1212.0px;top:467.9px;width:41.0px;height:41.0px;background:#fb4446;border-radius:50%;box-shadow:0 2.5px 4px rgba(0,0,0,.45)"></div>
<span class="t" style="left:1224px;top:471px;font-size:30.6px;color:#fff;-webkit-text-stroke:0.3px #fff">2</span>
<span class="t" style="left:1473.4px;top:18.00px;font-size:15.2px;color:#252525;font-weight:700;">Visualizations</span>
<div class="b" style="left:1460.0px;top:197.3px;width:19.0px;height:1.0px;background:#dcdcdc"></div>
<svg class="ic" style="left:1470px;top:55px" width="18" height="18" viewBox="0 0 18 18"><path d="M0.9 0.6 V16.6 H18" fill="none" stroke="#7a7a7a" stroke-width="1"/><rect x="1.8" y="3.4" width="3.1" height="4.5" fill="#b5b5b5"/><rect x="4.9" y="3.4" width="12" height="4.5" fill="#ee8a2c"/><rect x="1.8" y="9.8" width="5.6" height="4.5" fill="#b5b5b5"/><rect x="7.4" y="9.8" width="10" height="4.5" fill="#ee8a2c"/></svg>
<svg class="ic" style="left:1470px;top:79.5px" width="18" height="17" viewBox="0 0 18 17" fill="none"><path d="M0.9 0.4 V15.8 H18" stroke="#7a7a7a" stroke-width="1"/><path d="M1.6 9.8 L4.8 5.8 L7.6 8.6 L10 7.4" stroke="#4f86c6" stroke-width="1"/><path d="M1.8 13.6 L7.4 6.4 L10 5" stroke="#f0a58a" stroke-width="0.9"/></svg>
<svg class="ic" style="left:1470px;top:103.5px" width="18" height="17" viewBox="0 0 18 17" fill="none"><path d="M0.9 0.4 V15.8 H18" stroke="#7a7a7a" stroke-width="1"/><path d="M4.4 4.6 V14.6" stroke="#b9b9b9" stroke-width="1.7"/><path d="M6.2 3.4 L7.6 9 L9 6 L11 12" stroke="#e35b4a" stroke-width="1.4"/></svg>
<svg class="ic" style="left:1470px;top:128px" width="18" height="18" viewBox="0 0 18 18"><path d="M1 1.5 H18 V3.8 H2 Z M1.2 7.8 H18 V10 L7 16 Z" fill="#c2c2c2"/><path d="M1 4.4 L2.4 3.8 L6.4 4 L7 8.6 L0.8 8.6 Z" fill="#4f86c6"/><path d="M7.4 12.6 H12 V15 H7.4 Z" fill="#7fb0e6"/></svg>
<svg class="ic" style="left:1470px;top:153px" width="18" height="13" viewBox="0 0 18 13" fill="none"><rect x="0.9" y="0.6" width="18" height="11" stroke="#8a8a8a" stroke-width="1" fill="#fff"/><path d="M3.5 6.8 L5.8 3.3 L8 6.8 Z" fill="#3f9b77"/><path d="M1.4 10.2 H18" stroke="#b0b0b0" stroke-width="1.2"/></svg>
<svg class="ic" style="left:1470px;top:175.5px" width="18" height="17" viewBox="0 0 18 17" fill="none"><path d="M1 0.4 V16 H18 M1 0.9 H18" stroke="#8a8a8a" stroke-width="1"/><path d="M1 5.6 H18 M1 10.6 H18" stroke="#d0d0d0" stroke-width="0.7"/><circle cx="4.6" cy="12.3" r="1.45" fill="#555"/><circle cx="6.3" cy="8.7" r="1.45" fill="#555"/><circle cx="8.2" cy="5.1" r="1.45" fill="#555"/></svg>
<div class="b" style="left:1472.0px;top:230.4px;width:7.0px;height:4.2px;background:#f2c811;border-radius:2px 0 0 2px"></div>
<span class="t" style="left:1472.8px;top:243.00px;font-size:11.6px;color:#333;">Legend</span>
<div class="b" style="left:1464.4px;top:262.9px;width:20.6px;height:35.6px;border:1px dashed #c4c4c4;border-radius:2px;box-sizing:border-box;background:transparent"></div>
<div class="b" style="left:1467.3px;top:266.6px;width:17.7px;height:21.8px;border:1px solid #d0d0d0;border-radius:2px;box-sizing:border-box;background:#e8e8e8"></div><span class="t" style="left:1472.8px;top:271.00px;font-size:11.6px;color:#333;">POSTCODE</span>
<span class="t" style="left:1472.8px;top:312.00px;font-size:11.6px;color:#333;">Latitude</span>
<div class="b" style="left:1464.4px;top:331.1px;width:20.6px;height:27.4px;border:1px dashed #c4c4c4;border-radius:2px;box-sizing:border-box;background:#fff"></div>
<span class="t" style="left:1475.5px;top:338.00px;font-size:11.6px;color:#555;">Add data fields here</span>
<span class="t" style="left:1472.8px;top:371.00px;font-size:11.6px;color:#333;">Longitude</span>
<div class="b" style="left:1464.4px;top:391.0px;width:20.6px;height:27.5px;border:1px dashed #c4c4c4;border-radius:2px;box-sizing:border-box;background:#fff"></div>
<span class="t" style="left:1475.5px;top:398.00px;font-size:11.6px;color:#555;">Add data fields here</span>
<span class="t" style="left:1472.8px;top:432.00px;font-size:11.6px;color:#333;">Location</span>
<div class="b" style="left:1464.4px;top:451.1px;width:20.6px;height:27.4px;border:1px dashed #c4c4c4;border-radius:2px;box-sizing:border-box;background:#fff"></div>
<span class="t" style="left:1475.5px;top:459.00px;font-size:11.6px;color:#555;">Add data fields here</span>
<span class="t" style="left:1472.8px;top:491.00px;font-size:11.6px;color:#333;">Size</span>
<div class="b" style="left:1464.4px;top:510.4px;width:20.6px;height:29.3px;border:1px dashed #c4c4c4;border-radius:2px;box-sizing:border-box;background:transparent"></div>
<div class="b" style="left:1467.3px;top:515.3px;width:17.7px;height:22.2px;border:1px solid #d0d0d0;border-radius:2px;box-sizing:border-box;background:#e8e8e8"></div><span class="t" style="left:1472.8px;top:520.00px;font-size:11.6px;color:#333;">NUMBER_OF_PATIENTS</span>
<span class="t" style="left:1472.8px;top:553.00px;font-size:11.6px;color:#333;">Tooltips</span>
<div class="b" style="left:1464.4px;top:572.3px;width:20.6px;height:27.4px;border:1px dashed #c4c4c4;border-radius:2px;box-sizing:border-box;background:#fff"></div>
<span class="t" style="left:1475.5px;top:580.00px;font-size:11.6px;color:#555;">Add data fields here</span>
<span class="t" style="left:1475.3px;top:618.00px;font-size:13.6px;color:#252525;font-weight:700;">Drillthrough</span>
<span class="t" style="left:1469.5px;top:651.00px;font-size:11.6px;color:#333;">Cross-report</span>
<span class="t" style="left:1473.6px;top:674.00px;font-size:11.6px;color:#333;">Off</span>
<span class="t" style="left:1469.5px;top:704.00px;font-size:11.6px;color:#333;">Keep all filters</span>
</div>
</body></html>
